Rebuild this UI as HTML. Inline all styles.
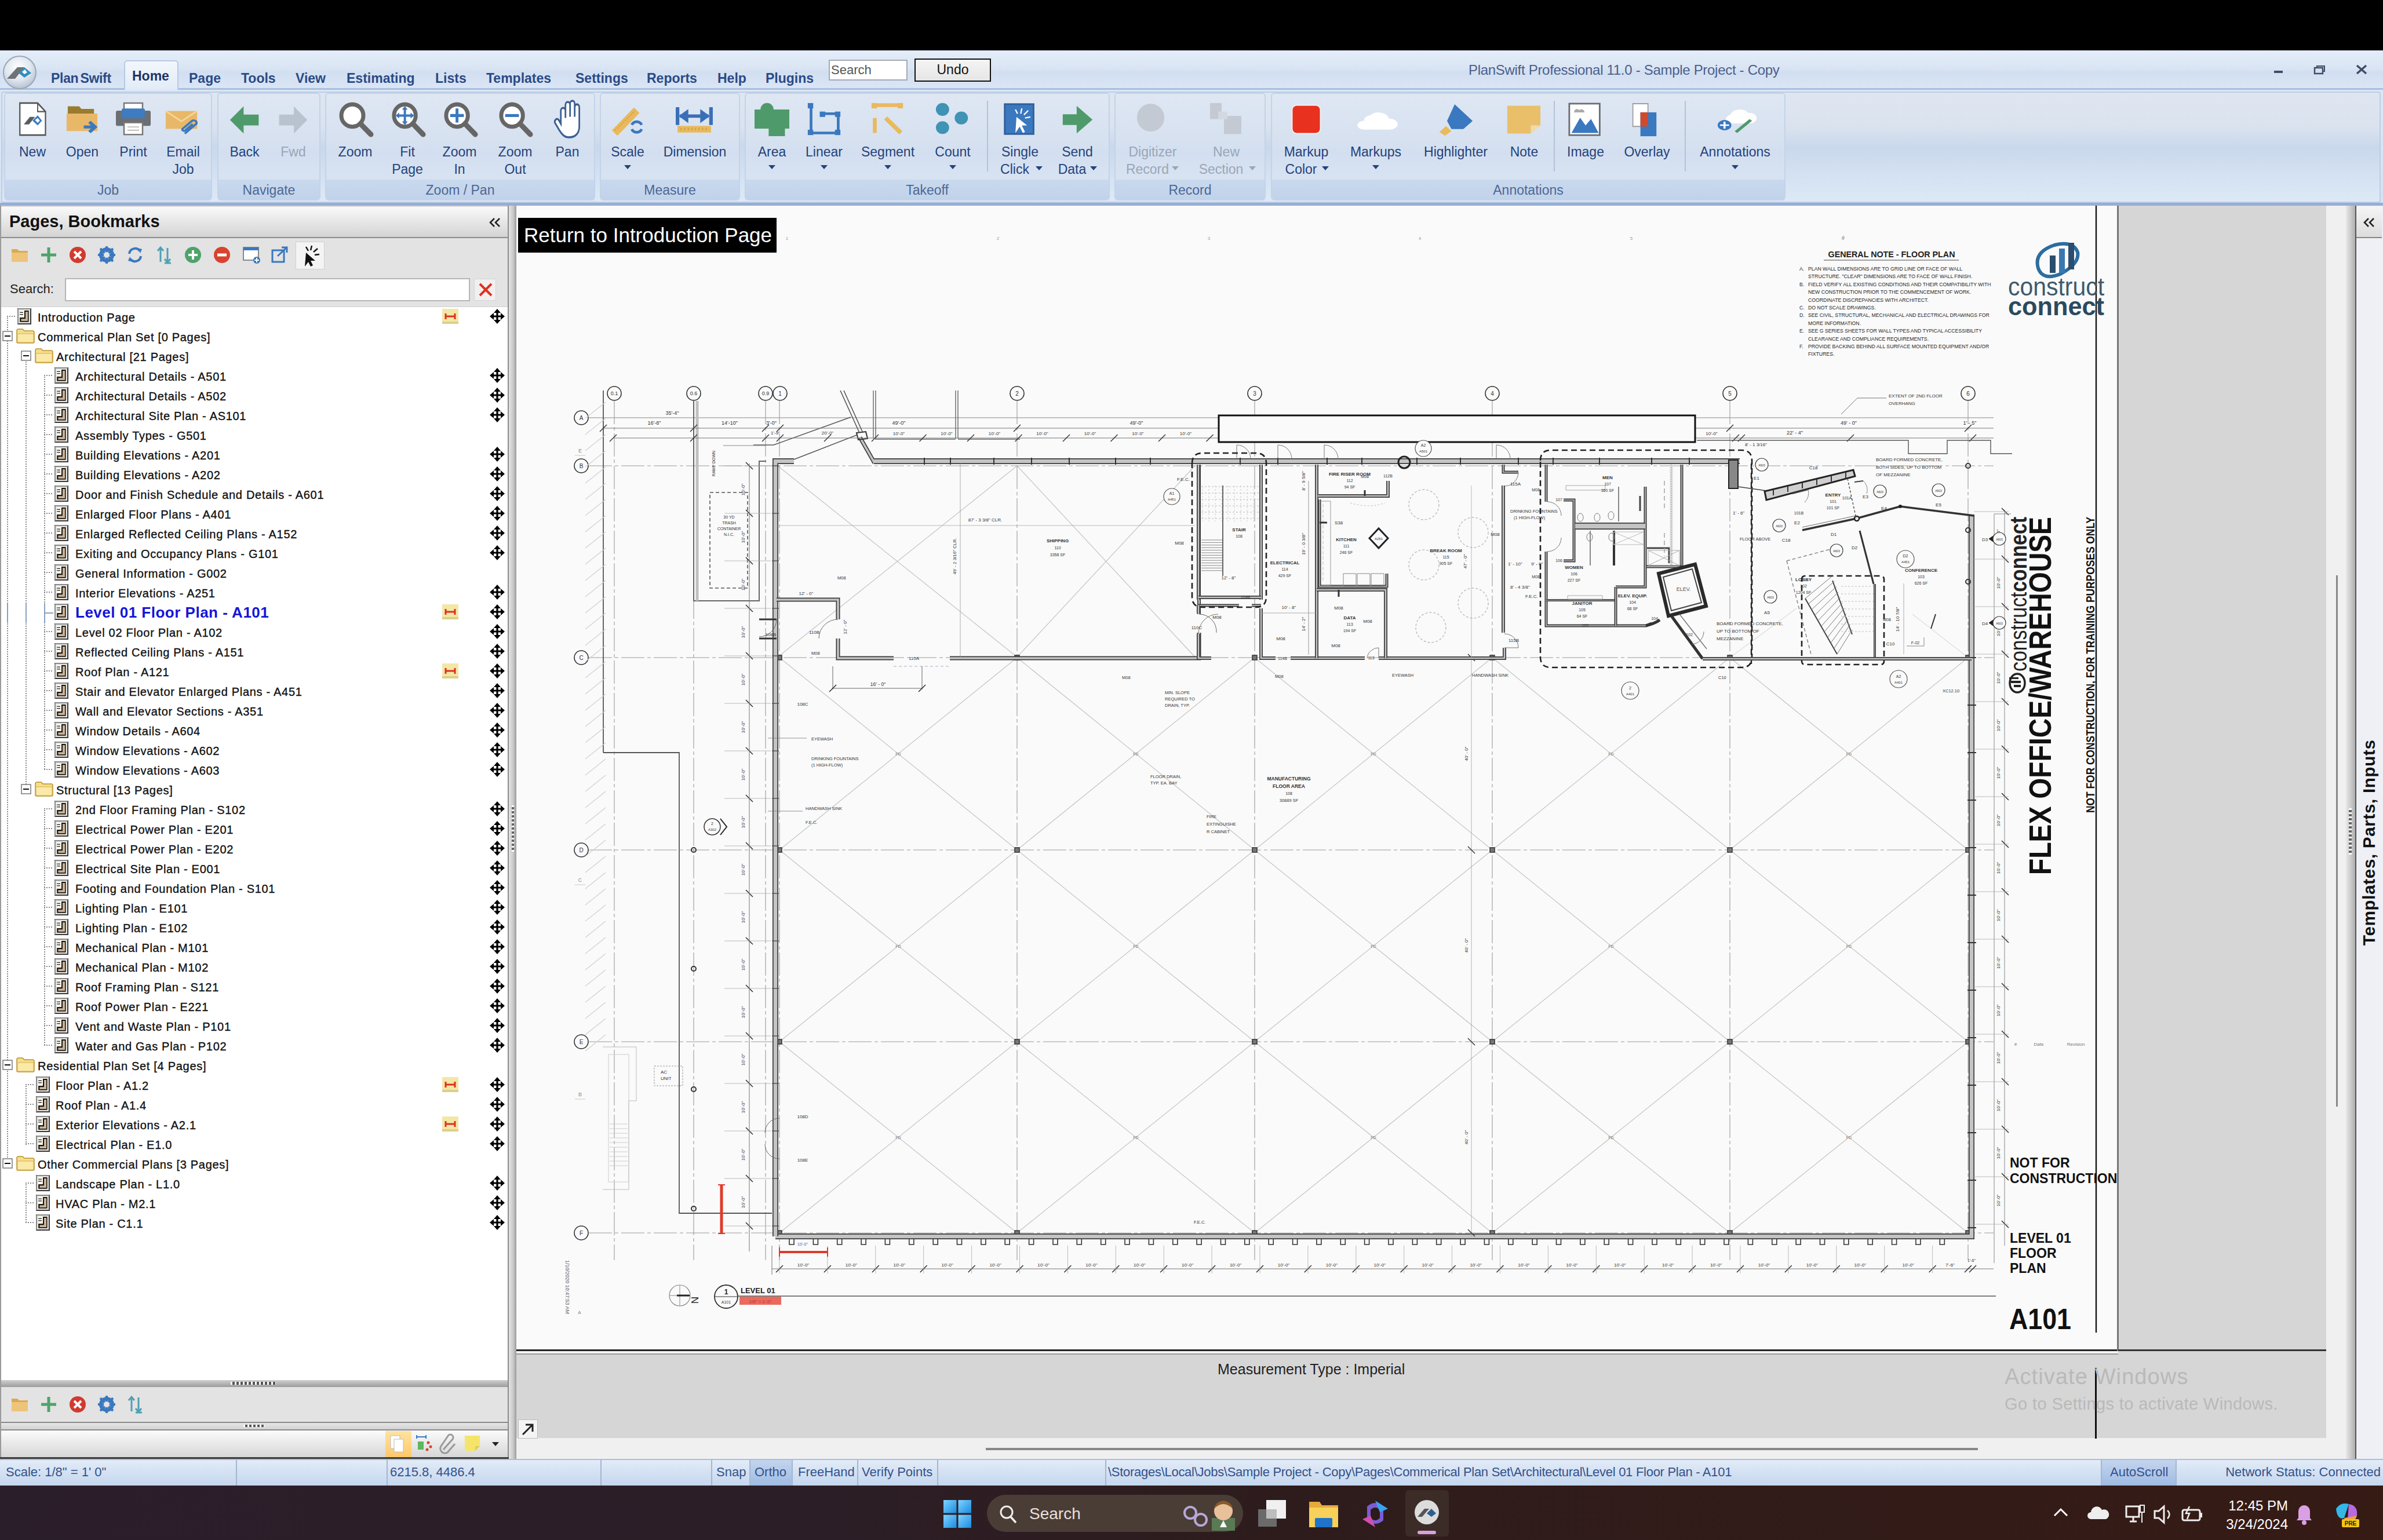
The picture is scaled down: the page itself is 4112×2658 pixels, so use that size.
<!DOCTYPE html>
<html><head><meta charset="utf-8">
<style>
*{margin:0;padding:0;box-sizing:border-box}
html,body{width:4112px;height:2658px;overflow:hidden;background:#000;font-family:"Liberation Sans",sans-serif}
.a{position:absolute}
svg{overflow:visible}
</style></head><body>
<div class="a" style="left:0;top:0;width:4112px;height:87px;background:#000"></div>
<div class="a" style="left:0;top:87px;width:4112px;height:68px;background:linear-gradient(#e4edf9 0%,#dae5f4 45%,#d2dff1 55%,#dbe6f5 100%)"></div>
<div class="a" style="left:0;top:152px;width:4112px;height:3px;background:#a9bfdf"></div>
<svg class="a" style="left:2px;top:94px" width="64" height="64" viewBox="0 0 64 64">
<defs><radialGradient id="lg" cx="45%" cy="35%" r="65%"><stop offset="0" stop-color="#ffffff"/><stop offset="0.6" stop-color="#dfe6ef"/><stop offset="1" stop-color="#b9c3d1"/></radialGradient></defs>
<circle cx="32" cy="31" r="28" fill="url(#lg)" stroke="#9aa7b8" stroke-width="2"/>
<path d="M10 42 L28 22 L40 22 L24 42 Z" fill="#6f7378"/><path d="M30 32 L40 22 L52 32 L40 40 Z" fill="#2f8fc0"/><path d="M36 30 L41 26 L45 31 L40 34Z" fill="#fff"/></svg>
<div class="a" style="left:88px;top:122px;font-size:23px;font-weight:700;color:#2a4a86;letter-spacing:-0.3px">Plan<span style="margin-left:3px">Swift</span></div>
<div class="a" style="left:214px;top:104px;width:94px;height:51px;background:linear-gradient(#f3f7fc,#e2ebf7);border:2px solid #b7c9e3;border-bottom:none;border-radius:6px 6px 0 0"></div>
<div class="a" style="left:228px;top:118px;font-size:23px;font-weight:700;color:#1e3466">Home</div>
<div class="a" style="left:326px;top:122px;font-size:23px;font-weight:700;color:#2a4a86">Page</div>
<div class="a" style="left:416px;top:122px;font-size:23px;font-weight:700;color:#2a4a86">Tools</div>
<div class="a" style="left:510px;top:122px;font-size:23px;font-weight:700;color:#2a4a86">View</div>
<div class="a" style="left:598px;top:122px;font-size:23px;font-weight:700;color:#2a4a86">Estimating</div>
<div class="a" style="left:751px;top:122px;font-size:23px;font-weight:700;color:#2a4a86">Lists</div>
<div class="a" style="left:839px;top:122px;font-size:23px;font-weight:700;color:#2a4a86">Templates</div>
<div class="a" style="left:993px;top:122px;font-size:23px;font-weight:700;color:#2a4a86">Settings</div>
<div class="a" style="left:1116px;top:122px;font-size:23px;font-weight:700;color:#2a4a86">Reports</div>
<div class="a" style="left:1238px;top:122px;font-size:23px;font-weight:700;color:#2a4a86">Help</div>
<div class="a" style="left:1321px;top:122px;font-size:23px;font-weight:700;color:#2a4a86">Plugins</div>
<div class="a" style="left:1430px;top:103px;width:136px;height:36px;background:#fff;border:2px solid #a3aab5;font-size:22px;color:#555;padding:3px 0 0 2px">Search</div>
<div class="a" style="left:1578px;top:101px;width:132px;height:40px;background:linear-gradient(#f4f4f4,#e6e6e6);border:2.5px solid #111;font-size:23px;color:#111;text-align:center;line-height:35px">Undo</div>
<div class="a" style="left:2534px;top:107px;font-size:24px;color:#4b5f8c;white-space:nowrap;letter-spacing:-0.3px">PlanSwift Professional 11.0 - Sample Project - Copy</div>
<div class="a" style="left:3924px;top:122px;width:15px;height:4px;background:#3e4c66"></div>
<svg class="a" style="left:3992px;top:112px" width="22" height="18"><rect x="2" y="5" width="14" height="10" fill="none" stroke="#3e4c66" stroke-width="2.5"/><path d="M6 5 V2 H19 V11 H16" fill="none" stroke="#3e4c66" stroke-width="2"/></svg>
<svg class="a" style="left:4064px;top:110px" width="22" height="20"><path d="M3 3 L19 17 M19 3 L3 17" stroke="#3e4c66" stroke-width="3.5"/></svg>
<div class="a" style="left:0;top:155px;width:4112px;height:195px;background:linear-gradient(#dce7f5,#d6e2f2)"></div>
<div class="a" style="left:0;top:350px;width:4112px;height:5px;background:#97add3"></div>
<div class="a" style="left:2px;top:158px;width:4106px;height:192px;border:2px solid #bccde6;border-radius:4px;background:linear-gradient(#dfe6f1 0%,#dbe3ef 30%,#cad8ec 50%,#d3e1f2 75%,#dde9f6 100%)"></div>
<div class="a" style="left:7px;top:160px;width:359px;height:186px;border:2px solid #c3d3e9;border-radius:6px;background:linear-gradient(#dfe7f3 0%,#d6e1f0 45%,#d3dff0 55%,#dbe6f3 100%);overflow:hidden"><div class="a" style="left:0;top:148px;width:359px;height:36px;background:linear-gradient(#c9d9ee,#c0d2ea)"></div><div class="a" style="left:0;top:153px;width:355px;text-align:center;font-size:23px;color:#4d6894">Job</div></div>
<div class="a" style="left:375px;top:160px;width:178px;height:186px;border:2px solid #c3d3e9;border-radius:6px;background:linear-gradient(#dfe7f3 0%,#d6e1f0 45%,#d3dff0 55%,#dbe6f3 100%);overflow:hidden"><div class="a" style="left:0;top:148px;width:178px;height:36px;background:linear-gradient(#c9d9ee,#c0d2ea)"></div><div class="a" style="left:0;top:153px;width:174px;text-align:center;font-size:23px;color:#4d6894">Navigate</div></div>
<div class="a" style="left:561px;top:160px;width:466px;height:186px;border:2px solid #c3d3e9;border-radius:6px;background:linear-gradient(#dfe7f3 0%,#d6e1f0 45%,#d3dff0 55%,#dbe6f3 100%);overflow:hidden"><div class="a" style="left:0;top:148px;width:466px;height:36px;background:linear-gradient(#c9d9ee,#c0d2ea)"></div><div class="a" style="left:0;top:153px;width:462px;text-align:center;font-size:23px;color:#4d6894">Zoom / Pan</div></div>
<div class="a" style="left:1035px;top:160px;width:242px;height:186px;border:2px solid #c3d3e9;border-radius:6px;background:linear-gradient(#dfe7f3 0%,#d6e1f0 45%,#d3dff0 55%,#dbe6f3 100%);overflow:hidden"><div class="a" style="left:0;top:148px;width:242px;height:36px;background:linear-gradient(#c9d9ee,#c0d2ea)"></div><div class="a" style="left:0;top:153px;width:238px;text-align:center;font-size:23px;color:#4d6894">Measure</div></div>
<div class="a" style="left:1285px;top:160px;width:630px;height:186px;border:2px solid #c3d3e9;border-radius:6px;background:linear-gradient(#dfe7f3 0%,#d6e1f0 45%,#d3dff0 55%,#dbe6f3 100%);overflow:hidden"><div class="a" style="left:0;top:148px;width:630px;height:36px;background:linear-gradient(#c9d9ee,#c0d2ea)"></div><div class="a" style="left:0;top:153px;width:626px;text-align:center;font-size:23px;color:#4d6894">Takeoff</div></div>
<div class="a" style="left:1923px;top:160px;width:261px;height:186px;border:2px solid #c3d3e9;border-radius:6px;background:linear-gradient(#dfe7f3 0%,#d6e1f0 45%,#d3dff0 55%,#dbe6f3 100%);overflow:hidden"><div class="a" style="left:0;top:148px;width:261px;height:36px;background:linear-gradient(#c9d9ee,#c0d2ea)"></div><div class="a" style="left:0;top:153px;width:257px;text-align:center;font-size:23px;color:#4d6894">Record</div></div>
<div class="a" style="left:2193px;top:160px;width:888px;height:186px;border:2px solid #c3d3e9;border-radius:6px;background:linear-gradient(#dfe7f3 0%,#d6e1f0 45%,#d3dff0 55%,#dbe6f3 100%);overflow:hidden"><div class="a" style="left:0;top:148px;width:888px;height:36px;background:linear-gradient(#c9d9ee,#c0d2ea)"></div><div class="a" style="left:0;top:153px;width:884px;text-align:center;font-size:23px;color:#4d6894">Annotations</div></div>
<svg class="a" style="left:32px;top:176px" width="48" height="59" viewBox="0 0 64 64" preserveAspectRatio="none"><path d="M3 2 H44 L62 18 V62 H3 Z" fill="#fff" stroke="#555" stroke-width="3"/><path d="M44 2 V18 H62" fill="none" stroke="#555" stroke-width="2.5"/><path d="M12 42 L26 28 L38 28 L24 42Z" fill="#595d62"/><path d="M32 35 L44 25 L54 35 L44 44Z" fill="#3b7cc4"/><path d="M38 34 L44 30 L49 35 L44 39Z" fill="#fff"/></svg>
<div class="a" style="left:-24px;top:249px;width:160px;text-align:center;font-size:23px;color:#24427a;white-space:nowrap">New</div>
<svg class="a" style="left:111px;top:180px" width="63" height="57" viewBox="0 0 64 64" preserveAspectRatio="none"><path d="M6 4 H26 L30 9 H52 V22 H6Z" fill="#9a7b2e"/><path d="M4 18 H58 V52 H4Z" fill="#e8b868"/><path d="M34 44 H52 M44 34 L54 44 L44 54" fill="none" stroke="#3a78c0" stroke-width="6"/></svg>
<div class="a" style="left:62px;top:249px;width:160px;text-align:center;font-size:23px;color:#24427a;white-space:nowrap">Open</div>
<svg class="a" style="left:198px;top:176px" width="64" height="60" viewBox="0 0 64 64" preserveAspectRatio="none"><rect x="16" y="2" width="32" height="14" fill="#fff" stroke="#777" stroke-width="2.5"/><rect x="2" y="16" width="60" height="28" rx="3" fill="#6b6e72"/><rect x="12" y="12" width="40" height="18" rx="3" fill="#3f7bc0"/><rect x="16" y="38" width="32" height="22" fill="#fff" stroke="#777" stroke-width="2.5"/><path d="M22 46 H42 M22 52 H42" stroke="#bbb" stroke-width="2"/></svg>
<div class="a" style="left:150px;top:249px;width:160px;text-align:center;font-size:23px;color:#24427a;white-space:nowrap">Print</div>
<svg class="a" style="left:284px;top:185px" width="62" height="52" viewBox="0 0 64 64" preserveAspectRatio="none"><rect x="2" y="8" width="56" height="38" fill="#e8b868"/><path d="M2 8 L30 30 L58 8" fill="none" stroke="#f4d79e" stroke-width="3"/><path d="M36 56 L56 36 a5 5 0 0 0 -7 -7 L32 46 a3 3 0 0 0 4 4 L50 36" fill="none" stroke="#3a78c0" stroke-width="4"/></svg>
<div class="a" style="left:236px;top:249px;width:160px;text-align:center;font-size:23px;color:#24427a;white-space:nowrap">Email</div>
<div class="a" style="left:236px;top:279px;width:160px;text-align:center;font-size:23px;color:#24427a;white-space:nowrap">Job</div>
<svg class="a" style="left:396px;top:182px" width="52" height="50" viewBox="0 0 64 64" preserveAspectRatio="none"><path d="M1 32 L30 2 V20 H62 V44 H30 V62Z" fill="#4f9a6a"/></svg>
<div class="a" style="left:342px;top:249px;width:160px;text-align:center;font-size:23px;color:#24427a;white-space:nowrap">Back</div>
<svg class="a" style="left:480px;top:182px" width="51" height="50" viewBox="0 0 64 64" preserveAspectRatio="none"><path d="M63 32 L34 2 V20 H2 V44 H34 V62Z" fill="#b9c3cf"/></svg>
<div class="a" style="left:426px;top:249px;width:160px;text-align:center;font-size:23px;color:#9aa6b6;white-space:nowrap">Fwd</div>
<svg class="a" style="left:582px;top:173px" width="64" height="65" viewBox="0 0 64 64" preserveAspectRatio="none"><circle cx="26" cy="26" r="19" fill="#fff" stroke="#666" stroke-width="7"/><path d="M40 40 L58 58" stroke="#666" stroke-width="9" stroke-linecap="round"/></svg>
<div class="a" style="left:533px;top:249px;width:160px;text-align:center;font-size:23px;color:#24427a;white-space:nowrap">Zoom</div>
<svg class="a" style="left:673px;top:173px" width="63" height="65" viewBox="0 0 64 64" preserveAspectRatio="none"><circle cx="26" cy="26" r="19" fill="#fff" stroke="#666" stroke-width="7"/><path d="M40 40 L58 58" stroke="#666" stroke-width="9" stroke-linecap="round"/><path d="M26 12 V40 M12 26 H40" stroke="#3a78c0" stroke-width="4"/><path d="M26 10 L21 16 H31Z M26 42 L21 36 H31Z M10 26 L16 21 V31Z M42 26 L36 21 V31Z" fill="#3a78c0"/></svg>
<div class="a" style="left:623px;top:249px;width:160px;text-align:center;font-size:23px;color:#24427a;white-space:nowrap">Fit</div>
<div class="a" style="left:623px;top:279px;width:160px;text-align:center;font-size:23px;color:#24427a;white-space:nowrap">Page</div>
<svg class="a" style="left:763px;top:173px" width="63" height="65" viewBox="0 0 64 64" preserveAspectRatio="none"><circle cx="26" cy="26" r="19" fill="#fff" stroke="#666" stroke-width="7"/><path d="M40 40 L58 58" stroke="#666" stroke-width="9" stroke-linecap="round"/><path d="M26 14 V38 M14 26 H38" stroke="#3a78c0" stroke-width="5"/></svg>
<div class="a" style="left:713px;top:249px;width:160px;text-align:center;font-size:23px;color:#24427a;white-space:nowrap">Zoom</div>
<div class="a" style="left:713px;top:279px;width:160px;text-align:center;font-size:23px;color:#24427a;white-space:nowrap">In</div>
<svg class="a" style="left:858px;top:173px" width="63" height="65" viewBox="0 0 64 64" preserveAspectRatio="none"><circle cx="26" cy="26" r="19" fill="#fff" stroke="#666" stroke-width="7"/><path d="M40 40 L58 58" stroke="#666" stroke-width="9" stroke-linecap="round"/><path d="M14 26 H38" stroke="#3a78c0" stroke-width="5"/></svg>
<div class="a" style="left:809px;top:249px;width:160px;text-align:center;font-size:23px;color:#24427a;white-space:nowrap">Zoom</div>
<div class="a" style="left:809px;top:279px;width:160px;text-align:center;font-size:23px;color:#24427a;white-space:nowrap">Out</div>
<svg class="a" style="left:955px;top:173px" width="51" height="65" viewBox="0 0 64 64" preserveAspectRatio="none"><path d="M16 40 V18 a5 5 0 0 1 10 0 V30 V8 a5 5 0 0 1 10 0 V28 V6 a5 5 0 0 1 10 0 V28 V12 a5 5 0 0 1 10 0 V44 C56 56 48 63 34 63 C24 63 18 58 12 50 L3 38 a5 5 0 0 1 8 -5 Z" fill="#fff" stroke="#3b5f94" stroke-width="3.5"/></svg>
<div class="a" style="left:899px;top:249px;width:160px;text-align:center;font-size:23px;color:#24427a;white-space:nowrap">Pan</div>
<svg class="a" style="left:1052px;top:178px" width="61" height="60" viewBox="0 0 64 64" preserveAspectRatio="none"><path d="M4 50 L44 8 L54 18 L14 60Z" fill="#e9b95c"/><path d="M10 50 L46 14" stroke="#c99a40" stroke-width="2" stroke-dasharray="2 3"/><path d="M40 40 a10 10 0 0 1 18 0 M58 48 a10 10 0 0 1 -18 0" fill="none" stroke="#3a78c0" stroke-width="5"/></svg>
<div class="a" style="left:1003px;top:249px;width:160px;text-align:center;font-size:23px;color:#24427a;white-space:nowrap">Scale</div>
<svg class="a" style="left:1077px;top:285px" width="12" height="8"><path d="M0 0 H12 L6 7Z" fill="#24427a"/></svg>
<svg class="a" style="left:1165px;top:180px" width="66" height="52" viewBox="0 0 64 64" preserveAspectRatio="none"><path d="M4 6 V44 M60 6 V44" stroke="#3a6fb8" stroke-width="6"/><path d="M8 25 H56" stroke="#3a6fb8" stroke-width="7"/><path d="M6 25 L22 10 V40Z M58 25 L42 10 V40Z" fill="#3a6fb8"/><rect x="4" y="46" width="56" height="14" fill="#e9b95c"/><path d="M10 50 V55 M16 50 V55 M22 50 V55 M28 50 V55 M34 50 V55 M40 50 V55 M46 50 V55 M52 50 V55" stroke="#c99a40" stroke-width="1.5"/></svg>
<div class="a" style="left:1119px;top:249px;width:160px;text-align:center;font-size:23px;color:#24427a;white-space:nowrap">Dimension</div>
<svg class="a" style="left:1302px;top:176px" width="60" height="59" viewBox="0 0 64 64" preserveAspectRatio="none"><path d="M0 14 H11 a12 12 0 0 1 24 0 H64 V50 H56 V64 H26 V50 H0 Z" fill="#4f9a6a"/></svg>
<div class="a" style="left:1252px;top:249px;width:160px;text-align:center;font-size:23px;color:#24427a;white-space:nowrap">Area</div>
<svg class="a" style="left:1326px;top:285px" width="12" height="8"><path d="M0 0 H12 L6 7Z" fill="#24427a"/></svg>
<svg class="a" style="left:1392px;top:176px" width="60" height="59" viewBox="0 0 64 64" preserveAspectRatio="none"><path d="M8 6 V58 H58 V22 H28" fill="none" stroke="#3a78c0" stroke-width="5"/><rect x="2" y="2" width="10" height="10" fill="#3a78c0"/><rect x="2" y="52" width="10" height="10" fill="#3a78c0"/><rect x="52" y="52" width="10" height="10" fill="#3a78c0"/><rect x="52" y="18" width="10" height="10" fill="#3a78c0"/><rect x="24" y="18" width="10" height="10" fill="#3a78c0"/></svg>
<div class="a" style="left:1342px;top:249px;width:160px;text-align:center;font-size:23px;color:#24427a;white-space:nowrap">Linear</div>
<svg class="a" style="left:1416px;top:285px" width="12" height="8"><path d="M0 0 H12 L6 7Z" fill="#24427a"/></svg>
<svg class="a" style="left:1502px;top:176px" width="60" height="59" viewBox="0 0 64 64" preserveAspectRatio="none"><path d="M4 6 H58" stroke="#e9b95c" stroke-width="7"/><rect x="2" y="2" width="10" height="10" fill="#e9b95c"/><rect x="50" y="2" width="10" height="10" fill="#e9b95c"/><path d="M8 30 V58" stroke="#e9b95c" stroke-width="7"/><path d="M28 30 L56 58" stroke="#e9b95c" stroke-width="8"/></svg>
<div class="a" style="left:1452px;top:249px;width:160px;text-align:center;font-size:23px;color:#24427a;white-space:nowrap">Segment</div>
<svg class="a" style="left:1526px;top:285px" width="12" height="8"><path d="M0 0 H12 L6 7Z" fill="#24427a"/></svg>
<svg class="a" style="left:1613px;top:176px" width="61" height="59" viewBox="0 0 64 64" preserveAspectRatio="none"><circle cx="14" cy="14" r="12" fill="#3f93b4"/><circle cx="48" cy="30" r="12" fill="#3f93b4"/><circle cx="14" cy="48" r="12" fill="#3f93b4"/></svg>
<div class="a" style="left:1564px;top:249px;width:160px;text-align:center;font-size:23px;color:#24427a;white-space:nowrap">Count</div>
<svg class="a" style="left:1638px;top:285px" width="12" height="8"><path d="M0 0 H12 L6 7Z" fill="#24427a"/></svg>
<svg class="a" style="left:1730px;top:176px" width="59" height="59" viewBox="0 0 64 64" preserveAspectRatio="none"><rect x="4" y="4" width="54" height="56" fill="#3a78c0" stroke="#2f5e9a" stroke-width="3"/><path d="M24 58 L26 28 L46 44 L36 44 L42 56 L38 58 L32 46Z" fill="#fff"/><path d="M34 22 L36 12 M40 24 L48 16 M42 30 L52 28 M28 22 L24 14" stroke="#fff" stroke-width="2.5"/></svg>
<div class="a" style="left:1680px;top:249px;width:160px;text-align:center;font-size:23px;color:#24427a;white-space:nowrap">Single</div>
<div class="a" style="left:1671px;top:279px;width:160px;text-align:center;font-size:23px;color:#24427a;white-space:nowrap">Click</div>
<svg class="a" style="left:1787px;top:287px" width="12" height="8"><path d="M0 0 H12 L6 7Z" fill="#24427a"/></svg>
<svg class="a" style="left:1833px;top:182px" width="53" height="49" viewBox="0 0 64 64" preserveAspectRatio="none"><path d="M1 20 H30 V1 L63 32 L30 63 V44 H1Z" fill="#4f9a6a"/></svg>
<div class="a" style="left:1779px;top:249px;width:160px;text-align:center;font-size:23px;color:#24427a;white-space:nowrap">Send</div>
<div class="a" style="left:1770px;top:279px;width:160px;text-align:center;font-size:23px;color:#24427a;white-space:nowrap">Data</div>
<svg class="a" style="left:1881px;top:287px" width="12" height="8"><path d="M0 0 H12 L6 7Z" fill="#24427a"/></svg>
<svg class="a" style="left:1961px;top:178px" width="56" height="57" viewBox="0 0 64 64" preserveAspectRatio="none"><circle cx="28" cy="28" r="27" fill="#c3cad3"/></svg>
<div class="a" style="left:1909px;top:249px;width:160px;text-align:center;font-size:23px;color:#9aa6b6;white-space:nowrap">Digitizer</div>
<div class="a" style="left:1900px;top:279px;width:160px;text-align:center;font-size:23px;color:#9aa6b6;white-space:nowrap">Record</div>
<svg class="a" style="left:2022px;top:287px" width="12" height="8"><path d="M0 0 H12 L6 7Z" fill="#9aa6b6"/></svg>
<svg class="a" style="left:2084px;top:176px" width="64" height="59" viewBox="0 0 64 64" preserveAspectRatio="none"><rect x="4" y="2" width="20" height="30" fill="#c3cad3"/><rect x="28" y="26" width="30" height="34" fill="#c3cad3"/><rect x="18" y="18" width="16" height="14" fill="#d3d9e0"/></svg>
<div class="a" style="left:2036px;top:249px;width:160px;text-align:center;font-size:23px;color:#9aa6b6;white-space:nowrap">New</div>
<div class="a" style="left:2027px;top:279px;width:160px;text-align:center;font-size:23px;color:#9aa6b6;white-space:nowrap">Section</div>
<svg class="a" style="left:2155px;top:287px" width="12" height="8"><path d="M0 0 H12 L6 7Z" fill="#9aa6b6"/></svg>
<svg class="a" style="left:2228px;top:180px" width="52" height="52" viewBox="0 0 64 64" preserveAspectRatio="none"><rect x="2" y="2" width="60" height="60" rx="10" fill="#e8311f" stroke="#f6f6f6" stroke-width="2"/></svg>
<div class="a" style="left:2174px;top:249px;width:160px;text-align:center;font-size:23px;color:#24427a;white-space:nowrap">Markup</div>
<div class="a" style="left:2165px;top:279px;width:160px;text-align:center;font-size:23px;color:#24427a;white-space:nowrap">Color</div>
<svg class="a" style="left:2281px;top:287px" width="12" height="8"><path d="M0 0 H12 L6 7Z" fill="#24427a"/></svg>
<svg class="a" style="left:2345px;top:187px" width="57" height="38" viewBox="0 0 64 64" preserveAspectRatio="none"><path d="M10 62 a12 12 0 0 1 0 -26 a14 14 0 0 1 12 -16 a20 20 0 0 1 36 10 a14 14 0 0 1 2 32Z" fill="#fff"/></svg>
<div class="a" style="left:2294px;top:249px;width:160px;text-align:center;font-size:23px;color:#24427a;white-space:nowrap">Markups</div>
<svg class="a" style="left:2368px;top:285px" width="12" height="8"><path d="M0 0 H12 L6 7Z" fill="#24427a"/></svg>
<svg class="a" style="left:2482px;top:179px" width="60" height="56" viewBox="0 0 64 64" preserveAspectRatio="none"><path d="M30 1 L63 34 L46 50 L24 50 L16 34Z" fill="#3a78c0"/><path d="M14 44 L24 54 L12 63 L2 56Z" fill="#e9b95c"/></svg>
<div class="a" style="left:2432px;top:249px;width:160px;text-align:center;font-size:23px;color:#24427a;white-space:nowrap">Highlighter</div>
<svg class="a" style="left:2599px;top:181px" width="61" height="51" viewBox="0 0 64 64" preserveAspectRatio="none"><path d="M2 2 H62 V44 L44 62 H2Z" fill="#e9bf6a"/><path d="M44 62 V44 H62" fill="#f4dba0" stroke="#e3c98a" stroke-width="2"/></svg>
<div class="a" style="left:2550px;top:249px;width:160px;text-align:center;font-size:23px;color:#24427a;white-space:nowrap">Note</div>
<svg class="a" style="left:2706px;top:177px" width="60" height="60" viewBox="0 0 64 64" preserveAspectRatio="none"><rect x="2" y="2" width="56" height="58" fill="#fff" stroke="#6b6e72" stroke-width="3"/><path d="M6 56 L22 28 L32 42 L42 30 L56 56Z" fill="#3a78c0"/><path d="M12 20 a5 5 0 0 1 8 -6 a6 6 0 0 1 10 4 H12Z" fill="#aaa"/></svg>
<div class="a" style="left:2656px;top:249px;width:160px;text-align:center;font-size:23px;color:#24427a;white-space:nowrap">Image</div>
<svg class="a" style="left:2816px;top:177px" width="52" height="60" viewBox="0 0 64 64" preserveAspectRatio="none"><rect x="2" y="2" width="32" height="42" fill="#fff" stroke="#999" stroke-width="2"/><rect x="18" y="18" width="34" height="44" fill="#3a78c0"/><rect x="18" y="18" width="16" height="26" fill="#d04a2e"/></svg>
<div class="a" style="left:2762px;top:249px;width:160px;text-align:center;font-size:23px;color:#24427a;white-space:nowrap">Overlay</div>
<svg class="a" style="left:2962px;top:183px" width="63" height="48" viewBox="0 0 64 64" preserveAspectRatio="none"><path d="M20 40 a12 12 0 0 1 4 -20 a18 18 0 0 1 32 -4 a12 12 0 0 1 4 24Z" fill="#fff"/><circle cx="14" cy="44" r="12" fill="#3a78c0"/><path d="M14 36 V52 M6 44 H22" stroke="#fff" stroke-width="3.5"/><path d="M34 60 L60 32" stroke="#4f9a6a" stroke-width="6"/></svg>
<div class="a" style="left:2914px;top:249px;width:160px;text-align:center;font-size:23px;color:#24427a;white-space:nowrap">Annotations</div>
<svg class="a" style="left:2988px;top:285px" width="12" height="8"><path d="M0 0 H12 L6 7Z" fill="#24427a"/></svg>
<div class="a" style="left:1703px;top:174px;width:2px;height:122px;background:#b3c3d9"></div>
<div class="a" style="left:2681px;top:174px;width:2px;height:122px;background:#b3c3d9"></div>
<div class="a" style="left:2907px;top:174px;width:2px;height:122px;background:#b3c3d9"></div>
<div class="a" style="left:0;top:355px;width:878px;height:2163px;background:#d8d8d8"></div>
<div class="a" style="left:2px;top:357px;width:874px;height:54px;background:linear-gradient(#fafafa,#e6e6e6 50%,#d4d4d4);border-bottom:2px solid #8c8c8c"></div>
<div class="a" style="left:16px;top:366px;font-size:29px;font-weight:700;color:#111">Pages, Bookmarks</div>
<svg class="a" style="left:844px;top:376px" width="22" height="16"><path d="M9 1 L2 8 L9 15 M18 1 L11 8 L18 15" fill="none" stroke="#222" stroke-width="2.6"/></svg>
<div class="a" style="left:2px;top:411px;width:874px;height:118px;background:#e3e3e3"></div>
<div class="a" style="left:510px;top:417px;width:50px;height:48px;background:#f4f4f4;border:1px solid #d0d0d0"></div>
<svg class="a" style="left:18px;top:424px" width="32" height="32" viewBox="0 0 32 32"><path d="M2 6 H12 L15 9 H30 V28 H2Z" fill="#d9aa55"/><path d="M2 12 H30 V28 H2Z" fill="#eec47a"/></svg><svg class="a" style="left:68px;top:424px" width="32" height="32" viewBox="0 0 32 32"><path d="M16 3 V29 M3 16 H29" stroke="#4fa36a" stroke-width="5"/></svg><svg class="a" style="left:118px;top:424px" width="32" height="32" viewBox="0 0 32 32"><circle cx="16" cy="16" r="14" fill="#d13b2e"/><path d="M10 10 L22 22 M22 10 L10 22" stroke="#fff" stroke-width="4"/></svg><svg class="a" style="left:168px;top:424px" width="32" height="32" viewBox="0 0 32 32"><circle cx="16" cy="16" r="10" fill="none" stroke="#3a78c0" stroke-width="6"/><path d="M16 1 V31 M1 16 H31 M5 5 L27 27 M27 5 L5 27" stroke="#3a78c0" stroke-width="4"/><circle cx="16" cy="16" r="5" fill="#e4e4e4"/></svg><svg class="a" style="left:217px;top:424px" width="32" height="32" viewBox="0 0 32 32"><path d="M6 14 a10 10 0 0 1 18 -5 M26 18 a10 10 0 0 1 -18 5" fill="none" stroke="#3a78c0" stroke-width="4"/><path d="M20 4 L28 6 L25 13Z M12 28 L4 26 L7 19Z" fill="#3a78c0"/></svg><svg class="a" style="left:267px;top:424px" width="32" height="32" viewBox="0 0 32 32"><path d="M10 28 V4 M5 9 L10 3 L15 9 M22 4 V28 M17 23 L22 29 L27 23 M17 30 H28" fill="none" stroke="#4fa0b4" stroke-width="3"/></svg><svg class="a" style="left:317px;top:424px" width="32" height="32" viewBox="0 0 32 32"><circle cx="16" cy="16" r="14" fill="#4fa36a"/><path d="M16 8 V24 M8 16 H24" stroke="#fff" stroke-width="4"/></svg><svg class="a" style="left:367px;top:424px" width="32" height="32" viewBox="0 0 32 32"><circle cx="16" cy="16" r="14" fill="#d9432e"/><path d="M8 16 H24" stroke="#fff" stroke-width="5"/></svg><svg class="a" style="left:418px;top:424px" width="32" height="32" viewBox="0 0 32 32"><rect x="2" y="3" width="26" height="22" fill="#fff" stroke="#888" stroke-width="2"/><rect x="2" y="3" width="26" height="5" fill="#3a78c0"/><circle cx="25" cy="25" r="6" fill="#3a78c0"/><path d="M25 21 V29 M21 25 H29" stroke="#fff" stroke-width="2"/></svg><svg class="a" style="left:467px;top:424px" width="32" height="32" viewBox="0 0 32 32"><rect x="3" y="8" width="20" height="20" fill="none" stroke="#3a78c0" stroke-width="3"/><path d="M12 18 L28 3 M19 3 H28 V12" fill="none" stroke="#3a78c0" stroke-width="3"/></svg>
<svg class="a" style="left:518px;top:422px" width="34" height="40" viewBox="0 0 34 40"><path d="M8 38 L10 14 L26 28 L18 28 L22 36 L18 38 L14 30Z" fill="#111"/><path d="M18 10 L20 2 M23 13 L30 7 M25 18 L33 17 M14 11 L10 4" stroke="#111" stroke-width="2.5"/></svg>
<div class="a" style="left:17px;top:486px;font-size:22px;color:#222">Search:</div>
<div class="a" style="left:112px;top:480px;width:699px;height:40px;background:#fff;border:2px solid #b5b5b5"></div>
<div class="a" style="left:818px;top:481px;width:38px;height:38px;background:#f0f0f0;border:1px solid #d5d5d5"></div>
<svg class="a" style="left:824px;top:486px" width="28" height="28"><path d="M4 4 L24 24 M24 4 L4 24" stroke="#e0301e" stroke-width="4"/></svg>
<div class="a" style="left:2px;top:529px;width:874px;height:1853px;background:#fff;border-top:1px solid #cfcfcf"></div>
<div class="a" style="left:12px;top:548px;width:2px;height:1462px;background:repeating-linear-gradient(#8a8a8a 0 2px,transparent 2px 4px)"></div>
<div class="a" style="left:44px;top:616px;width:2px;height:748px;background:repeating-linear-gradient(#8a8a8a 0 2px,transparent 2px 4px)"></div>
<div class="a" style="left:76px;top:650px;width:2px;height:680px;background:repeating-linear-gradient(#8a8a8a 0 2px,transparent 2px 4px)"></div>
<div class="a" style="left:76px;top:1398px;width:2px;height:408px;background:repeating-linear-gradient(#8a8a8a 0 2px,transparent 2px 4px)"></div>
<div class="a" style="left:44px;top:1874px;width:2px;height:102px;background:repeating-linear-gradient(#8a8a8a 0 2px,transparent 2px 4px)"></div>
<div class="a" style="left:44px;top:2044px;width:2px;height:68px;background:repeating-linear-gradient(#8a8a8a 0 2px,transparent 2px 4px)"></div>
<div class="a" style="left:12px;top:1041px;width:2px;height:34px;background:#8aa0bd"></div>
<div class="a" style="left:44px;top:1041px;width:2px;height:34px;background:#8aa0bd"></div>
<div class="a" style="left:76px;top:1041px;width:2px;height:34px;background:#8aa0bd"></div>
<div class="a" style="left:76px;top:1057px;width:16px;height:2px;background:#8aa0bd"></div>
<div class="a" style="left:12px;top:545px;width:16px;height:2px;background:repeating-linear-gradient(90deg,#8a8a8a 0 2px,transparent 2px 4px)"></div>
<svg class="a" style="left:30px;top:532px" width="24" height="28" viewBox="0 0 24 28"><rect x="1" y="1" width="22" height="26" fill="#fdfcf6" stroke="#3a3a3a" stroke-width="2"/><path d="M1 1 H23 M1 1 V27" stroke="#888" stroke-width="2"/><rect x="3" y="3" width="18" height="22" fill="none" stroke="#d0d0d0" stroke-width="1"/><path d="M12 4 H19.6 V23.7 H4.2 V16 H12Z" fill="#1a140c"/><path d="M14 6 H18 V22 H6.4 V18.3 H14Z" fill="#c9b49a"/><path d="M4.2 7.2 H10 M4.2 10.8 H10" stroke="#3a3a30" stroke-width="1.6"/></svg>
<div class="a" style="left:65px;top:535px;font-size:20px;line-height:26px;color:#111;white-space:nowrap;letter-spacing:0.7px;-webkit-text-stroke:0.35px #111">Introduction Page</div>
<svg class="a" style="left:763px;top:533px" width="28" height="26" viewBox="0 0 28 26"><rect x="0" y="0" width="28" height="26" fill="#f3e7a6"/><rect x="0" y="22" width="28" height="4" fill="#dccf8a"/><path d="M6 8 V18 M22 8 V18 M6 13 H22" stroke="#e0301e" stroke-width="3"/></svg>
<svg class="a" style="left:845px;top:533px" width="26" height="26" viewBox="0 0 26 26"><path d="M13 3 V23 M3 13 H23" stroke="#000" stroke-width="3.2"/><path d="M13 0 L19 7 H7Z M13 26 L19 19 H7Z M0 13 L7 7 V19Z M26 13 L19 7 V19Z" fill="#000"/></svg>
<svg class="a" style="left:4px;top:571px" width="18" height="18" viewBox="0 0 18 18"><rect x="1" y="1" width="16" height="16" fill="#fff" stroke="#777" stroke-width="1.5"/><path d="M4 9 H14" stroke="#111" stroke-width="2"/></svg>
<svg class="a" style="left:28px;top:567px" width="32" height="26" viewBox="0 0 32 26"><path d="M1 4 Q1 1 4 1 H11 L14 4 H28 Q31 4 31 7 V23 Q31 25 29 25 H3 Q1 25 1 23Z" fill="#f6dd8a" stroke="#b8922e" stroke-width="1.5"/><path d="M2 9 H30 V23 Q30 24 29 24 H3 Q2 24 2 23Z" fill="#fbe9a8" stroke="#d4b050" stroke-width="1"/></svg>
<div class="a" style="left:65px;top:569px;font-size:20px;line-height:26px;color:#111;white-space:nowrap;letter-spacing:0.7px;-webkit-text-stroke:0.35px #111">Commerical Plan Set [0 Pages]</div>
<svg class="a" style="left:36px;top:605px" width="18" height="18" viewBox="0 0 18 18"><rect x="1" y="1" width="16" height="16" fill="#fff" stroke="#777" stroke-width="1.5"/><path d="M4 9 H14" stroke="#111" stroke-width="2"/></svg>
<svg class="a" style="left:60px;top:601px" width="32" height="26" viewBox="0 0 32 26"><path d="M1 4 Q1 1 4 1 H11 L14 4 H28 Q31 4 31 7 V23 Q31 25 29 25 H3 Q1 25 1 23Z" fill="#f6dd8a" stroke="#b8922e" stroke-width="1.5"/><path d="M2 9 H30 V23 Q30 24 29 24 H3 Q2 24 2 23Z" fill="#fbe9a8" stroke="#d4b050" stroke-width="1"/></svg>
<div class="a" style="left:97px;top:603px;font-size:20px;line-height:26px;color:#111;white-space:nowrap;letter-spacing:0.7px;-webkit-text-stroke:0.35px #111">Architectural [21 Pages]</div>
<div class="a" style="left:76px;top:647px;width:16px;height:2px;background:repeating-linear-gradient(90deg,#8a8a8a 0 2px,transparent 2px 4px)"></div>
<svg class="a" style="left:94px;top:634px" width="24" height="28" viewBox="0 0 24 28"><rect x="1" y="1" width="22" height="26" fill="#fdfcf6" stroke="#3a3a3a" stroke-width="2"/><path d="M1 1 H23 M1 1 V27" stroke="#888" stroke-width="2"/><rect x="3" y="3" width="18" height="22" fill="none" stroke="#d0d0d0" stroke-width="1"/><path d="M12 4 H19.6 V23.7 H4.2 V16 H12Z" fill="#1a140c"/><path d="M14 6 H18 V22 H6.4 V18.3 H14Z" fill="#c9b49a"/><path d="M4.2 7.2 H10 M4.2 10.8 H10" stroke="#3a3a30" stroke-width="1.6"/></svg>
<div class="a" style="left:130px;top:637px;font-size:20px;line-height:26px;color:#111;white-space:nowrap;letter-spacing:0.7px;-webkit-text-stroke:0.35px #111">Architectural Details - A501</div>
<svg class="a" style="left:845px;top:635px" width="26" height="26" viewBox="0 0 26 26"><path d="M13 3 V23 M3 13 H23" stroke="#000" stroke-width="3.2"/><path d="M13 0 L19 7 H7Z M13 26 L19 19 H7Z M0 13 L7 7 V19Z M26 13 L19 7 V19Z" fill="#000"/></svg>
<div class="a" style="left:76px;top:681px;width:16px;height:2px;background:repeating-linear-gradient(90deg,#8a8a8a 0 2px,transparent 2px 4px)"></div>
<svg class="a" style="left:94px;top:668px" width="24" height="28" viewBox="0 0 24 28"><rect x="1" y="1" width="22" height="26" fill="#fdfcf6" stroke="#3a3a3a" stroke-width="2"/><path d="M1 1 H23 M1 1 V27" stroke="#888" stroke-width="2"/><rect x="3" y="3" width="18" height="22" fill="none" stroke="#d0d0d0" stroke-width="1"/><path d="M12 4 H19.6 V23.7 H4.2 V16 H12Z" fill="#1a140c"/><path d="M14 6 H18 V22 H6.4 V18.3 H14Z" fill="#c9b49a"/><path d="M4.2 7.2 H10 M4.2 10.8 H10" stroke="#3a3a30" stroke-width="1.6"/></svg>
<div class="a" style="left:130px;top:671px;font-size:20px;line-height:26px;color:#111;white-space:nowrap;letter-spacing:0.7px;-webkit-text-stroke:0.35px #111">Architectural Details - A502</div>
<svg class="a" style="left:845px;top:669px" width="26" height="26" viewBox="0 0 26 26"><path d="M13 3 V23 M3 13 H23" stroke="#000" stroke-width="3.2"/><path d="M13 0 L19 7 H7Z M13 26 L19 19 H7Z M0 13 L7 7 V19Z M26 13 L19 7 V19Z" fill="#000"/></svg>
<div class="a" style="left:76px;top:715px;width:16px;height:2px;background:repeating-linear-gradient(90deg,#8a8a8a 0 2px,transparent 2px 4px)"></div>
<svg class="a" style="left:94px;top:702px" width="24" height="28" viewBox="0 0 24 28"><rect x="1" y="1" width="22" height="26" fill="#fdfcf6" stroke="#3a3a3a" stroke-width="2"/><path d="M1 1 H23 M1 1 V27" stroke="#888" stroke-width="2"/><rect x="3" y="3" width="18" height="22" fill="none" stroke="#d0d0d0" stroke-width="1"/><path d="M12 4 H19.6 V23.7 H4.2 V16 H12Z" fill="#1a140c"/><path d="M14 6 H18 V22 H6.4 V18.3 H14Z" fill="#c9b49a"/><path d="M4.2 7.2 H10 M4.2 10.8 H10" stroke="#3a3a30" stroke-width="1.6"/></svg>
<div class="a" style="left:130px;top:705px;font-size:20px;line-height:26px;color:#111;white-space:nowrap;letter-spacing:0.7px;-webkit-text-stroke:0.35px #111">Architectural Site Plan - AS101</div>
<svg class="a" style="left:845px;top:703px" width="26" height="26" viewBox="0 0 26 26"><path d="M13 3 V23 M3 13 H23" stroke="#000" stroke-width="3.2"/><path d="M13 0 L19 7 H7Z M13 26 L19 19 H7Z M0 13 L7 7 V19Z M26 13 L19 7 V19Z" fill="#000"/></svg>
<div class="a" style="left:76px;top:749px;width:16px;height:2px;background:repeating-linear-gradient(90deg,#8a8a8a 0 2px,transparent 2px 4px)"></div>
<svg class="a" style="left:94px;top:736px" width="24" height="28" viewBox="0 0 24 28"><rect x="1" y="1" width="22" height="26" fill="#fdfcf6" stroke="#3a3a3a" stroke-width="2"/><path d="M1 1 H23 M1 1 V27" stroke="#888" stroke-width="2"/><rect x="3" y="3" width="18" height="22" fill="none" stroke="#d0d0d0" stroke-width="1"/><path d="M12 4 H19.6 V23.7 H4.2 V16 H12Z" fill="#1a140c"/><path d="M14 6 H18 V22 H6.4 V18.3 H14Z" fill="#c9b49a"/><path d="M4.2 7.2 H10 M4.2 10.8 H10" stroke="#3a3a30" stroke-width="1.6"/></svg>
<div class="a" style="left:130px;top:739px;font-size:20px;line-height:26px;color:#111;white-space:nowrap;letter-spacing:0.7px;-webkit-text-stroke:0.35px #111">Assembly Types - G501</div>
<div class="a" style="left:76px;top:783px;width:16px;height:2px;background:repeating-linear-gradient(90deg,#8a8a8a 0 2px,transparent 2px 4px)"></div>
<svg class="a" style="left:94px;top:770px" width="24" height="28" viewBox="0 0 24 28"><rect x="1" y="1" width="22" height="26" fill="#fdfcf6" stroke="#3a3a3a" stroke-width="2"/><path d="M1 1 H23 M1 1 V27" stroke="#888" stroke-width="2"/><rect x="3" y="3" width="18" height="22" fill="none" stroke="#d0d0d0" stroke-width="1"/><path d="M12 4 H19.6 V23.7 H4.2 V16 H12Z" fill="#1a140c"/><path d="M14 6 H18 V22 H6.4 V18.3 H14Z" fill="#c9b49a"/><path d="M4.2 7.2 H10 M4.2 10.8 H10" stroke="#3a3a30" stroke-width="1.6"/></svg>
<div class="a" style="left:130px;top:773px;font-size:20px;line-height:26px;color:#111;white-space:nowrap;letter-spacing:0.7px;-webkit-text-stroke:0.35px #111">Building Elevations - A201</div>
<svg class="a" style="left:845px;top:771px" width="26" height="26" viewBox="0 0 26 26"><path d="M13 3 V23 M3 13 H23" stroke="#000" stroke-width="3.2"/><path d="M13 0 L19 7 H7Z M13 26 L19 19 H7Z M0 13 L7 7 V19Z M26 13 L19 7 V19Z" fill="#000"/></svg>
<div class="a" style="left:76px;top:817px;width:16px;height:2px;background:repeating-linear-gradient(90deg,#8a8a8a 0 2px,transparent 2px 4px)"></div>
<svg class="a" style="left:94px;top:804px" width="24" height="28" viewBox="0 0 24 28"><rect x="1" y="1" width="22" height="26" fill="#fdfcf6" stroke="#3a3a3a" stroke-width="2"/><path d="M1 1 H23 M1 1 V27" stroke="#888" stroke-width="2"/><rect x="3" y="3" width="18" height="22" fill="none" stroke="#d0d0d0" stroke-width="1"/><path d="M12 4 H19.6 V23.7 H4.2 V16 H12Z" fill="#1a140c"/><path d="M14 6 H18 V22 H6.4 V18.3 H14Z" fill="#c9b49a"/><path d="M4.2 7.2 H10 M4.2 10.8 H10" stroke="#3a3a30" stroke-width="1.6"/></svg>
<div class="a" style="left:130px;top:807px;font-size:20px;line-height:26px;color:#111;white-space:nowrap;letter-spacing:0.7px;-webkit-text-stroke:0.35px #111">Building Elevations - A202</div>
<svg class="a" style="left:845px;top:805px" width="26" height="26" viewBox="0 0 26 26"><path d="M13 3 V23 M3 13 H23" stroke="#000" stroke-width="3.2"/><path d="M13 0 L19 7 H7Z M13 26 L19 19 H7Z M0 13 L7 7 V19Z M26 13 L19 7 V19Z" fill="#000"/></svg>
<div class="a" style="left:76px;top:851px;width:16px;height:2px;background:repeating-linear-gradient(90deg,#8a8a8a 0 2px,transparent 2px 4px)"></div>
<svg class="a" style="left:94px;top:838px" width="24" height="28" viewBox="0 0 24 28"><rect x="1" y="1" width="22" height="26" fill="#fdfcf6" stroke="#3a3a3a" stroke-width="2"/><path d="M1 1 H23 M1 1 V27" stroke="#888" stroke-width="2"/><rect x="3" y="3" width="18" height="22" fill="none" stroke="#d0d0d0" stroke-width="1"/><path d="M12 4 H19.6 V23.7 H4.2 V16 H12Z" fill="#1a140c"/><path d="M14 6 H18 V22 H6.4 V18.3 H14Z" fill="#c9b49a"/><path d="M4.2 7.2 H10 M4.2 10.8 H10" stroke="#3a3a30" stroke-width="1.6"/></svg>
<div class="a" style="left:130px;top:841px;font-size:20px;line-height:26px;color:#111;white-space:nowrap;letter-spacing:0.7px;-webkit-text-stroke:0.35px #111">Door and Finish Schedule and Details - A601</div>
<svg class="a" style="left:845px;top:839px" width="26" height="26" viewBox="0 0 26 26"><path d="M13 3 V23 M3 13 H23" stroke="#000" stroke-width="3.2"/><path d="M13 0 L19 7 H7Z M13 26 L19 19 H7Z M0 13 L7 7 V19Z M26 13 L19 7 V19Z" fill="#000"/></svg>
<div class="a" style="left:76px;top:885px;width:16px;height:2px;background:repeating-linear-gradient(90deg,#8a8a8a 0 2px,transparent 2px 4px)"></div>
<svg class="a" style="left:94px;top:872px" width="24" height="28" viewBox="0 0 24 28"><rect x="1" y="1" width="22" height="26" fill="#fdfcf6" stroke="#3a3a3a" stroke-width="2"/><path d="M1 1 H23 M1 1 V27" stroke="#888" stroke-width="2"/><rect x="3" y="3" width="18" height="22" fill="none" stroke="#d0d0d0" stroke-width="1"/><path d="M12 4 H19.6 V23.7 H4.2 V16 H12Z" fill="#1a140c"/><path d="M14 6 H18 V22 H6.4 V18.3 H14Z" fill="#c9b49a"/><path d="M4.2 7.2 H10 M4.2 10.8 H10" stroke="#3a3a30" stroke-width="1.6"/></svg>
<div class="a" style="left:130px;top:875px;font-size:20px;line-height:26px;color:#111;white-space:nowrap;letter-spacing:0.7px;-webkit-text-stroke:0.35px #111">Enlarged Floor Plans - A401</div>
<svg class="a" style="left:845px;top:873px" width="26" height="26" viewBox="0 0 26 26"><path d="M13 3 V23 M3 13 H23" stroke="#000" stroke-width="3.2"/><path d="M13 0 L19 7 H7Z M13 26 L19 19 H7Z M0 13 L7 7 V19Z M26 13 L19 7 V19Z" fill="#000"/></svg>
<div class="a" style="left:76px;top:919px;width:16px;height:2px;background:repeating-linear-gradient(90deg,#8a8a8a 0 2px,transparent 2px 4px)"></div>
<svg class="a" style="left:94px;top:906px" width="24" height="28" viewBox="0 0 24 28"><rect x="1" y="1" width="22" height="26" fill="#fdfcf6" stroke="#3a3a3a" stroke-width="2"/><path d="M1 1 H23 M1 1 V27" stroke="#888" stroke-width="2"/><rect x="3" y="3" width="18" height="22" fill="none" stroke="#d0d0d0" stroke-width="1"/><path d="M12 4 H19.6 V23.7 H4.2 V16 H12Z" fill="#1a140c"/><path d="M14 6 H18 V22 H6.4 V18.3 H14Z" fill="#c9b49a"/><path d="M4.2 7.2 H10 M4.2 10.8 H10" stroke="#3a3a30" stroke-width="1.6"/></svg>
<div class="a" style="left:130px;top:909px;font-size:20px;line-height:26px;color:#111;white-space:nowrap;letter-spacing:0.7px;-webkit-text-stroke:0.35px #111">Enlarged Reflected Ceiling Plans - A152</div>
<svg class="a" style="left:845px;top:907px" width="26" height="26" viewBox="0 0 26 26"><path d="M13 3 V23 M3 13 H23" stroke="#000" stroke-width="3.2"/><path d="M13 0 L19 7 H7Z M13 26 L19 19 H7Z M0 13 L7 7 V19Z M26 13 L19 7 V19Z" fill="#000"/></svg>
<div class="a" style="left:76px;top:953px;width:16px;height:2px;background:repeating-linear-gradient(90deg,#8a8a8a 0 2px,transparent 2px 4px)"></div>
<svg class="a" style="left:94px;top:940px" width="24" height="28" viewBox="0 0 24 28"><rect x="1" y="1" width="22" height="26" fill="#fdfcf6" stroke="#3a3a3a" stroke-width="2"/><path d="M1 1 H23 M1 1 V27" stroke="#888" stroke-width="2"/><rect x="3" y="3" width="18" height="22" fill="none" stroke="#d0d0d0" stroke-width="1"/><path d="M12 4 H19.6 V23.7 H4.2 V16 H12Z" fill="#1a140c"/><path d="M14 6 H18 V22 H6.4 V18.3 H14Z" fill="#c9b49a"/><path d="M4.2 7.2 H10 M4.2 10.8 H10" stroke="#3a3a30" stroke-width="1.6"/></svg>
<div class="a" style="left:130px;top:943px;font-size:20px;line-height:26px;color:#111;white-space:nowrap;letter-spacing:0.7px;-webkit-text-stroke:0.35px #111">Exiting and Occupancy Plans - G101</div>
<svg class="a" style="left:845px;top:941px" width="26" height="26" viewBox="0 0 26 26"><path d="M13 3 V23 M3 13 H23" stroke="#000" stroke-width="3.2"/><path d="M13 0 L19 7 H7Z M13 26 L19 19 H7Z M0 13 L7 7 V19Z M26 13 L19 7 V19Z" fill="#000"/></svg>
<div class="a" style="left:76px;top:987px;width:16px;height:2px;background:repeating-linear-gradient(90deg,#8a8a8a 0 2px,transparent 2px 4px)"></div>
<svg class="a" style="left:94px;top:974px" width="24" height="28" viewBox="0 0 24 28"><rect x="1" y="1" width="22" height="26" fill="#fdfcf6" stroke="#3a3a3a" stroke-width="2"/><path d="M1 1 H23 M1 1 V27" stroke="#888" stroke-width="2"/><rect x="3" y="3" width="18" height="22" fill="none" stroke="#d0d0d0" stroke-width="1"/><path d="M12 4 H19.6 V23.7 H4.2 V16 H12Z" fill="#1a140c"/><path d="M14 6 H18 V22 H6.4 V18.3 H14Z" fill="#c9b49a"/><path d="M4.2 7.2 H10 M4.2 10.8 H10" stroke="#3a3a30" stroke-width="1.6"/></svg>
<div class="a" style="left:130px;top:977px;font-size:20px;line-height:26px;color:#111;white-space:nowrap;letter-spacing:0.7px;-webkit-text-stroke:0.35px #111">General Information - G002</div>
<div class="a" style="left:76px;top:1021px;width:16px;height:2px;background:repeating-linear-gradient(90deg,#8a8a8a 0 2px,transparent 2px 4px)"></div>
<svg class="a" style="left:94px;top:1008px" width="24" height="28" viewBox="0 0 24 28"><rect x="1" y="1" width="22" height="26" fill="#fdfcf6" stroke="#3a3a3a" stroke-width="2"/><path d="M1 1 H23 M1 1 V27" stroke="#888" stroke-width="2"/><rect x="3" y="3" width="18" height="22" fill="none" stroke="#d0d0d0" stroke-width="1"/><path d="M12 4 H19.6 V23.7 H4.2 V16 H12Z" fill="#1a140c"/><path d="M14 6 H18 V22 H6.4 V18.3 H14Z" fill="#c9b49a"/><path d="M4.2 7.2 H10 M4.2 10.8 H10" stroke="#3a3a30" stroke-width="1.6"/></svg>
<div class="a" style="left:130px;top:1011px;font-size:20px;line-height:26px;color:#111;white-space:nowrap;letter-spacing:0.7px;-webkit-text-stroke:0.35px #111">Interior Elevations - A251</div>
<svg class="a" style="left:845px;top:1009px" width="26" height="26" viewBox="0 0 26 26"><path d="M13 3 V23 M3 13 H23" stroke="#000" stroke-width="3.2"/><path d="M13 0 L19 7 H7Z M13 26 L19 19 H7Z M0 13 L7 7 V19Z M26 13 L19 7 V19Z" fill="#000"/></svg>
<svg class="a" style="left:94px;top:1042px" width="24" height="28" viewBox="0 0 24 28"><rect x="1" y="1" width="22" height="26" fill="#fdfcf6" stroke="#3a3a3a" stroke-width="2"/><path d="M1 1 H23 M1 1 V27" stroke="#888" stroke-width="2"/><rect x="3" y="3" width="18" height="22" fill="none" stroke="#d0d0d0" stroke-width="1"/><path d="M12 4 H19.6 V23.7 H4.2 V16 H12Z" fill="#1a140c"/><path d="M14 6 H18 V22 H6.4 V18.3 H14Z" fill="#c9b49a"/><path d="M4.2 7.2 H10 M4.2 10.8 H10" stroke="#3a3a30" stroke-width="1.6"/></svg>
<div class="a" style="left:130px;top:1042px;font-size:26px;line-height:30px;font-weight:700;color:#1515d8;white-space:nowrap;letter-spacing:0.5px">Level 01 Floor Plan - A101</div>
<svg class="a" style="left:763px;top:1043px" width="28" height="26" viewBox="0 0 28 26"><rect x="0" y="0" width="28" height="26" fill="#f3e7a6"/><rect x="0" y="22" width="28" height="4" fill="#dccf8a"/><path d="M6 8 V18 M22 8 V18 M6 13 H22" stroke="#e0301e" stroke-width="3"/></svg>
<svg class="a" style="left:845px;top:1043px" width="26" height="26" viewBox="0 0 26 26"><path d="M13 3 V23 M3 13 H23" stroke="#000" stroke-width="3.2"/><path d="M13 0 L19 7 H7Z M13 26 L19 19 H7Z M0 13 L7 7 V19Z M26 13 L19 7 V19Z" fill="#000"/></svg>
<div class="a" style="left:76px;top:1089px;width:16px;height:2px;background:repeating-linear-gradient(90deg,#8a8a8a 0 2px,transparent 2px 4px)"></div>
<svg class="a" style="left:94px;top:1076px" width="24" height="28" viewBox="0 0 24 28"><rect x="1" y="1" width="22" height="26" fill="#fdfcf6" stroke="#3a3a3a" stroke-width="2"/><path d="M1 1 H23 M1 1 V27" stroke="#888" stroke-width="2"/><rect x="3" y="3" width="18" height="22" fill="none" stroke="#d0d0d0" stroke-width="1"/><path d="M12 4 H19.6 V23.7 H4.2 V16 H12Z" fill="#1a140c"/><path d="M14 6 H18 V22 H6.4 V18.3 H14Z" fill="#c9b49a"/><path d="M4.2 7.2 H10 M4.2 10.8 H10" stroke="#3a3a30" stroke-width="1.6"/></svg>
<div class="a" style="left:130px;top:1079px;font-size:20px;line-height:26px;color:#111;white-space:nowrap;letter-spacing:0.7px;-webkit-text-stroke:0.35px #111">Level 02 Floor Plan - A102</div>
<svg class="a" style="left:845px;top:1077px" width="26" height="26" viewBox="0 0 26 26"><path d="M13 3 V23 M3 13 H23" stroke="#000" stroke-width="3.2"/><path d="M13 0 L19 7 H7Z M13 26 L19 19 H7Z M0 13 L7 7 V19Z M26 13 L19 7 V19Z" fill="#000"/></svg>
<div class="a" style="left:76px;top:1123px;width:16px;height:2px;background:repeating-linear-gradient(90deg,#8a8a8a 0 2px,transparent 2px 4px)"></div>
<svg class="a" style="left:94px;top:1110px" width="24" height="28" viewBox="0 0 24 28"><rect x="1" y="1" width="22" height="26" fill="#fdfcf6" stroke="#3a3a3a" stroke-width="2"/><path d="M1 1 H23 M1 1 V27" stroke="#888" stroke-width="2"/><rect x="3" y="3" width="18" height="22" fill="none" stroke="#d0d0d0" stroke-width="1"/><path d="M12 4 H19.6 V23.7 H4.2 V16 H12Z" fill="#1a140c"/><path d="M14 6 H18 V22 H6.4 V18.3 H14Z" fill="#c9b49a"/><path d="M4.2 7.2 H10 M4.2 10.8 H10" stroke="#3a3a30" stroke-width="1.6"/></svg>
<div class="a" style="left:130px;top:1113px;font-size:20px;line-height:26px;color:#111;white-space:nowrap;letter-spacing:0.7px;-webkit-text-stroke:0.35px #111">Reflected Ceiling Plans - A151</div>
<svg class="a" style="left:845px;top:1111px" width="26" height="26" viewBox="0 0 26 26"><path d="M13 3 V23 M3 13 H23" stroke="#000" stroke-width="3.2"/><path d="M13 0 L19 7 H7Z M13 26 L19 19 H7Z M0 13 L7 7 V19Z M26 13 L19 7 V19Z" fill="#000"/></svg>
<div class="a" style="left:76px;top:1157px;width:16px;height:2px;background:repeating-linear-gradient(90deg,#8a8a8a 0 2px,transparent 2px 4px)"></div>
<svg class="a" style="left:94px;top:1144px" width="24" height="28" viewBox="0 0 24 28"><rect x="1" y="1" width="22" height="26" fill="#fdfcf6" stroke="#3a3a3a" stroke-width="2"/><path d="M1 1 H23 M1 1 V27" stroke="#888" stroke-width="2"/><rect x="3" y="3" width="18" height="22" fill="none" stroke="#d0d0d0" stroke-width="1"/><path d="M12 4 H19.6 V23.7 H4.2 V16 H12Z" fill="#1a140c"/><path d="M14 6 H18 V22 H6.4 V18.3 H14Z" fill="#c9b49a"/><path d="M4.2 7.2 H10 M4.2 10.8 H10" stroke="#3a3a30" stroke-width="1.6"/></svg>
<div class="a" style="left:130px;top:1147px;font-size:20px;line-height:26px;color:#111;white-space:nowrap;letter-spacing:0.7px;-webkit-text-stroke:0.35px #111">Roof Plan - A121</div>
<svg class="a" style="left:763px;top:1145px" width="28" height="26" viewBox="0 0 28 26"><rect x="0" y="0" width="28" height="26" fill="#f3e7a6"/><rect x="0" y="22" width="28" height="4" fill="#dccf8a"/><path d="M6 8 V18 M22 8 V18 M6 13 H22" stroke="#e0301e" stroke-width="3"/></svg>
<svg class="a" style="left:845px;top:1145px" width="26" height="26" viewBox="0 0 26 26"><path d="M13 3 V23 M3 13 H23" stroke="#000" stroke-width="3.2"/><path d="M13 0 L19 7 H7Z M13 26 L19 19 H7Z M0 13 L7 7 V19Z M26 13 L19 7 V19Z" fill="#000"/></svg>
<div class="a" style="left:76px;top:1191px;width:16px;height:2px;background:repeating-linear-gradient(90deg,#8a8a8a 0 2px,transparent 2px 4px)"></div>
<svg class="a" style="left:94px;top:1178px" width="24" height="28" viewBox="0 0 24 28"><rect x="1" y="1" width="22" height="26" fill="#fdfcf6" stroke="#3a3a3a" stroke-width="2"/><path d="M1 1 H23 M1 1 V27" stroke="#888" stroke-width="2"/><rect x="3" y="3" width="18" height="22" fill="none" stroke="#d0d0d0" stroke-width="1"/><path d="M12 4 H19.6 V23.7 H4.2 V16 H12Z" fill="#1a140c"/><path d="M14 6 H18 V22 H6.4 V18.3 H14Z" fill="#c9b49a"/><path d="M4.2 7.2 H10 M4.2 10.8 H10" stroke="#3a3a30" stroke-width="1.6"/></svg>
<div class="a" style="left:130px;top:1181px;font-size:20px;line-height:26px;color:#111;white-space:nowrap;letter-spacing:0.7px;-webkit-text-stroke:0.35px #111">Stair and Elevator Enlarged Plans - A451</div>
<svg class="a" style="left:845px;top:1179px" width="26" height="26" viewBox="0 0 26 26"><path d="M13 3 V23 M3 13 H23" stroke="#000" stroke-width="3.2"/><path d="M13 0 L19 7 H7Z M13 26 L19 19 H7Z M0 13 L7 7 V19Z M26 13 L19 7 V19Z" fill="#000"/></svg>
<div class="a" style="left:76px;top:1225px;width:16px;height:2px;background:repeating-linear-gradient(90deg,#8a8a8a 0 2px,transparent 2px 4px)"></div>
<svg class="a" style="left:94px;top:1212px" width="24" height="28" viewBox="0 0 24 28"><rect x="1" y="1" width="22" height="26" fill="#fdfcf6" stroke="#3a3a3a" stroke-width="2"/><path d="M1 1 H23 M1 1 V27" stroke="#888" stroke-width="2"/><rect x="3" y="3" width="18" height="22" fill="none" stroke="#d0d0d0" stroke-width="1"/><path d="M12 4 H19.6 V23.7 H4.2 V16 H12Z" fill="#1a140c"/><path d="M14 6 H18 V22 H6.4 V18.3 H14Z" fill="#c9b49a"/><path d="M4.2 7.2 H10 M4.2 10.8 H10" stroke="#3a3a30" stroke-width="1.6"/></svg>
<div class="a" style="left:130px;top:1215px;font-size:20px;line-height:26px;color:#111;white-space:nowrap;letter-spacing:0.7px;-webkit-text-stroke:0.35px #111">Wall and Elevator Sections - A351</div>
<svg class="a" style="left:845px;top:1213px" width="26" height="26" viewBox="0 0 26 26"><path d="M13 3 V23 M3 13 H23" stroke="#000" stroke-width="3.2"/><path d="M13 0 L19 7 H7Z M13 26 L19 19 H7Z M0 13 L7 7 V19Z M26 13 L19 7 V19Z" fill="#000"/></svg>
<div class="a" style="left:76px;top:1259px;width:16px;height:2px;background:repeating-linear-gradient(90deg,#8a8a8a 0 2px,transparent 2px 4px)"></div>
<svg class="a" style="left:94px;top:1246px" width="24" height="28" viewBox="0 0 24 28"><rect x="1" y="1" width="22" height="26" fill="#fdfcf6" stroke="#3a3a3a" stroke-width="2"/><path d="M1 1 H23 M1 1 V27" stroke="#888" stroke-width="2"/><rect x="3" y="3" width="18" height="22" fill="none" stroke="#d0d0d0" stroke-width="1"/><path d="M12 4 H19.6 V23.7 H4.2 V16 H12Z" fill="#1a140c"/><path d="M14 6 H18 V22 H6.4 V18.3 H14Z" fill="#c9b49a"/><path d="M4.2 7.2 H10 M4.2 10.8 H10" stroke="#3a3a30" stroke-width="1.6"/></svg>
<div class="a" style="left:130px;top:1249px;font-size:20px;line-height:26px;color:#111;white-space:nowrap;letter-spacing:0.7px;-webkit-text-stroke:0.35px #111">Window Details - A604</div>
<svg class="a" style="left:845px;top:1247px" width="26" height="26" viewBox="0 0 26 26"><path d="M13 3 V23 M3 13 H23" stroke="#000" stroke-width="3.2"/><path d="M13 0 L19 7 H7Z M13 26 L19 19 H7Z M0 13 L7 7 V19Z M26 13 L19 7 V19Z" fill="#000"/></svg>
<div class="a" style="left:76px;top:1293px;width:16px;height:2px;background:repeating-linear-gradient(90deg,#8a8a8a 0 2px,transparent 2px 4px)"></div>
<svg class="a" style="left:94px;top:1280px" width="24" height="28" viewBox="0 0 24 28"><rect x="1" y="1" width="22" height="26" fill="#fdfcf6" stroke="#3a3a3a" stroke-width="2"/><path d="M1 1 H23 M1 1 V27" stroke="#888" stroke-width="2"/><rect x="3" y="3" width="18" height="22" fill="none" stroke="#d0d0d0" stroke-width="1"/><path d="M12 4 H19.6 V23.7 H4.2 V16 H12Z" fill="#1a140c"/><path d="M14 6 H18 V22 H6.4 V18.3 H14Z" fill="#c9b49a"/><path d="M4.2 7.2 H10 M4.2 10.8 H10" stroke="#3a3a30" stroke-width="1.6"/></svg>
<div class="a" style="left:130px;top:1283px;font-size:20px;line-height:26px;color:#111;white-space:nowrap;letter-spacing:0.7px;-webkit-text-stroke:0.35px #111">Window Elevations - A602</div>
<svg class="a" style="left:845px;top:1281px" width="26" height="26" viewBox="0 0 26 26"><path d="M13 3 V23 M3 13 H23" stroke="#000" stroke-width="3.2"/><path d="M13 0 L19 7 H7Z M13 26 L19 19 H7Z M0 13 L7 7 V19Z M26 13 L19 7 V19Z" fill="#000"/></svg>
<div class="a" style="left:76px;top:1327px;width:16px;height:2px;background:repeating-linear-gradient(90deg,#8a8a8a 0 2px,transparent 2px 4px)"></div>
<svg class="a" style="left:94px;top:1314px" width="24" height="28" viewBox="0 0 24 28"><rect x="1" y="1" width="22" height="26" fill="#fdfcf6" stroke="#3a3a3a" stroke-width="2"/><path d="M1 1 H23 M1 1 V27" stroke="#888" stroke-width="2"/><rect x="3" y="3" width="18" height="22" fill="none" stroke="#d0d0d0" stroke-width="1"/><path d="M12 4 H19.6 V23.7 H4.2 V16 H12Z" fill="#1a140c"/><path d="M14 6 H18 V22 H6.4 V18.3 H14Z" fill="#c9b49a"/><path d="M4.2 7.2 H10 M4.2 10.8 H10" stroke="#3a3a30" stroke-width="1.6"/></svg>
<div class="a" style="left:130px;top:1317px;font-size:20px;line-height:26px;color:#111;white-space:nowrap;letter-spacing:0.7px;-webkit-text-stroke:0.35px #111">Window Elevations - A603</div>
<svg class="a" style="left:845px;top:1315px" width="26" height="26" viewBox="0 0 26 26"><path d="M13 3 V23 M3 13 H23" stroke="#000" stroke-width="3.2"/><path d="M13 0 L19 7 H7Z M13 26 L19 19 H7Z M0 13 L7 7 V19Z M26 13 L19 7 V19Z" fill="#000"/></svg>
<svg class="a" style="left:36px;top:1353px" width="18" height="18" viewBox="0 0 18 18"><rect x="1" y="1" width="16" height="16" fill="#fff" stroke="#777" stroke-width="1.5"/><path d="M4 9 H14" stroke="#111" stroke-width="2"/></svg>
<svg class="a" style="left:60px;top:1349px" width="32" height="26" viewBox="0 0 32 26"><path d="M1 4 Q1 1 4 1 H11 L14 4 H28 Q31 4 31 7 V23 Q31 25 29 25 H3 Q1 25 1 23Z" fill="#f6dd8a" stroke="#b8922e" stroke-width="1.5"/><path d="M2 9 H30 V23 Q30 24 29 24 H3 Q2 24 2 23Z" fill="#fbe9a8" stroke="#d4b050" stroke-width="1"/></svg>
<div class="a" style="left:97px;top:1351px;font-size:20px;line-height:26px;color:#111;white-space:nowrap;letter-spacing:0.7px;-webkit-text-stroke:0.35px #111">Structural [13 Pages]</div>
<div class="a" style="left:76px;top:1395px;width:16px;height:2px;background:repeating-linear-gradient(90deg,#8a8a8a 0 2px,transparent 2px 4px)"></div>
<svg class="a" style="left:94px;top:1382px" width="24" height="28" viewBox="0 0 24 28"><rect x="1" y="1" width="22" height="26" fill="#fdfcf6" stroke="#3a3a3a" stroke-width="2"/><path d="M1 1 H23 M1 1 V27" stroke="#888" stroke-width="2"/><rect x="3" y="3" width="18" height="22" fill="none" stroke="#d0d0d0" stroke-width="1"/><path d="M12 4 H19.6 V23.7 H4.2 V16 H12Z" fill="#1a140c"/><path d="M14 6 H18 V22 H6.4 V18.3 H14Z" fill="#c9b49a"/><path d="M4.2 7.2 H10 M4.2 10.8 H10" stroke="#3a3a30" stroke-width="1.6"/></svg>
<div class="a" style="left:130px;top:1385px;font-size:20px;line-height:26px;color:#111;white-space:nowrap;letter-spacing:0.7px;-webkit-text-stroke:0.35px #111">2nd Floor Framing Plan - S102</div>
<svg class="a" style="left:845px;top:1383px" width="26" height="26" viewBox="0 0 26 26"><path d="M13 3 V23 M3 13 H23" stroke="#000" stroke-width="3.2"/><path d="M13 0 L19 7 H7Z M13 26 L19 19 H7Z M0 13 L7 7 V19Z M26 13 L19 7 V19Z" fill="#000"/></svg>
<div class="a" style="left:76px;top:1429px;width:16px;height:2px;background:repeating-linear-gradient(90deg,#8a8a8a 0 2px,transparent 2px 4px)"></div>
<svg class="a" style="left:94px;top:1416px" width="24" height="28" viewBox="0 0 24 28"><rect x="1" y="1" width="22" height="26" fill="#fdfcf6" stroke="#3a3a3a" stroke-width="2"/><path d="M1 1 H23 M1 1 V27" stroke="#888" stroke-width="2"/><rect x="3" y="3" width="18" height="22" fill="none" stroke="#d0d0d0" stroke-width="1"/><path d="M12 4 H19.6 V23.7 H4.2 V16 H12Z" fill="#1a140c"/><path d="M14 6 H18 V22 H6.4 V18.3 H14Z" fill="#c9b49a"/><path d="M4.2 7.2 H10 M4.2 10.8 H10" stroke="#3a3a30" stroke-width="1.6"/></svg>
<div class="a" style="left:130px;top:1419px;font-size:20px;line-height:26px;color:#111;white-space:nowrap;letter-spacing:0.7px;-webkit-text-stroke:0.35px #111">Electrical Power Plan - E201</div>
<svg class="a" style="left:845px;top:1417px" width="26" height="26" viewBox="0 0 26 26"><path d="M13 3 V23 M3 13 H23" stroke="#000" stroke-width="3.2"/><path d="M13 0 L19 7 H7Z M13 26 L19 19 H7Z M0 13 L7 7 V19Z M26 13 L19 7 V19Z" fill="#000"/></svg>
<div class="a" style="left:76px;top:1463px;width:16px;height:2px;background:repeating-linear-gradient(90deg,#8a8a8a 0 2px,transparent 2px 4px)"></div>
<svg class="a" style="left:94px;top:1450px" width="24" height="28" viewBox="0 0 24 28"><rect x="1" y="1" width="22" height="26" fill="#fdfcf6" stroke="#3a3a3a" stroke-width="2"/><path d="M1 1 H23 M1 1 V27" stroke="#888" stroke-width="2"/><rect x="3" y="3" width="18" height="22" fill="none" stroke="#d0d0d0" stroke-width="1"/><path d="M12 4 H19.6 V23.7 H4.2 V16 H12Z" fill="#1a140c"/><path d="M14 6 H18 V22 H6.4 V18.3 H14Z" fill="#c9b49a"/><path d="M4.2 7.2 H10 M4.2 10.8 H10" stroke="#3a3a30" stroke-width="1.6"/></svg>
<div class="a" style="left:130px;top:1453px;font-size:20px;line-height:26px;color:#111;white-space:nowrap;letter-spacing:0.7px;-webkit-text-stroke:0.35px #111">Electrical Power Plan - E202</div>
<svg class="a" style="left:845px;top:1451px" width="26" height="26" viewBox="0 0 26 26"><path d="M13 3 V23 M3 13 H23" stroke="#000" stroke-width="3.2"/><path d="M13 0 L19 7 H7Z M13 26 L19 19 H7Z M0 13 L7 7 V19Z M26 13 L19 7 V19Z" fill="#000"/></svg>
<div class="a" style="left:76px;top:1497px;width:16px;height:2px;background:repeating-linear-gradient(90deg,#8a8a8a 0 2px,transparent 2px 4px)"></div>
<svg class="a" style="left:94px;top:1484px" width="24" height="28" viewBox="0 0 24 28"><rect x="1" y="1" width="22" height="26" fill="#fdfcf6" stroke="#3a3a3a" stroke-width="2"/><path d="M1 1 H23 M1 1 V27" stroke="#888" stroke-width="2"/><rect x="3" y="3" width="18" height="22" fill="none" stroke="#d0d0d0" stroke-width="1"/><path d="M12 4 H19.6 V23.7 H4.2 V16 H12Z" fill="#1a140c"/><path d="M14 6 H18 V22 H6.4 V18.3 H14Z" fill="#c9b49a"/><path d="M4.2 7.2 H10 M4.2 10.8 H10" stroke="#3a3a30" stroke-width="1.6"/></svg>
<div class="a" style="left:130px;top:1487px;font-size:20px;line-height:26px;color:#111;white-space:nowrap;letter-spacing:0.7px;-webkit-text-stroke:0.35px #111">Electrical Site Plan - E001</div>
<svg class="a" style="left:845px;top:1485px" width="26" height="26" viewBox="0 0 26 26"><path d="M13 3 V23 M3 13 H23" stroke="#000" stroke-width="3.2"/><path d="M13 0 L19 7 H7Z M13 26 L19 19 H7Z M0 13 L7 7 V19Z M26 13 L19 7 V19Z" fill="#000"/></svg>
<div class="a" style="left:76px;top:1531px;width:16px;height:2px;background:repeating-linear-gradient(90deg,#8a8a8a 0 2px,transparent 2px 4px)"></div>
<svg class="a" style="left:94px;top:1518px" width="24" height="28" viewBox="0 0 24 28"><rect x="1" y="1" width="22" height="26" fill="#fdfcf6" stroke="#3a3a3a" stroke-width="2"/><path d="M1 1 H23 M1 1 V27" stroke="#888" stroke-width="2"/><rect x="3" y="3" width="18" height="22" fill="none" stroke="#d0d0d0" stroke-width="1"/><path d="M12 4 H19.6 V23.7 H4.2 V16 H12Z" fill="#1a140c"/><path d="M14 6 H18 V22 H6.4 V18.3 H14Z" fill="#c9b49a"/><path d="M4.2 7.2 H10 M4.2 10.8 H10" stroke="#3a3a30" stroke-width="1.6"/></svg>
<div class="a" style="left:130px;top:1521px;font-size:20px;line-height:26px;color:#111;white-space:nowrap;letter-spacing:0.7px;-webkit-text-stroke:0.35px #111">Footing and Foundation Plan - S101</div>
<svg class="a" style="left:845px;top:1519px" width="26" height="26" viewBox="0 0 26 26"><path d="M13 3 V23 M3 13 H23" stroke="#000" stroke-width="3.2"/><path d="M13 0 L19 7 H7Z M13 26 L19 19 H7Z M0 13 L7 7 V19Z M26 13 L19 7 V19Z" fill="#000"/></svg>
<div class="a" style="left:76px;top:1565px;width:16px;height:2px;background:repeating-linear-gradient(90deg,#8a8a8a 0 2px,transparent 2px 4px)"></div>
<svg class="a" style="left:94px;top:1552px" width="24" height="28" viewBox="0 0 24 28"><rect x="1" y="1" width="22" height="26" fill="#fdfcf6" stroke="#3a3a3a" stroke-width="2"/><path d="M1 1 H23 M1 1 V27" stroke="#888" stroke-width="2"/><rect x="3" y="3" width="18" height="22" fill="none" stroke="#d0d0d0" stroke-width="1"/><path d="M12 4 H19.6 V23.7 H4.2 V16 H12Z" fill="#1a140c"/><path d="M14 6 H18 V22 H6.4 V18.3 H14Z" fill="#c9b49a"/><path d="M4.2 7.2 H10 M4.2 10.8 H10" stroke="#3a3a30" stroke-width="1.6"/></svg>
<div class="a" style="left:130px;top:1555px;font-size:20px;line-height:26px;color:#111;white-space:nowrap;letter-spacing:0.7px;-webkit-text-stroke:0.35px #111">Lighting Plan - E101</div>
<svg class="a" style="left:845px;top:1553px" width="26" height="26" viewBox="0 0 26 26"><path d="M13 3 V23 M3 13 H23" stroke="#000" stroke-width="3.2"/><path d="M13 0 L19 7 H7Z M13 26 L19 19 H7Z M0 13 L7 7 V19Z M26 13 L19 7 V19Z" fill="#000"/></svg>
<div class="a" style="left:76px;top:1599px;width:16px;height:2px;background:repeating-linear-gradient(90deg,#8a8a8a 0 2px,transparent 2px 4px)"></div>
<svg class="a" style="left:94px;top:1586px" width="24" height="28" viewBox="0 0 24 28"><rect x="1" y="1" width="22" height="26" fill="#fdfcf6" stroke="#3a3a3a" stroke-width="2"/><path d="M1 1 H23 M1 1 V27" stroke="#888" stroke-width="2"/><rect x="3" y="3" width="18" height="22" fill="none" stroke="#d0d0d0" stroke-width="1"/><path d="M12 4 H19.6 V23.7 H4.2 V16 H12Z" fill="#1a140c"/><path d="M14 6 H18 V22 H6.4 V18.3 H14Z" fill="#c9b49a"/><path d="M4.2 7.2 H10 M4.2 10.8 H10" stroke="#3a3a30" stroke-width="1.6"/></svg>
<div class="a" style="left:130px;top:1589px;font-size:20px;line-height:26px;color:#111;white-space:nowrap;letter-spacing:0.7px;-webkit-text-stroke:0.35px #111">Lighting Plan - E102</div>
<svg class="a" style="left:845px;top:1587px" width="26" height="26" viewBox="0 0 26 26"><path d="M13 3 V23 M3 13 H23" stroke="#000" stroke-width="3.2"/><path d="M13 0 L19 7 H7Z M13 26 L19 19 H7Z M0 13 L7 7 V19Z M26 13 L19 7 V19Z" fill="#000"/></svg>
<div class="a" style="left:76px;top:1633px;width:16px;height:2px;background:repeating-linear-gradient(90deg,#8a8a8a 0 2px,transparent 2px 4px)"></div>
<svg class="a" style="left:94px;top:1620px" width="24" height="28" viewBox="0 0 24 28"><rect x="1" y="1" width="22" height="26" fill="#fdfcf6" stroke="#3a3a3a" stroke-width="2"/><path d="M1 1 H23 M1 1 V27" stroke="#888" stroke-width="2"/><rect x="3" y="3" width="18" height="22" fill="none" stroke="#d0d0d0" stroke-width="1"/><path d="M12 4 H19.6 V23.7 H4.2 V16 H12Z" fill="#1a140c"/><path d="M14 6 H18 V22 H6.4 V18.3 H14Z" fill="#c9b49a"/><path d="M4.2 7.2 H10 M4.2 10.8 H10" stroke="#3a3a30" stroke-width="1.6"/></svg>
<div class="a" style="left:130px;top:1623px;font-size:20px;line-height:26px;color:#111;white-space:nowrap;letter-spacing:0.7px;-webkit-text-stroke:0.35px #111">Mechanical Plan - M101</div>
<svg class="a" style="left:845px;top:1621px" width="26" height="26" viewBox="0 0 26 26"><path d="M13 3 V23 M3 13 H23" stroke="#000" stroke-width="3.2"/><path d="M13 0 L19 7 H7Z M13 26 L19 19 H7Z M0 13 L7 7 V19Z M26 13 L19 7 V19Z" fill="#000"/></svg>
<div class="a" style="left:76px;top:1667px;width:16px;height:2px;background:repeating-linear-gradient(90deg,#8a8a8a 0 2px,transparent 2px 4px)"></div>
<svg class="a" style="left:94px;top:1654px" width="24" height="28" viewBox="0 0 24 28"><rect x="1" y="1" width="22" height="26" fill="#fdfcf6" stroke="#3a3a3a" stroke-width="2"/><path d="M1 1 H23 M1 1 V27" stroke="#888" stroke-width="2"/><rect x="3" y="3" width="18" height="22" fill="none" stroke="#d0d0d0" stroke-width="1"/><path d="M12 4 H19.6 V23.7 H4.2 V16 H12Z" fill="#1a140c"/><path d="M14 6 H18 V22 H6.4 V18.3 H14Z" fill="#c9b49a"/><path d="M4.2 7.2 H10 M4.2 10.8 H10" stroke="#3a3a30" stroke-width="1.6"/></svg>
<div class="a" style="left:130px;top:1657px;font-size:20px;line-height:26px;color:#111;white-space:nowrap;letter-spacing:0.7px;-webkit-text-stroke:0.35px #111">Mechanical Plan - M102</div>
<svg class="a" style="left:845px;top:1655px" width="26" height="26" viewBox="0 0 26 26"><path d="M13 3 V23 M3 13 H23" stroke="#000" stroke-width="3.2"/><path d="M13 0 L19 7 H7Z M13 26 L19 19 H7Z M0 13 L7 7 V19Z M26 13 L19 7 V19Z" fill="#000"/></svg>
<div class="a" style="left:76px;top:1701px;width:16px;height:2px;background:repeating-linear-gradient(90deg,#8a8a8a 0 2px,transparent 2px 4px)"></div>
<svg class="a" style="left:94px;top:1688px" width="24" height="28" viewBox="0 0 24 28"><rect x="1" y="1" width="22" height="26" fill="#fdfcf6" stroke="#3a3a3a" stroke-width="2"/><path d="M1 1 H23 M1 1 V27" stroke="#888" stroke-width="2"/><rect x="3" y="3" width="18" height="22" fill="none" stroke="#d0d0d0" stroke-width="1"/><path d="M12 4 H19.6 V23.7 H4.2 V16 H12Z" fill="#1a140c"/><path d="M14 6 H18 V22 H6.4 V18.3 H14Z" fill="#c9b49a"/><path d="M4.2 7.2 H10 M4.2 10.8 H10" stroke="#3a3a30" stroke-width="1.6"/></svg>
<div class="a" style="left:130px;top:1691px;font-size:20px;line-height:26px;color:#111;white-space:nowrap;letter-spacing:0.7px;-webkit-text-stroke:0.35px #111">Roof Framing Plan - S121</div>
<svg class="a" style="left:845px;top:1689px" width="26" height="26" viewBox="0 0 26 26"><path d="M13 3 V23 M3 13 H23" stroke="#000" stroke-width="3.2"/><path d="M13 0 L19 7 H7Z M13 26 L19 19 H7Z M0 13 L7 7 V19Z M26 13 L19 7 V19Z" fill="#000"/></svg>
<div class="a" style="left:76px;top:1735px;width:16px;height:2px;background:repeating-linear-gradient(90deg,#8a8a8a 0 2px,transparent 2px 4px)"></div>
<svg class="a" style="left:94px;top:1722px" width="24" height="28" viewBox="0 0 24 28"><rect x="1" y="1" width="22" height="26" fill="#fdfcf6" stroke="#3a3a3a" stroke-width="2"/><path d="M1 1 H23 M1 1 V27" stroke="#888" stroke-width="2"/><rect x="3" y="3" width="18" height="22" fill="none" stroke="#d0d0d0" stroke-width="1"/><path d="M12 4 H19.6 V23.7 H4.2 V16 H12Z" fill="#1a140c"/><path d="M14 6 H18 V22 H6.4 V18.3 H14Z" fill="#c9b49a"/><path d="M4.2 7.2 H10 M4.2 10.8 H10" stroke="#3a3a30" stroke-width="1.6"/></svg>
<div class="a" style="left:130px;top:1725px;font-size:20px;line-height:26px;color:#111;white-space:nowrap;letter-spacing:0.7px;-webkit-text-stroke:0.35px #111">Roof Power Plan - E221</div>
<svg class="a" style="left:845px;top:1723px" width="26" height="26" viewBox="0 0 26 26"><path d="M13 3 V23 M3 13 H23" stroke="#000" stroke-width="3.2"/><path d="M13 0 L19 7 H7Z M13 26 L19 19 H7Z M0 13 L7 7 V19Z M26 13 L19 7 V19Z" fill="#000"/></svg>
<div class="a" style="left:76px;top:1769px;width:16px;height:2px;background:repeating-linear-gradient(90deg,#8a8a8a 0 2px,transparent 2px 4px)"></div>
<svg class="a" style="left:94px;top:1756px" width="24" height="28" viewBox="0 0 24 28"><rect x="1" y="1" width="22" height="26" fill="#fdfcf6" stroke="#3a3a3a" stroke-width="2"/><path d="M1 1 H23 M1 1 V27" stroke="#888" stroke-width="2"/><rect x="3" y="3" width="18" height="22" fill="none" stroke="#d0d0d0" stroke-width="1"/><path d="M12 4 H19.6 V23.7 H4.2 V16 H12Z" fill="#1a140c"/><path d="M14 6 H18 V22 H6.4 V18.3 H14Z" fill="#c9b49a"/><path d="M4.2 7.2 H10 M4.2 10.8 H10" stroke="#3a3a30" stroke-width="1.6"/></svg>
<div class="a" style="left:130px;top:1759px;font-size:20px;line-height:26px;color:#111;white-space:nowrap;letter-spacing:0.7px;-webkit-text-stroke:0.35px #111">Vent and Waste Plan - P101</div>
<svg class="a" style="left:845px;top:1757px" width="26" height="26" viewBox="0 0 26 26"><path d="M13 3 V23 M3 13 H23" stroke="#000" stroke-width="3.2"/><path d="M13 0 L19 7 H7Z M13 26 L19 19 H7Z M0 13 L7 7 V19Z M26 13 L19 7 V19Z" fill="#000"/></svg>
<div class="a" style="left:76px;top:1803px;width:16px;height:2px;background:repeating-linear-gradient(90deg,#8a8a8a 0 2px,transparent 2px 4px)"></div>
<svg class="a" style="left:94px;top:1790px" width="24" height="28" viewBox="0 0 24 28"><rect x="1" y="1" width="22" height="26" fill="#fdfcf6" stroke="#3a3a3a" stroke-width="2"/><path d="M1 1 H23 M1 1 V27" stroke="#888" stroke-width="2"/><rect x="3" y="3" width="18" height="22" fill="none" stroke="#d0d0d0" stroke-width="1"/><path d="M12 4 H19.6 V23.7 H4.2 V16 H12Z" fill="#1a140c"/><path d="M14 6 H18 V22 H6.4 V18.3 H14Z" fill="#c9b49a"/><path d="M4.2 7.2 H10 M4.2 10.8 H10" stroke="#3a3a30" stroke-width="1.6"/></svg>
<div class="a" style="left:130px;top:1793px;font-size:20px;line-height:26px;color:#111;white-space:nowrap;letter-spacing:0.7px;-webkit-text-stroke:0.35px #111">Water and Gas Plan - P102</div>
<svg class="a" style="left:845px;top:1791px" width="26" height="26" viewBox="0 0 26 26"><path d="M13 3 V23 M3 13 H23" stroke="#000" stroke-width="3.2"/><path d="M13 0 L19 7 H7Z M13 26 L19 19 H7Z M0 13 L7 7 V19Z M26 13 L19 7 V19Z" fill="#000"/></svg>
<svg class="a" style="left:4px;top:1829px" width="18" height="18" viewBox="0 0 18 18"><rect x="1" y="1" width="16" height="16" fill="#fff" stroke="#777" stroke-width="1.5"/><path d="M4 9 H14" stroke="#111" stroke-width="2"/></svg>
<svg class="a" style="left:28px;top:1825px" width="32" height="26" viewBox="0 0 32 26"><path d="M1 4 Q1 1 4 1 H11 L14 4 H28 Q31 4 31 7 V23 Q31 25 29 25 H3 Q1 25 1 23Z" fill="#f6dd8a" stroke="#b8922e" stroke-width="1.5"/><path d="M2 9 H30 V23 Q30 24 29 24 H3 Q2 24 2 23Z" fill="#fbe9a8" stroke="#d4b050" stroke-width="1"/></svg>
<div class="a" style="left:65px;top:1827px;font-size:20px;line-height:26px;color:#111;white-space:nowrap;letter-spacing:0.7px;-webkit-text-stroke:0.35px #111">Residential Plan Set [4 Pages]</div>
<div class="a" style="left:44px;top:1871px;width:16px;height:2px;background:repeating-linear-gradient(90deg,#8a8a8a 0 2px,transparent 2px 4px)"></div>
<svg class="a" style="left:62px;top:1858px" width="24" height="28" viewBox="0 0 24 28"><rect x="1" y="1" width="22" height="26" fill="#fdfcf6" stroke="#3a3a3a" stroke-width="2"/><path d="M1 1 H23 M1 1 V27" stroke="#888" stroke-width="2"/><rect x="3" y="3" width="18" height="22" fill="none" stroke="#d0d0d0" stroke-width="1"/><path d="M12 4 H19.6 V23.7 H4.2 V16 H12Z" fill="#1a140c"/><path d="M14 6 H18 V22 H6.4 V18.3 H14Z" fill="#c9b49a"/><path d="M4.2 7.2 H10 M4.2 10.8 H10" stroke="#3a3a30" stroke-width="1.6"/></svg>
<div class="a" style="left:96px;top:1861px;font-size:20px;line-height:26px;color:#111;white-space:nowrap;letter-spacing:0.7px;-webkit-text-stroke:0.35px #111">Floor Plan - A1.2</div>
<svg class="a" style="left:763px;top:1859px" width="28" height="26" viewBox="0 0 28 26"><rect x="0" y="0" width="28" height="26" fill="#f3e7a6"/><rect x="0" y="22" width="28" height="4" fill="#dccf8a"/><path d="M6 8 V18 M22 8 V18 M6 13 H22" stroke="#e0301e" stroke-width="3"/></svg>
<svg class="a" style="left:845px;top:1859px" width="26" height="26" viewBox="0 0 26 26"><path d="M13 3 V23 M3 13 H23" stroke="#000" stroke-width="3.2"/><path d="M13 0 L19 7 H7Z M13 26 L19 19 H7Z M0 13 L7 7 V19Z M26 13 L19 7 V19Z" fill="#000"/></svg>
<div class="a" style="left:44px;top:1905px;width:16px;height:2px;background:repeating-linear-gradient(90deg,#8a8a8a 0 2px,transparent 2px 4px)"></div>
<svg class="a" style="left:62px;top:1892px" width="24" height="28" viewBox="0 0 24 28"><rect x="1" y="1" width="22" height="26" fill="#fdfcf6" stroke="#3a3a3a" stroke-width="2"/><path d="M1 1 H23 M1 1 V27" stroke="#888" stroke-width="2"/><rect x="3" y="3" width="18" height="22" fill="none" stroke="#d0d0d0" stroke-width="1"/><path d="M12 4 H19.6 V23.7 H4.2 V16 H12Z" fill="#1a140c"/><path d="M14 6 H18 V22 H6.4 V18.3 H14Z" fill="#c9b49a"/><path d="M4.2 7.2 H10 M4.2 10.8 H10" stroke="#3a3a30" stroke-width="1.6"/></svg>
<div class="a" style="left:96px;top:1895px;font-size:20px;line-height:26px;color:#111;white-space:nowrap;letter-spacing:0.7px;-webkit-text-stroke:0.35px #111">Roof Plan - A1.4</div>
<svg class="a" style="left:845px;top:1893px" width="26" height="26" viewBox="0 0 26 26"><path d="M13 3 V23 M3 13 H23" stroke="#000" stroke-width="3.2"/><path d="M13 0 L19 7 H7Z M13 26 L19 19 H7Z M0 13 L7 7 V19Z M26 13 L19 7 V19Z" fill="#000"/></svg>
<div class="a" style="left:44px;top:1939px;width:16px;height:2px;background:repeating-linear-gradient(90deg,#8a8a8a 0 2px,transparent 2px 4px)"></div>
<svg class="a" style="left:62px;top:1926px" width="24" height="28" viewBox="0 0 24 28"><rect x="1" y="1" width="22" height="26" fill="#fdfcf6" stroke="#3a3a3a" stroke-width="2"/><path d="M1 1 H23 M1 1 V27" stroke="#888" stroke-width="2"/><rect x="3" y="3" width="18" height="22" fill="none" stroke="#d0d0d0" stroke-width="1"/><path d="M12 4 H19.6 V23.7 H4.2 V16 H12Z" fill="#1a140c"/><path d="M14 6 H18 V22 H6.4 V18.3 H14Z" fill="#c9b49a"/><path d="M4.2 7.2 H10 M4.2 10.8 H10" stroke="#3a3a30" stroke-width="1.6"/></svg>
<div class="a" style="left:96px;top:1929px;font-size:20px;line-height:26px;color:#111;white-space:nowrap;letter-spacing:0.7px;-webkit-text-stroke:0.35px #111">Exterior Elevations - A2.1</div>
<svg class="a" style="left:763px;top:1927px" width="28" height="26" viewBox="0 0 28 26"><rect x="0" y="0" width="28" height="26" fill="#f3e7a6"/><rect x="0" y="22" width="28" height="4" fill="#dccf8a"/><path d="M6 8 V18 M22 8 V18 M6 13 H22" stroke="#e0301e" stroke-width="3"/></svg>
<svg class="a" style="left:845px;top:1927px" width="26" height="26" viewBox="0 0 26 26"><path d="M13 3 V23 M3 13 H23" stroke="#000" stroke-width="3.2"/><path d="M13 0 L19 7 H7Z M13 26 L19 19 H7Z M0 13 L7 7 V19Z M26 13 L19 7 V19Z" fill="#000"/></svg>
<div class="a" style="left:44px;top:1973px;width:16px;height:2px;background:repeating-linear-gradient(90deg,#8a8a8a 0 2px,transparent 2px 4px)"></div>
<svg class="a" style="left:62px;top:1960px" width="24" height="28" viewBox="0 0 24 28"><rect x="1" y="1" width="22" height="26" fill="#fdfcf6" stroke="#3a3a3a" stroke-width="2"/><path d="M1 1 H23 M1 1 V27" stroke="#888" stroke-width="2"/><rect x="3" y="3" width="18" height="22" fill="none" stroke="#d0d0d0" stroke-width="1"/><path d="M12 4 H19.6 V23.7 H4.2 V16 H12Z" fill="#1a140c"/><path d="M14 6 H18 V22 H6.4 V18.3 H14Z" fill="#c9b49a"/><path d="M4.2 7.2 H10 M4.2 10.8 H10" stroke="#3a3a30" stroke-width="1.6"/></svg>
<div class="a" style="left:96px;top:1963px;font-size:20px;line-height:26px;color:#111;white-space:nowrap;letter-spacing:0.7px;-webkit-text-stroke:0.35px #111">Electrical Plan - E1.0</div>
<svg class="a" style="left:845px;top:1961px" width="26" height="26" viewBox="0 0 26 26"><path d="M13 3 V23 M3 13 H23" stroke="#000" stroke-width="3.2"/><path d="M13 0 L19 7 H7Z M13 26 L19 19 H7Z M0 13 L7 7 V19Z M26 13 L19 7 V19Z" fill="#000"/></svg>
<svg class="a" style="left:4px;top:1999px" width="18" height="18" viewBox="0 0 18 18"><rect x="1" y="1" width="16" height="16" fill="#fff" stroke="#777" stroke-width="1.5"/><path d="M4 9 H14" stroke="#111" stroke-width="2"/></svg>
<svg class="a" style="left:28px;top:1995px" width="32" height="26" viewBox="0 0 32 26"><path d="M1 4 Q1 1 4 1 H11 L14 4 H28 Q31 4 31 7 V23 Q31 25 29 25 H3 Q1 25 1 23Z" fill="#f6dd8a" stroke="#b8922e" stroke-width="1.5"/><path d="M2 9 H30 V23 Q30 24 29 24 H3 Q2 24 2 23Z" fill="#fbe9a8" stroke="#d4b050" stroke-width="1"/></svg>
<div class="a" style="left:65px;top:1997px;font-size:20px;line-height:26px;color:#111;white-space:nowrap;letter-spacing:0.7px;-webkit-text-stroke:0.35px #111">Other Commercial Plans [3 Pages]</div>
<div class="a" style="left:44px;top:2041px;width:16px;height:2px;background:repeating-linear-gradient(90deg,#8a8a8a 0 2px,transparent 2px 4px)"></div>
<svg class="a" style="left:62px;top:2028px" width="24" height="28" viewBox="0 0 24 28"><rect x="1" y="1" width="22" height="26" fill="#fdfcf6" stroke="#3a3a3a" stroke-width="2"/><path d="M1 1 H23 M1 1 V27" stroke="#888" stroke-width="2"/><rect x="3" y="3" width="18" height="22" fill="none" stroke="#d0d0d0" stroke-width="1"/><path d="M12 4 H19.6 V23.7 H4.2 V16 H12Z" fill="#1a140c"/><path d="M14 6 H18 V22 H6.4 V18.3 H14Z" fill="#c9b49a"/><path d="M4.2 7.2 H10 M4.2 10.8 H10" stroke="#3a3a30" stroke-width="1.6"/></svg>
<div class="a" style="left:96px;top:2031px;font-size:20px;line-height:26px;color:#111;white-space:nowrap;letter-spacing:0.7px;-webkit-text-stroke:0.35px #111">Landscape Plan - L1.0</div>
<svg class="a" style="left:845px;top:2029px" width="26" height="26" viewBox="0 0 26 26"><path d="M13 3 V23 M3 13 H23" stroke="#000" stroke-width="3.2"/><path d="M13 0 L19 7 H7Z M13 26 L19 19 H7Z M0 13 L7 7 V19Z M26 13 L19 7 V19Z" fill="#000"/></svg>
<div class="a" style="left:44px;top:2075px;width:16px;height:2px;background:repeating-linear-gradient(90deg,#8a8a8a 0 2px,transparent 2px 4px)"></div>
<svg class="a" style="left:62px;top:2062px" width="24" height="28" viewBox="0 0 24 28"><rect x="1" y="1" width="22" height="26" fill="#fdfcf6" stroke="#3a3a3a" stroke-width="2"/><path d="M1 1 H23 M1 1 V27" stroke="#888" stroke-width="2"/><rect x="3" y="3" width="18" height="22" fill="none" stroke="#d0d0d0" stroke-width="1"/><path d="M12 4 H19.6 V23.7 H4.2 V16 H12Z" fill="#1a140c"/><path d="M14 6 H18 V22 H6.4 V18.3 H14Z" fill="#c9b49a"/><path d="M4.2 7.2 H10 M4.2 10.8 H10" stroke="#3a3a30" stroke-width="1.6"/></svg>
<div class="a" style="left:96px;top:2065px;font-size:20px;line-height:26px;color:#111;white-space:nowrap;letter-spacing:0.7px;-webkit-text-stroke:0.35px #111">HVAC Plan - M2.1</div>
<svg class="a" style="left:845px;top:2063px" width="26" height="26" viewBox="0 0 26 26"><path d="M13 3 V23 M3 13 H23" stroke="#000" stroke-width="3.2"/><path d="M13 0 L19 7 H7Z M13 26 L19 19 H7Z M0 13 L7 7 V19Z M26 13 L19 7 V19Z" fill="#000"/></svg>
<div class="a" style="left:44px;top:2109px;width:16px;height:2px;background:repeating-linear-gradient(90deg,#8a8a8a 0 2px,transparent 2px 4px)"></div>
<svg class="a" style="left:62px;top:2096px" width="24" height="28" viewBox="0 0 24 28"><rect x="1" y="1" width="22" height="26" fill="#fdfcf6" stroke="#3a3a3a" stroke-width="2"/><path d="M1 1 H23 M1 1 V27" stroke="#888" stroke-width="2"/><rect x="3" y="3" width="18" height="22" fill="none" stroke="#d0d0d0" stroke-width="1"/><path d="M12 4 H19.6 V23.7 H4.2 V16 H12Z" fill="#1a140c"/><path d="M14 6 H18 V22 H6.4 V18.3 H14Z" fill="#c9b49a"/><path d="M4.2 7.2 H10 M4.2 10.8 H10" stroke="#3a3a30" stroke-width="1.6"/></svg>
<div class="a" style="left:96px;top:2099px;font-size:20px;line-height:26px;color:#111;white-space:nowrap;letter-spacing:0.7px;-webkit-text-stroke:0.35px #111">Site Plan - C1.1</div>
<svg class="a" style="left:845px;top:2097px" width="26" height="26" viewBox="0 0 26 26"><path d="M13 3 V23 M3 13 H23" stroke="#000" stroke-width="3.2"/><path d="M13 0 L19 7 H7Z M13 26 L19 19 H7Z M0 13 L7 7 V19Z M26 13 L19 7 V19Z" fill="#000"/></svg>
<div class="a" style="left:2px;top:2382px;width:874px;height:12px;background:linear-gradient(#cfcfcf,#9c9c9c)"></div>
<div class="a" style="left:398px;top:2385px;width:78px;height:5px;background:repeating-linear-gradient(90deg,#fff 0 3px,#555 3px 7px)"></div>
<div class="a" style="left:2px;top:2394px;width:874px;height:60px;background:#e3e3e3"></div>
<svg class="a" style="left:18px;top:2408px" width="32" height="32" viewBox="0 0 32 32"><path d="M2 6 H12 L15 9 H30 V28 H2Z" fill="#d9aa55"/><path d="M2 12 H30 V28 H2Z" fill="#eec47a"/></svg><svg class="a" style="left:68px;top:2408px" width="32" height="32" viewBox="0 0 32 32"><path d="M16 3 V29 M3 16 H29" stroke="#4fa36a" stroke-width="5"/></svg><svg class="a" style="left:118px;top:2408px" width="32" height="32" viewBox="0 0 32 32"><circle cx="16" cy="16" r="14" fill="#d13b2e"/><path d="M10 10 L22 22 M22 10 L10 22" stroke="#fff" stroke-width="4"/></svg><svg class="a" style="left:168px;top:2408px" width="32" height="32" viewBox="0 0 32 32"><circle cx="16" cy="16" r="10" fill="none" stroke="#3a78c0" stroke-width="6"/><path d="M16 1 V31 M1 16 H31 M5 5 L27 27 M27 5 L5 27" stroke="#3a78c0" stroke-width="4"/><circle cx="16" cy="16" r="5" fill="#e4e4e4"/></svg><svg class="a" style="left:217px;top:2408px" width="32" height="32" viewBox="0 0 32 32"><path d="M10 28 V4 M5 9 L10 3 L15 9 M22 4 V28 M17 23 L22 29 L27 23 M17 30 H28" fill="none" stroke="#4fa0b4" stroke-width="3"/></svg>
<div class="a" style="left:2px;top:2454px;width:874px;height:15px;background:linear-gradient(#e6e6e6,#d2d2d2);border-top:2px solid #8a8a8a;border-bottom:2px solid #8a8a8a"></div>
<div class="a" style="left:420px;top:2459px;width:36px;height:4px;background:repeating-linear-gradient(90deg,#fff 0 3px,#555 3px 7px)"></div>
<div class="a" style="left:2px;top:2469px;width:874px;height:47px;background:linear-gradient(#fbfbfb,#e8e8e8 50%,#d6d6d6)"></div>
<div class="a" style="left:665px;top:2470px;width:45px;height:46px;background:linear-gradient(#ffe3a0,#ffc766)"></div>
<svg class="a" style="left:670px;top:2476px" width="34" height="36"><rect x="4" y="2" width="16" height="22" fill="#fff" stroke="#bbb"/><rect x="10" y="8" width="16" height="22" fill="#fff" stroke="#bbb"/></svg>
<svg class="a" style="left:715px;top:2476px" width="34" height="34"><path d="M4 4 H20 M4 1 V7 M20 1 V7" stroke="#3a78c0" stroke-width="2"/><rect x="6" y="12" width="10" height="14" fill="#5cb85c"/><circle cx="24" cy="14" r="2.5" fill="#d9432e"/><circle cx="28" cy="21" r="2.5" fill="#d9432e"/><circle cx="22" cy="26" r="2.5" fill="#d9432e"/></svg>
<svg class="a" style="left:757px;top:2474px" width="34" height="36"><path d="M8 28 L24 10 a5 5 0 0 0 -7 -7 L4 22 a8 8 0 0 0 11 11 L28 18" fill="none" stroke="#9a9a9a" stroke-width="3"/></svg>
<svg class="a" style="left:800px;top:2476px" width="32" height="32"><path d="M2 2 H28 V20 L20 28 H2Z" fill="#f5e46a"/><path d="M20 28 V20 H28" fill="#e0cf50"/></svg>
<svg class="a" style="left:848px;top:2488px" width="14" height="10"><path d="M1 1 H13 L7 8Z" fill="#222"/></svg>
<div class="a" style="left:876px;top:355px;width:2px;height:2163px;background:#8c8c8c"></div>
<div class="a" style="left:0;top:355px;width:2px;height:2163px;background:#9a9a9a"></div>
<div class="a" style="left:878px;top:355px;width:13px;height:2163px;background:linear-gradient(90deg,#e4e4e4,#c8c8c8 60%,#9a9a9a)"></div>
<div class="a" style="left:883px;top:1390px;width:4px;height:80px;background:repeating-linear-gradient(#fff 0 3px,#666 3px 7px)"></div>
<div class="a" style="left:891px;top:355px;width:3157px;height:2127px;background:#d6d6d6"></div>
<div class="a" style="left:4014px;top:355px;width:34px;height:2163px;background:#f0f0f0"></div>
<div class="a" style="left:4031px;top:993px;width:3px;height:917px;background:#888"></div>
<div class="a" style="left:891px;top:2482px;width:3157px;height:36px;background:#f0f0f0"></div>
<div class="a" style="left:1701px;top:2499px;width:1712px;height:4px;background:#888"></div>
<div class="a" style="left:891px;top:355px;width:2764px;height:1975px;background:#fafafa"></div>
<div class="a" style="left:891px;top:2329px;width:2764px;height:3px;background:#222"></div>
<div class="a" style="left:891px;top:2332px;width:2764px;height:4px;background:#f4f4f4"></div>
<div class="a" style="left:891px;top:2336px;width:2764px;height:2px;background:#9a9a9a"></div>
<div class="a" style="left:3653px;top:355px;width:3px;height:1977px;background:#777"></div>
<div class="a" style="left:3655px;top:2329px;width:359px;height:3px;background:#333"></div>
<div class="a" style="left:3615px;top:2361px;width:3px;height:122px;background:#111"></div>
<svg class="a" style="left:891px;top:355px;overflow:hidden" width="2764" height="1975" viewBox="891 355 2764 1975" font-family="Liberation Sans">
<line x1="1345" y1="1135" x2="1755" y2="1467" stroke="#c4c4c4" stroke-width="1.2"/>
<line x1="1755" y1="1135" x2="1345" y2="1467" stroke="#c4c4c4" stroke-width="1.2"/>
<text x="1550.0" y="1304.0" font-size="7" text-anchor="middle" fill="#777">FD</text>
<line x1="1345" y1="1467" x2="1755" y2="1798" stroke="#c4c4c4" stroke-width="1.2"/>
<line x1="1755" y1="1467" x2="1345" y2="1798" stroke="#c4c4c4" stroke-width="1.2"/>
<text x="1550.0" y="1635.5" font-size="7" text-anchor="middle" fill="#777">FD</text>
<line x1="1345" y1="1798" x2="1755" y2="2128" stroke="#c4c4c4" stroke-width="1.2"/>
<line x1="1755" y1="1798" x2="1345" y2="2128" stroke="#c4c4c4" stroke-width="1.2"/>
<text x="1550.0" y="1966.0" font-size="7" text-anchor="middle" fill="#777">FD</text>
<line x1="1755" y1="1135" x2="2165" y2="1467" stroke="#c4c4c4" stroke-width="1.2"/>
<line x1="2165" y1="1135" x2="1755" y2="1467" stroke="#c4c4c4" stroke-width="1.2"/>
<text x="1960.0" y="1304.0" font-size="7" text-anchor="middle" fill="#777">FD</text>
<line x1="1755" y1="1467" x2="2165" y2="1798" stroke="#c4c4c4" stroke-width="1.2"/>
<line x1="2165" y1="1467" x2="1755" y2="1798" stroke="#c4c4c4" stroke-width="1.2"/>
<text x="1960.0" y="1635.5" font-size="7" text-anchor="middle" fill="#777">FD</text>
<line x1="1755" y1="1798" x2="2165" y2="2128" stroke="#c4c4c4" stroke-width="1.2"/>
<line x1="2165" y1="1798" x2="1755" y2="2128" stroke="#c4c4c4" stroke-width="1.2"/>
<text x="1960.0" y="1966.0" font-size="7" text-anchor="middle" fill="#777">FD</text>
<line x1="2165" y1="1135" x2="2575" y2="1467" stroke="#c4c4c4" stroke-width="1.2"/>
<line x1="2575" y1="1135" x2="2165" y2="1467" stroke="#c4c4c4" stroke-width="1.2"/>
<text x="2370.0" y="1304.0" font-size="7" text-anchor="middle" fill="#777">FD</text>
<line x1="2165" y1="1467" x2="2575" y2="1798" stroke="#c4c4c4" stroke-width="1.2"/>
<line x1="2575" y1="1467" x2="2165" y2="1798" stroke="#c4c4c4" stroke-width="1.2"/>
<text x="2370.0" y="1635.5" font-size="7" text-anchor="middle" fill="#777">FD</text>
<line x1="2165" y1="1798" x2="2575" y2="2128" stroke="#c4c4c4" stroke-width="1.2"/>
<line x1="2575" y1="1798" x2="2165" y2="2128" stroke="#c4c4c4" stroke-width="1.2"/>
<text x="2370.0" y="1966.0" font-size="7" text-anchor="middle" fill="#777">FD</text>
<line x1="2575" y1="1135" x2="2985" y2="1467" stroke="#c4c4c4" stroke-width="1.2"/>
<line x1="2985" y1="1135" x2="2575" y2="1467" stroke="#c4c4c4" stroke-width="1.2"/>
<text x="2780.0" y="1304.0" font-size="7" text-anchor="middle" fill="#777">FD</text>
<line x1="2575" y1="1467" x2="2985" y2="1798" stroke="#c4c4c4" stroke-width="1.2"/>
<line x1="2985" y1="1467" x2="2575" y2="1798" stroke="#c4c4c4" stroke-width="1.2"/>
<text x="2780.0" y="1635.5" font-size="7" text-anchor="middle" fill="#777">FD</text>
<line x1="2575" y1="1798" x2="2985" y2="2128" stroke="#c4c4c4" stroke-width="1.2"/>
<line x1="2985" y1="1798" x2="2575" y2="2128" stroke="#c4c4c4" stroke-width="1.2"/>
<text x="2780.0" y="1966.0" font-size="7" text-anchor="middle" fill="#777">FD</text>
<line x1="2985" y1="1135" x2="3396" y2="1467" stroke="#c4c4c4" stroke-width="1.2"/>
<line x1="3396" y1="1135" x2="2985" y2="1467" stroke="#c4c4c4" stroke-width="1.2"/>
<text x="3190.5" y="1304.0" font-size="7" text-anchor="middle" fill="#777">FD</text>
<line x1="2985" y1="1467" x2="3396" y2="1798" stroke="#c4c4c4" stroke-width="1.2"/>
<line x1="3396" y1="1467" x2="2985" y2="1798" stroke="#c4c4c4" stroke-width="1.2"/>
<text x="3190.5" y="1635.5" font-size="7" text-anchor="middle" fill="#777">FD</text>
<line x1="2985" y1="1798" x2="3396" y2="2128" stroke="#c4c4c4" stroke-width="1.2"/>
<line x1="3396" y1="1798" x2="2985" y2="2128" stroke="#c4c4c4" stroke-width="1.2"/>
<text x="3190.5" y="1966.0" font-size="7" text-anchor="middle" fill="#777">FD</text>
<line x1="1342" y1="804" x2="1755" y2="1134" stroke="#c4c4c4" stroke-width="1.2"/>
<line x1="1755" y1="804" x2="1342" y2="1134" stroke="#c4c4c4" stroke-width="1.2"/>
<line x1="1755" y1="804" x2="2062" y2="1134" stroke="#c4c4c4" stroke-width="1.2"/>
<line x1="2062" y1="804" x2="1755" y2="1134" stroke="#c4c4c4" stroke-width="1.2"/>
<line x1="2985" y1="1135" x2="3100" y2="1050" stroke="#cfcfcf" stroke-width="1.0"/>
<line x1="3396" y1="1135" x2="3300" y2="1060" stroke="#cfcfcf" stroke-width="1.0"/>
<line x1="1016" y1="721" x2="3440" y2="721" stroke="#888" stroke-width="1.0"/>
<line x1="1016" y1="804" x2="3440" y2="804" stroke="#9a9a9a" stroke-width="1.1" stroke-dasharray="40 5 6 5"/>
<line x1="1016" y1="1135" x2="3440" y2="1135" stroke="#9a9a9a" stroke-width="1.1" stroke-dasharray="40 5 6 5"/>
<line x1="1016" y1="1467" x2="3440" y2="1467" stroke="#9a9a9a" stroke-width="1.1" stroke-dasharray="40 5 6 5"/>
<line x1="1016" y1="1798" x2="3440" y2="1798" stroke="#9a9a9a" stroke-width="1.1" stroke-dasharray="40 5 6 5"/>
<line x1="1016" y1="2128" x2="3440" y2="2128" stroke="#9a9a9a" stroke-width="1.1" stroke-dasharray="40 5 6 5"/>
<line x1="1060" y1="692" x2="1060" y2="2175" stroke="#9a9a9a" stroke-width="1.1" stroke-dasharray="40 5 6 5"/>
<line x1="1197" y1="692" x2="1197" y2="2175" stroke="#9a9a9a" stroke-width="1.1" stroke-dasharray="40 5 6 5"/>
<line x1="1321" y1="692" x2="1321" y2="2175" stroke="#9a9a9a" stroke-width="1.1" stroke-dasharray="40 5 6 5"/>
<line x1="1345" y1="692" x2="1345" y2="2175" stroke="#9a9a9a" stroke-width="1.1" stroke-dasharray="40 5 6 5"/>
<line x1="1755" y1="692" x2="1755" y2="2175" stroke="#9a9a9a" stroke-width="1.1" stroke-dasharray="40 5 6 5"/>
<line x1="2165" y1="692" x2="2165" y2="2175" stroke="#9a9a9a" stroke-width="1.1" stroke-dasharray="40 5 6 5"/>
<line x1="2575" y1="692" x2="2575" y2="2175" stroke="#9a9a9a" stroke-width="1.1" stroke-dasharray="40 5 6 5"/>
<line x1="2985" y1="692" x2="2985" y2="2175" stroke="#9a9a9a" stroke-width="1.1" stroke-dasharray="40 5 6 5"/>
<line x1="3396" y1="692" x2="3396" y2="2175" stroke="#9a9a9a" stroke-width="1.1" stroke-dasharray="40 5 6 5"/>
<circle cx="1060" cy="679" r="12" fill="#fafafa" stroke="#333" stroke-width="1.6"/><text x="1060" y="682.24" font-size="9" text-anchor="middle" fill="#333">0.1</text>
<circle cx="1197" cy="679" r="12" fill="#fafafa" stroke="#333" stroke-width="1.6"/><text x="1197" y="682.24" font-size="9" text-anchor="middle" fill="#333">0.6</text>
<circle cx="1321" cy="679" r="12" fill="#fafafa" stroke="#333" stroke-width="1.6"/><text x="1321" y="682.24" font-size="9" text-anchor="middle" fill="#333">0.9</text>
<circle cx="1346" cy="679" r="12" fill="#fafafa" stroke="#333" stroke-width="1.6"/><text x="1346" y="682.6" font-size="10" text-anchor="middle" fill="#333">1</text>
<circle cx="1755" cy="679" r="12" fill="#fafafa" stroke="#333" stroke-width="1.6"/><text x="1755" y="682.6" font-size="10" text-anchor="middle" fill="#333">2</text>
<circle cx="2165" cy="679" r="12" fill="#fafafa" stroke="#333" stroke-width="1.6"/><text x="2165" y="682.6" font-size="10" text-anchor="middle" fill="#333">3</text>
<circle cx="2575" cy="679" r="12" fill="#fafafa" stroke="#333" stroke-width="1.6"/><text x="2575" y="682.6" font-size="10" text-anchor="middle" fill="#333">4</text>
<circle cx="2985" cy="679" r="12" fill="#fafafa" stroke="#333" stroke-width="1.6"/><text x="2985" y="682.6" font-size="10" text-anchor="middle" fill="#333">5</text>
<circle cx="3396" cy="679" r="12" fill="#fafafa" stroke="#333" stroke-width="1.6"/><text x="3396" y="682.6" font-size="10" text-anchor="middle" fill="#333">6</text>
<circle cx="1003" cy="721" r="12" fill="#fafafa" stroke="#333" stroke-width="1.6"/><text x="1003" y="724.6" font-size="10" text-anchor="middle" fill="#333">A</text>
<circle cx="1003" cy="804" r="12" fill="#fafafa" stroke="#333" stroke-width="1.6"/><text x="1003" y="807.6" font-size="10" text-anchor="middle" fill="#333">B</text>
<circle cx="1003" cy="1135" r="12" fill="#fafafa" stroke="#333" stroke-width="1.6"/><text x="1003" y="1138.6" font-size="10" text-anchor="middle" fill="#333">C</text>
<circle cx="1003" cy="1467" r="12" fill="#fafafa" stroke="#333" stroke-width="1.6"/><text x="1003" y="1470.6" font-size="10" text-anchor="middle" fill="#333">D</text>
<circle cx="1003" cy="1798" r="12" fill="#fafafa" stroke="#333" stroke-width="1.6"/><text x="1003" y="1801.6" font-size="10" text-anchor="middle" fill="#333">E</text>
<circle cx="1003" cy="2128" r="12" fill="#fafafa" stroke="#333" stroke-width="1.6"/><text x="1003" y="2131.6" font-size="10" text-anchor="middle" fill="#333">F</text>
<rect x="1341" y="1131" width="8" height="8" fill="#777" stroke="#333" stroke-width="1.5"/>
<rect x="1341" y="1463" width="8" height="8" fill="#777" stroke="#333" stroke-width="1.5"/>
<rect x="1341" y="1794" width="8" height="8" fill="#777" stroke="#333" stroke-width="1.5"/>
<rect x="1341" y="2124" width="8" height="8" fill="#777" stroke="#333" stroke-width="1.5"/>
<rect x="1751" y="1131" width="8" height="8" fill="#777" stroke="#333" stroke-width="1.5"/>
<rect x="1751" y="1463" width="8" height="8" fill="#777" stroke="#333" stroke-width="1.5"/>
<rect x="1751" y="1794" width="8" height="8" fill="#777" stroke="#333" stroke-width="1.5"/>
<rect x="1751" y="2124" width="8" height="8" fill="#777" stroke="#333" stroke-width="1.5"/>
<rect x="2161" y="1131" width="8" height="8" fill="#777" stroke="#333" stroke-width="1.5"/>
<rect x="2161" y="1463" width="8" height="8" fill="#777" stroke="#333" stroke-width="1.5"/>
<rect x="2161" y="1794" width="8" height="8" fill="#777" stroke="#333" stroke-width="1.5"/>
<rect x="2161" y="2124" width="8" height="8" fill="#777" stroke="#333" stroke-width="1.5"/>
<rect x="2571" y="1131" width="8" height="8" fill="#777" stroke="#333" stroke-width="1.5"/>
<rect x="2571" y="1463" width="8" height="8" fill="#777" stroke="#333" stroke-width="1.5"/>
<rect x="2571" y="1794" width="8" height="8" fill="#777" stroke="#333" stroke-width="1.5"/>
<rect x="2571" y="2124" width="8" height="8" fill="#777" stroke="#333" stroke-width="1.5"/>
<rect x="2981" y="1131" width="8" height="8" fill="#777" stroke="#333" stroke-width="1.5"/>
<rect x="2981" y="1463" width="8" height="8" fill="#777" stroke="#333" stroke-width="1.5"/>
<rect x="2981" y="1794" width="8" height="8" fill="#777" stroke="#333" stroke-width="1.5"/>
<rect x="2981" y="2124" width="8" height="8" fill="#777" stroke="#333" stroke-width="1.5"/>
<rect x="3392" y="1131" width="8" height="8" fill="#777" stroke="#333" stroke-width="1.5"/>
<rect x="3392" y="1463" width="8" height="8" fill="#777" stroke="#333" stroke-width="1.5"/>
<rect x="3392" y="1794" width="8" height="8" fill="#777" stroke="#333" stroke-width="1.5"/>
<rect x="3392" y="2124" width="8" height="8" fill="#777" stroke="#333" stroke-width="1.5"/>
<path d="M1338 2134 L3402 2134 L3402 888" stroke="#3c3c3c" stroke-width="10" fill="none"/><path d="M1338 2134 L3402 2134 L3402 888" stroke="#c4c4c4" stroke-width="6.6" fill="none"/>
<path d="M1338 2134 L1338 796 L1370 796" stroke="#3c3c3c" stroke-width="10" fill="none"/><path d="M1338 2134 L1338 796 L1370 796" stroke="#c4c4c4" stroke-width="6.6" fill="none"/>
<path d="M1370 793 L1478 751" stroke="#555" stroke-width="1.5" fill="none"/>
<path d="M1484 755 L1509 799" stroke="#3c3c3c" stroke-width="7" fill="none"/><path d="M1484 755 L1509 799" stroke="#c4c4c4" stroke-width="3.6" fill="none"/>
<path d="M1478 747 L1494 745 L1497 757 L1481 759Z" stroke="#333" stroke-width="2" fill="none"/>
<path d="M1508 796 L3002 796" stroke="#3c3c3c" stroke-width="10" fill="none"/><path d="M1508 796 L3002 796" stroke="#c4c4c4" stroke-width="6.6" fill="none"/>
<path d="M1362.0 2138 V2148 H1370.0 V2138" stroke="#333" stroke-width="1.6" fill="none"/>
<path d="M1403.4 2138 V2148 H1411.4 V2138" stroke="#333" stroke-width="1.6" fill="none"/>
<path d="M1444.7 2138 V2148 H1452.7 V2138" stroke="#333" stroke-width="1.6" fill="none"/>
<path d="M1486.1 2138 V2148 H1494.1 V2138" stroke="#333" stroke-width="1.6" fill="none"/>
<path d="M1527.4 2138 V2148 H1535.4 V2138" stroke="#333" stroke-width="1.6" fill="none"/>
<path d="M1568.8 2138 V2148 H1576.8 V2138" stroke="#333" stroke-width="1.6" fill="none"/>
<path d="M1610.2 2138 V2148 H1618.2 V2138" stroke="#333" stroke-width="1.6" fill="none"/>
<path d="M1651.5 2138 V2148 H1659.5 V2138" stroke="#333" stroke-width="1.6" fill="none"/>
<path d="M1692.9 2138 V2148 H1700.9 V2138" stroke="#333" stroke-width="1.6" fill="none"/>
<path d="M1734.2 2138 V2148 H1742.2 V2138" stroke="#333" stroke-width="1.6" fill="none"/>
<path d="M1775.6 2138 V2148 H1783.6 V2138" stroke="#333" stroke-width="1.6" fill="none"/>
<path d="M1817.0 2138 V2148 H1825.0 V2138" stroke="#333" stroke-width="1.6" fill="none"/>
<path d="M1858.3 2138 V2148 H1866.3 V2138" stroke="#333" stroke-width="1.6" fill="none"/>
<path d="M1899.7 2138 V2148 H1907.7 V2138" stroke="#333" stroke-width="1.6" fill="none"/>
<path d="M1941.0 2138 V2148 H1949.0 V2138" stroke="#333" stroke-width="1.6" fill="none"/>
<path d="M1982.4 2138 V2148 H1990.4 V2138" stroke="#333" stroke-width="1.6" fill="none"/>
<path d="M2023.8 2138 V2148 H2031.8 V2138" stroke="#333" stroke-width="1.6" fill="none"/>
<path d="M2065.1 2138 V2148 H2073.1 V2138" stroke="#333" stroke-width="1.6" fill="none"/>
<path d="M2106.5 2138 V2148 H2114.5 V2138" stroke="#333" stroke-width="1.6" fill="none"/>
<path d="M2147.8 2138 V2148 H2155.8 V2138" stroke="#333" stroke-width="1.6" fill="none"/>
<path d="M2189.2 2138 V2148 H2197.2 V2138" stroke="#333" stroke-width="1.6" fill="none"/>
<path d="M2230.6 2138 V2148 H2238.6 V2138" stroke="#333" stroke-width="1.6" fill="none"/>
<path d="M2271.9 2138 V2148 H2279.9 V2138" stroke="#333" stroke-width="1.6" fill="none"/>
<path d="M2313.3 2138 V2148 H2321.3 V2138" stroke="#333" stroke-width="1.6" fill="none"/>
<path d="M2354.6 2138 V2148 H2362.6 V2138" stroke="#333" stroke-width="1.6" fill="none"/>
<path d="M2396.0 2138 V2148 H2404.0 V2138" stroke="#333" stroke-width="1.6" fill="none"/>
<path d="M2437.4 2138 V2148 H2445.4 V2138" stroke="#333" stroke-width="1.6" fill="none"/>
<path d="M2478.7 2138 V2148 H2486.7 V2138" stroke="#333" stroke-width="1.6" fill="none"/>
<path d="M2520.1 2138 V2148 H2528.1 V2138" stroke="#333" stroke-width="1.6" fill="none"/>
<path d="M2561.4 2138 V2148 H2569.4 V2138" stroke="#333" stroke-width="1.6" fill="none"/>
<path d="M2602.8 2138 V2148 H2610.8 V2138" stroke="#333" stroke-width="1.6" fill="none"/>
<path d="M2644.2 2138 V2148 H2652.2 V2138" stroke="#333" stroke-width="1.6" fill="none"/>
<path d="M2685.5 2138 V2148 H2693.5 V2138" stroke="#333" stroke-width="1.6" fill="none"/>
<path d="M2726.9 2138 V2148 H2734.9 V2138" stroke="#333" stroke-width="1.6" fill="none"/>
<path d="M2768.2 2138 V2148 H2776.2 V2138" stroke="#333" stroke-width="1.6" fill="none"/>
<path d="M2809.6 2138 V2148 H2817.6 V2138" stroke="#333" stroke-width="1.6" fill="none"/>
<path d="M2851.0 2138 V2148 H2859.0 V2138" stroke="#333" stroke-width="1.6" fill="none"/>
<path d="M2892.3 2138 V2148 H2900.3 V2138" stroke="#333" stroke-width="1.6" fill="none"/>
<path d="M2933.7 2138 V2148 H2941.7 V2138" stroke="#333" stroke-width="1.6" fill="none"/>
<path d="M2975.0 2138 V2148 H2983.0 V2138" stroke="#333" stroke-width="1.6" fill="none"/>
<path d="M3016.4 2138 V2148 H3024.4 V2138" stroke="#333" stroke-width="1.6" fill="none"/>
<path d="M3057.8 2138 V2148 H3065.8 V2138" stroke="#333" stroke-width="1.6" fill="none"/>
<path d="M3099.1 2138 V2148 H3107.1 V2138" stroke="#333" stroke-width="1.6" fill="none"/>
<path d="M3140.5 2138 V2148 H3148.5 V2138" stroke="#333" stroke-width="1.6" fill="none"/>
<path d="M3181.8 2138 V2148 H3189.8 V2138" stroke="#333" stroke-width="1.6" fill="none"/>
<path d="M3223.2 2138 V2148 H3231.2 V2138" stroke="#333" stroke-width="1.6" fill="none"/>
<path d="M3264.6 2138 V2148 H3272.6 V2138" stroke="#333" stroke-width="1.6" fill="none"/>
<path d="M3305.9 2138 V2148 H3313.9 V2138" stroke="#333" stroke-width="1.6" fill="none"/>
<path d="M3347.3 2138 V2148 H3355.3 V2138" stroke="#333" stroke-width="1.6" fill="none"/>
<line x1="2539" y1="1135" x2="2539" y2="2135" stroke="#aaa" stroke-width="0.9"/>
<line x1="2533" y1="1129" x2="2545" y2="1141" stroke="#333" stroke-width="1.5"/>
<line x1="2533" y1="1461" x2="2545" y2="1473" stroke="#333" stroke-width="1.5"/>
<line x1="2533" y1="1792" x2="2545" y2="1804" stroke="#333" stroke-width="1.5"/>
<line x1="2533" y1="2122" x2="2545" y2="2134" stroke="#333" stroke-width="1.5"/>
<text x="2533" y="1301" font-size="8" text-anchor="middle" fill="#333" transform="rotate(-90 2533 1301)">40' - 0"</text>
<text x="2533" y="1632" font-size="8" text-anchor="middle" fill="#333" transform="rotate(-90 2533 1632)">40' - 0"</text>
<text x="2533" y="1963" font-size="8" text-anchor="middle" fill="#333" transform="rotate(-90 2533 1963)">40' - 0"</text>
<line x1="3395" y1="1135" x2="3410" y2="1135" stroke="#333" stroke-width="2"/>
<line x1="3395" y1="1217" x2="3410" y2="1217" stroke="#333" stroke-width="2"/>
<line x1="3395" y1="1299" x2="3410" y2="1299" stroke="#333" stroke-width="2"/>
<line x1="3395" y1="1381" x2="3410" y2="1381" stroke="#333" stroke-width="2"/>
<line x1="3395" y1="1463" x2="3410" y2="1463" stroke="#333" stroke-width="2"/>
<line x1="3395" y1="1545" x2="3410" y2="1545" stroke="#333" stroke-width="2"/>
<line x1="3395" y1="1627" x2="3410" y2="1627" stroke="#333" stroke-width="2"/>
<line x1="3395" y1="1709" x2="3410" y2="1709" stroke="#333" stroke-width="2"/>
<line x1="3395" y1="1791" x2="3410" y2="1791" stroke="#333" stroke-width="2"/>
<line x1="3395" y1="1873" x2="3410" y2="1873" stroke="#333" stroke-width="2"/>
<line x1="3395" y1="1955" x2="3410" y2="1955" stroke="#333" stroke-width="2"/>
<line x1="3395" y1="2037" x2="3410" y2="2037" stroke="#333" stroke-width="2"/>
<line x1="3395" y1="2119" x2="3410" y2="2119" stroke="#333" stroke-width="2"/>
<line x1="1332" y1="804" x2="1344" y2="804" stroke="#555" stroke-width="1.5"/>
<line x1="1332" y1="886" x2="1344" y2="886" stroke="#555" stroke-width="1.5"/>
<line x1="1332" y1="968" x2="1344" y2="968" stroke="#555" stroke-width="1.5"/>
<line x1="1332" y1="1050" x2="1344" y2="1050" stroke="#555" stroke-width="1.5"/>
<line x1="1332" y1="1132" x2="1344" y2="1132" stroke="#555" stroke-width="1.5"/>
<line x1="1332" y1="1214" x2="1344" y2="1214" stroke="#555" stroke-width="1.5"/>
<line x1="1332" y1="1296" x2="1344" y2="1296" stroke="#555" stroke-width="1.5"/>
<line x1="1332" y1="1378" x2="1344" y2="1378" stroke="#555" stroke-width="1.5"/>
<line x1="1332" y1="1460" x2="1344" y2="1460" stroke="#555" stroke-width="1.5"/>
<line x1="1332" y1="1542" x2="1344" y2="1542" stroke="#555" stroke-width="1.5"/>
<line x1="1332" y1="1624" x2="1344" y2="1624" stroke="#555" stroke-width="1.5"/>
<line x1="1332" y1="1706" x2="1344" y2="1706" stroke="#555" stroke-width="1.5"/>
<line x1="1332" y1="1788" x2="1344" y2="1788" stroke="#555" stroke-width="1.5"/>
<line x1="1332" y1="1870" x2="1344" y2="1870" stroke="#555" stroke-width="1.5"/>
<line x1="1332" y1="1952" x2="1344" y2="1952" stroke="#555" stroke-width="1.5"/>
<line x1="1332" y1="2034" x2="1344" y2="2034" stroke="#555" stroke-width="1.5"/>
<line x1="1332" y1="2116" x2="1344" y2="2116" stroke="#555" stroke-width="1.5"/>
<path d="M1446 1102 L1446 1136 L1542 1136" stroke="#3c3c3c" stroke-width="7" fill="none"/><path d="M1446 1102 L1446 1136 L1542 1136" stroke="#c4c4c4" stroke-width="3.6" fill="none"/>
<path d="M1340 1035 L1446 1035 L1446 1069" stroke="#3c3c3c" stroke-width="7" fill="none"/><path d="M1340 1035 L1446 1035 L1446 1069" stroke="#c4c4c4" stroke-width="3.6" fill="none"/>
<path d="M1446 1069 a33 33 0 0 0 -33 33" stroke="#666" stroke-width="1" fill="none"/>
<path d="M1340 1069 a30 30 0 0 1 -30 30" stroke="#666" stroke-width="1" fill="none"/>
<text x="1405" y="1094" font-size="8" text-anchor="middle" fill="#333">110B</text>
<text x="1330" y="1098" font-size="8" text-anchor="middle" fill="#333">108B</text>
<line x1="1310" y1="1069" x2="1340" y2="1069" stroke="#333" stroke-width="3"/>
<line x1="1310" y1="1102" x2="1340" y2="1102" stroke="#333" stroke-width="3"/>
<path d="M1639 1136 L2069 1136 L2069 1092" stroke="#3c3c3c" stroke-width="7" fill="none"/><path d="M1639 1136 L2069 1136 L2069 1092" stroke="#c4c4c4" stroke-width="3.6" fill="none"/>
<path d="M2069 1060 L2069 802" stroke="#3c3c3c" stroke-width="6" fill="none"/><path d="M2069 1060 L2069 802" stroke="#c4c4c4" stroke-width="2.6" fill="none"/>
<path d="M2069 1060 a30 30 0 0 1 30 32" stroke="#666" stroke-width="1" fill="none"/>
<text x="2042" y="830" font-size="8" text-anchor="middle" fill="#333">F.E.C.</text>
<text x="2035" y="940" font-size="8" text-anchor="middle" fill="#333">M08</text>
<line x1="1542" y1="1150" x2="1639" y2="1150" stroke="#aac" stroke-width="1" stroke-dasharray="5 4"/>
<line x1="1595" y1="790" x2="1595" y2="802" stroke="#333" stroke-width="2"/>
<line x1="1640" y1="790" x2="1640" y2="802" stroke="#333" stroke-width="2"/>
<line x1="1715" y1="790" x2="1715" y2="802" stroke="#333" stroke-width="2"/>
<line x1="1780" y1="790" x2="1780" y2="802" stroke="#333" stroke-width="2"/>
<line x1="1845" y1="790" x2="1845" y2="802" stroke="#333" stroke-width="2"/>
<line x1="1925" y1="790" x2="1925" y2="802" stroke="#333" stroke-width="2"/>
<line x1="1985" y1="790" x2="1985" y2="802" stroke="#333" stroke-width="2"/>
<line x1="2140" y1="790" x2="2140" y2="802" stroke="#333" stroke-width="2"/>
<line x1="2205" y1="790" x2="2205" y2="802" stroke="#333" stroke-width="2"/>
<line x1="2290" y1="790" x2="2290" y2="802" stroke="#333" stroke-width="2"/>
<line x1="2350" y1="790" x2="2350" y2="802" stroke="#333" stroke-width="2"/>
<line x1="2445" y1="790" x2="2445" y2="802" stroke="#333" stroke-width="2"/>
<line x1="2520" y1="790" x2="2520" y2="802" stroke="#333" stroke-width="2"/>
<line x1="2620" y1="790" x2="2620" y2="802" stroke="#333" stroke-width="2"/>
<line x1="2680" y1="790" x2="2680" y2="802" stroke="#333" stroke-width="2"/>
<line x1="2760" y1="790" x2="2760" y2="802" stroke="#333" stroke-width="2"/>
<line x1="2850" y1="790" x2="2850" y2="802" stroke="#333" stroke-width="2"/>
<line x1="2915" y1="790" x2="2915" y2="802" stroke="#333" stroke-width="2"/>
<path d="M2134 792 V768 a24 24 0 0 1 24 24" stroke="#777" stroke-width="1" fill="none"/>
<path d="M2205 792 V768 a24 24 0 0 1 24 24" stroke="#777" stroke-width="1" fill="none"/>
<path d="M2285 792 V768 a24 24 0 0 1 24 24" stroke="#777" stroke-width="1" fill="none"/>
<path d="M2582 792 V768 a24 24 0 0 1 24 24" stroke="#777" stroke-width="1" fill="none"/>
<path d="M2068 802 L2068 1035" stroke="#3c3c3c" stroke-width="6" fill="none"/><path d="M2068 802 L2068 1035" stroke="#c4c4c4" stroke-width="2.6" fill="none"/>
<path d="M2176 802 L2176 1035" stroke="#3c3c3c" stroke-width="6" fill="none"/><path d="M2176 802 L2176 1035" stroke="#c4c4c4" stroke-width="2.6" fill="none"/>
<path d="M2068 1031 L2176 1031" stroke="#3c3c3c" stroke-width="6" fill="none"/><path d="M2068 1031 L2176 1031" stroke="#c4c4c4" stroke-width="2.6" fill="none"/>
<path d="M2068 1045 L2138 1045" stroke="#3c3c3c" stroke-width="5" fill="none"/><path d="M2068 1045 L2138 1045" stroke="#c4c4c4" stroke-width="1.6" fill="none"/>
<path d="M2160 1045 L2176 1045" stroke="#3c3c3c" stroke-width="5" fill="none"/><path d="M2160 1045 L2176 1045" stroke="#c4c4c4" stroke-width="1.6" fill="none"/>
<path d="M2057 800 Q2057 782 2075 782 H2167 Q2185 782 2185 800 V1030 Q2185 1048 2167 1048 H2075 Q2057 1048 2057 1030Z" stroke="#222" stroke-width="2.6" fill="none" stroke-dasharray="10 6"/>
<line x1="2073" y1="932.0" x2="2110" y2="932.0" stroke="#888" stroke-width="1"/>
<line x1="2073" y1="936.4" x2="2110" y2="936.4" stroke="#888" stroke-width="1"/>
<line x1="2073" y1="940.8" x2="2110" y2="940.8" stroke="#888" stroke-width="1"/>
<line x1="2073" y1="945.2" x2="2110" y2="945.2" stroke="#888" stroke-width="1"/>
<line x1="2073" y1="949.6" x2="2110" y2="949.6" stroke="#888" stroke-width="1"/>
<line x1="2073" y1="954.0" x2="2110" y2="954.0" stroke="#888" stroke-width="1"/>
<line x1="2073" y1="958.4" x2="2110" y2="958.4" stroke="#888" stroke-width="1"/>
<line x1="2073" y1="962.8" x2="2110" y2="962.8" stroke="#888" stroke-width="1"/>
<line x1="2073" y1="967.2" x2="2110" y2="967.2" stroke="#888" stroke-width="1"/>
<line x1="2073" y1="971.6" x2="2110" y2="971.6" stroke="#888" stroke-width="1"/>
<line x1="2073" y1="976.0" x2="2110" y2="976.0" stroke="#888" stroke-width="1"/>
<line x1="2073" y1="980.4" x2="2110" y2="980.4" stroke="#888" stroke-width="1"/>
<line x1="2073" y1="984.8" x2="2110" y2="984.8" stroke="#888" stroke-width="1"/>
<line x1="2073" y1="840" x2="2172" y2="840" stroke="#bbb" stroke-width="1" stroke-dasharray="3 3"/>
<line x1="2073" y1="851" x2="2172" y2="851" stroke="#bbb" stroke-width="1" stroke-dasharray="3 3"/>
<line x1="2073" y1="862" x2="2172" y2="862" stroke="#bbb" stroke-width="1" stroke-dasharray="3 3"/>
<line x1="2073" y1="873" x2="2172" y2="873" stroke="#bbb" stroke-width="1" stroke-dasharray="3 3"/>
<line x1="2073" y1="884" x2="2172" y2="884" stroke="#bbb" stroke-width="1" stroke-dasharray="3 3"/>
<line x1="2073" y1="895" x2="2172" y2="895" stroke="#bbb" stroke-width="1" stroke-dasharray="3 3"/>
<line x1="2075" y1="838" x2="2075" y2="900" stroke="#ccc" stroke-width="1" stroke-dasharray="3 3"/>
<line x1="2086" y1="838" x2="2086" y2="900" stroke="#ccc" stroke-width="1" stroke-dasharray="3 3"/>
<line x1="2097" y1="838" x2="2097" y2="900" stroke="#ccc" stroke-width="1" stroke-dasharray="3 3"/>
<line x1="2108" y1="838" x2="2108" y2="900" stroke="#ccc" stroke-width="1" stroke-dasharray="3 3"/>
<line x1="2119" y1="838" x2="2119" y2="900" stroke="#ccc" stroke-width="1" stroke-dasharray="3 3"/>
<line x1="2130" y1="838" x2="2130" y2="900" stroke="#ccc" stroke-width="1" stroke-dasharray="3 3"/>
<line x1="2141" y1="838" x2="2141" y2="900" stroke="#ccc" stroke-width="1" stroke-dasharray="3 3"/>
<line x1="2152" y1="838" x2="2152" y2="900" stroke="#ccc" stroke-width="1" stroke-dasharray="3 3"/>
<line x1="2163" y1="838" x2="2163" y2="900" stroke="#ccc" stroke-width="1" stroke-dasharray="3 3"/>
<line x1="2110" y1="838" x2="2110" y2="994" stroke="#555" stroke-width="1.8"/>
<text x="2120" y="1000" font-size="8" text-anchor="middle" fill="#333">12' - 8"</text>
<text x="2149" y="1033" font-size="7" text-anchor="middle" fill="#333">109B</text>
<path d="M2068 1059 L2068 1045" stroke="#3c3c3c" stroke-width="6" fill="none"/><path d="M2068 1059 L2068 1045" stroke="#c4c4c4" stroke-width="2.6" fill="none"/>
<path d="M2068 1094 L2068 1136 L2090 1136" stroke="#3c3c3c" stroke-width="6" fill="none"/><path d="M2068 1094 L2068 1136 L2090 1136" stroke="#c4c4c4" stroke-width="2.6" fill="none"/>
<path d="M2068 1094 a34 34 0 0 1 34 -34" stroke="#777" stroke-width="1" fill="none"/>
<text x="2065" y="1086" font-size="8" text-anchor="middle" fill="#333">110C</text>
<text x="2100" y="1068" font-size="8" text-anchor="middle" fill="#333">M08</text>
<path d="M2176 1050 L2176 1136 L2201 1136" stroke="#3c3c3c" stroke-width="6" fill="none"/><path d="M2176 1050 L2176 1136 L2201 1136" stroke="#c4c4c4" stroke-width="2.6" fill="none"/>
<path d="M2227 1136 L2355 1136" stroke="#3c3c3c" stroke-width="6" fill="none"/><path d="M2227 1136 L2355 1136" stroke="#c4c4c4" stroke-width="2.6" fill="none"/>
<path d="M2379 1136 L2596 1136 L2596 1118" stroke="#3c3c3c" stroke-width="6" fill="none"/><path d="M2379 1136 L2596 1136 L2596 1118" stroke="#c4c4c4" stroke-width="2.6" fill="none"/>
<path d="M2272 802 L2272 1136" stroke="#3c3c3c" stroke-width="6" fill="none"/><path d="M2272 802 L2272 1136" stroke="#c4c4c4" stroke-width="2.6" fill="none"/>
<line x1="2258" y1="830" x2="2258" y2="1130" stroke="#999" stroke-width="1"/>
<text x="2252" y="830" font-size="8" text-anchor="middle" fill="#333" transform="rotate(-90 2252 830)">8' - 9 5/8"</text>
<text x="2252" y="939" font-size="8" text-anchor="middle" fill="#333" transform="rotate(-90 2252 939)">19' - 0 3/8"</text>
<text x="2252" y="1077" font-size="8" text-anchor="middle" fill="#333" transform="rotate(-90 2252 1077)">14' - 2"</text>
<text x="2224" y="1051" font-size="8" text-anchor="middle" fill="#333">10' - 8"</text>
<line x1="2178" y1="1058" x2="2270" y2="1058" stroke="#999" stroke-width="0.8"/>
<text x="2210" y="1105" font-size="8" text-anchor="middle" fill="#333">M08</text>
<text x="2213" y="1139" font-size="7" text-anchor="middle" fill="#333">114B</text>
<path d="M2274 856 L2395 856 L2395 830" stroke="#3c3c3c" stroke-width="6" fill="none"/><path d="M2274 856 L2395 856 L2395 830" stroke="#c4c4c4" stroke-width="2.6" fill="none"/>
<line x1="2355" y1="846" x2="2355" y2="856" stroke="#333" stroke-width="3"/>
<text x="2355" y="825" font-size="7" text-anchor="middle" fill="#333">M08</text>
<text x="2395" y="824" font-size="7" text-anchor="middle" fill="#333">112B</text>
<path d="M2277 862 L2277 1012 L2393 1012 L2393 990" stroke="#3c3c3c" stroke-width="5" fill="none"/><path d="M2277 862 L2277 1012 L2393 1012 L2393 990" stroke="#c4c4c4" stroke-width="1.6" fill="none"/>
<path d="M2280 865 H2296 V1010 H2280" stroke="#999" stroke-width="1" fill="none"/>
<path d="M2283 870 V1005" stroke="#bbb" stroke-width="1" fill="none" stroke-dasharray="6 3"/>
<path d="M2318 990 h22 v22 h-22z" stroke="#888" stroke-width="1" fill="none"/>
<path d="M2342 990 h22 v22 h-22z" stroke="#888" stroke-width="1" fill="none"/>
<path d="M2366 990 h22 v22 h-22z" stroke="#888" stroke-width="1" fill="none"/>
<path d="M2330 868 Q2362 878 2390 868" stroke="#bbb" stroke-width="1" fill="none" stroke-dasharray="3 3"/>
<line x1="2277" y1="902" x2="2290" y2="902" stroke="#333" stroke-width="3"/>
<text x="2310" y="905" font-size="8" text-anchor="middle" fill="#333">S38</text>
<path d="M2272 1018 L2391 1018 L2391 1136" stroke="#3c3c3c" stroke-width="6" fill="none"/><path d="M2272 1018 L2391 1018 L2391 1136" stroke="#c4c4c4" stroke-width="2.6" fill="none"/>
<line x1="2310" y1="1018" x2="2310" y2="1030" stroke="#333" stroke-width="3"/>
<text x="2310" y="1052" font-size="8" text-anchor="middle" fill="#333">M08</text>
<text x="2360" y="1075" font-size="8" text-anchor="middle" fill="#333">M08</text>
<text x="2305" y="1117" font-size="8" text-anchor="middle" fill="#333">M08</text>
<text x="2366" y="1138" font-size="7" text-anchor="middle" fill="#333">113</text>
<path d="M2379 1136 V1118 a20 20 0 0 0 -20 18" stroke="#777" stroke-width="1" fill="none"/>
<path d="M2594 1092 L2594 838" stroke="#3c3c3c" stroke-width="6" fill="none"/><path d="M2594 1092 L2594 838" stroke="#c4c4c4" stroke-width="2.6" fill="none"/>
<path d="M2594 802 L2594 815 L2620 815" stroke="#3c3c3c" stroke-width="5" fill="none"/><path d="M2594 802 L2594 815 L2620 815" stroke="#c4c4c4" stroke-width="1.6" fill="none"/>
<path d="M2620 815 a24 24 0 0 1 -24 24" stroke="#777" stroke-width="1" fill="none"/>
<text x="2615" y="838" font-size="8" text-anchor="middle" fill="#333">115A</text>
<path d="M2596 1118 H2620 a24 24 0 0 0 -24 -24" stroke="#777" stroke-width="1" fill="none"/>
<text x="2612" y="1108" font-size="8" text-anchor="middle" fill="#333">115B</text>
<circle cx="2457" cy="871" r="26" fill="none" stroke="#bbb" stroke-width="1.4" stroke-dasharray="4 3"/>
<circle cx="2542" cy="919" r="26" fill="none" stroke="#bbb" stroke-width="1.4" stroke-dasharray="4 3"/>
<circle cx="2457" cy="975" r="26" fill="none" stroke="#bbb" stroke-width="1.4" stroke-dasharray="4 3"/>
<circle cx="2542" cy="1041" r="26" fill="none" stroke="#bbb" stroke-width="1.4" stroke-dasharray="4 3"/>
<circle cx="2469" cy="1083" r="26" fill="none" stroke="#bbb" stroke-width="1.4" stroke-dasharray="4 3"/>
<text x="2531" y="969" font-size="8" text-anchor="middle" fill="#333" transform="rotate(-90 2531 969)">47' - 0"</text>
<text x="2580" y="925" font-size="8" text-anchor="middle" fill="#333">M08</text>
<line x1="2539" y1="838" x2="2539" y2="1135" stroke="#aaa" stroke-width="0.8"/>
<text x="2606" y="885" font-size="7.5" text-anchor="start" fill="#333">DRINKING FOUNTAINS</text>
<text x="2612" y="896" font-size="7.5" text-anchor="start" fill="#333">(1 HIGH-FLOW)</text>
<text x="2602" y="976" font-size="8" text-anchor="start" fill="#333">1' - 10"</text>
<text x="2642" y="976" font-size="8" text-anchor="start" fill="#333">9' - 0"</text>
<text x="2606" y="1016" font-size="8" text-anchor="start" fill="#333">8' - 4 3/8"</text>
<text x="2632" y="1032" font-size="8" text-anchor="start" fill="#333">F.E.C.</text>
<path d="M2658 795 Q2658 777 2676 777 H3005 Q3023 777 3023 795 V1134 Q3023 1152 3005 1152 H2676 Q2658 1152 2658 1134Z" stroke="#222" stroke-width="2.6" fill="none" stroke-dasharray="10 6"/>
<path d="M2668 802 L2668 866" stroke="#3c3c3c" stroke-width="5" fill="none"/><path d="M2668 802 L2668 866" stroke="#c4c4c4" stroke-width="1.6" fill="none"/>
<path d="M2668 952 L2668 1080 L2840 1080 L2850 1076" stroke="#3c3c3c" stroke-width="5" fill="none"/><path d="M2668 952 L2668 1080 L2840 1080 L2850 1076" stroke="#c4c4c4" stroke-width="1.6" fill="none"/>
<path d="M2698 863 L2716 863 L2716 968 L2698 968" stroke="#3c3c3c" stroke-width="5" fill="none"/><path d="M2698 863 L2716 863 L2716 968 L2698 968" stroke="#c4c4c4" stroke-width="1.6" fill="none"/>
<path d="M2670 866 a24 24 0 0 1 24 24" stroke="#777" stroke-width="1" fill="none"/>
<path d="M2670 952 a24 24 0 0 0 24 -24" stroke="#777" stroke-width="1" fill="none"/>
<text x="2690" y="865" font-size="7" text-anchor="middle" fill="#333">107</text>
<text x="2690" y="970" font-size="7" text-anchor="middle" fill="#333">106</text>
<text x="2650" y="848" font-size="7" text-anchor="middle" fill="#333">M08</text>
<text x="2650" y="998" font-size="7" text-anchor="middle" fill="#333">M08</text>
<path d="M2668 1036 L2788 1036" stroke="#3c3c3c" stroke-width="4" fill="none"/><path d="M2668 1036 L2788 1036" stroke="#c4c4c4" stroke-width="1" fill="none"/>
<path d="M2788 1013 L2788 1080" stroke="#3c3c3c" stroke-width="5" fill="none"/><path d="M2788 1013 L2788 1080" stroke="#c4c4c4" stroke-width="1.6" fill="none"/>
<path d="M2788 1013 L2839 1013 L2839 840" stroke="#3c3c3c" stroke-width="5" fill="none"/><path d="M2788 1013 L2839 1013 L2839 840" stroke="#c4c4c4" stroke-width="1.6" fill="none"/>
<path d="M2718 908 L2839 908" stroke="#3c3c3c" stroke-width="12" fill="none"/><path d="M2718 908 L2839 908" stroke="#c4c4c4" stroke-width="8.6" fill="none"/>
<path d="M2902 802 L2902 978" stroke="#3c3c3c" stroke-width="5" fill="none"/><path d="M2902 802 L2902 978" stroke="#c4c4c4" stroke-width="1.6" fill="none"/>
<path d="M2841 978 L2902 978" stroke="#3c3c3c" stroke-width="5" fill="none"/><path d="M2841 978 L2902 978" stroke="#c4c4c4" stroke-width="1.6" fill="none"/>
<line x1="2744" y1="916" x2="2744" y2="976" stroke="#888" stroke-width="2"/>
<line x1="2785" y1="916" x2="2785" y2="976" stroke="#333" stroke-width="4"/>
<line x1="2793" y1="840" x2="2793" y2="900" stroke="#888" stroke-width="2"/>
<path d="M2830 856 V882 M2842 946 H2880 V972" stroke="#444" stroke-width="3" fill="none"/>
<path d="M2872 830 V880 M2872 920 V960" stroke="#aaa" stroke-width="1.6" fill="none" stroke-dasharray="8 5"/>
<line x1="2884" y1="802" x2="2884" y2="975" stroke="#ddd" stroke-width="5"/>
<line x1="2884" y1="802" x2="2884" y2="975" stroke="#999" stroke-width="1" stroke-dasharray="2 2"/>
<path d="M2844 950 H2898 V976 H2844Z M2844 950 L2898 976 M2898 950 L2844 976" stroke="#aaa" stroke-width="1" fill="none"/>
<path d="M2784 918 H2836 V940 H2784Z M2784 918 L2836 940 M2836 918 L2784 940" stroke="#bbb" stroke-width="1" fill="none"/>
<path d="M2702 838 H2770 V846 H2702Z" stroke="#aaa" stroke-width="1" fill="none"/>
<path d="M2705 1028 H2765 V1034 H2705Z" stroke="#aaa" stroke-width="1" fill="none"/>
<ellipse cx="2727" cy="893" rx="5" ry="7" fill="none" stroke="#777" stroke-width="1"/>
<ellipse cx="2756" cy="893" rx="5" ry="7" fill="none" stroke="#777" stroke-width="1"/>
<ellipse cx="2780" cy="890" rx="5" ry="7" fill="none" stroke="#777" stroke-width="1"/>
<ellipse cx="2743" cy="927" rx="5" ry="7" fill="none" stroke="#777" stroke-width="1"/>
<ellipse cx="2781" cy="927" rx="5" ry="7" fill="none" stroke="#777" stroke-width="1"/>
<path d="M2862 990 L2925 974 L2944 1046 L2879 1063Z" stroke="#2a2a2a" stroke-width="6" fill="none"/>
<path d="M2870 996 L2920 982 L2936 1040 L2884 1054Z" stroke="#444" stroke-width="2" fill="none"/>
<text x="2905" y="1020" font-size="9" text-anchor="middle" fill="#555">ELEV.</text>
<path d="M2884 1063 L2938 1137" stroke="#333" stroke-width="5" fill="none"/>
<path d="M2898 1060 L2945 1120" stroke="#777" stroke-width="1.5" fill="none"/>
<path d="M2940 1090 a22 22 0 0 1 -20 22" stroke="#777" stroke-width="1" fill="none"/>
<text x="2915" y="1098" font-size="7" text-anchor="middle" fill="#333">102</text>
<path d="M2840 1080 Q2856 1076 2864 1070" stroke="#333" stroke-width="5" fill="none"/>
<text x="2855" y="1070" font-size="7" text-anchor="middle" fill="#333">104</text>
<text x="2735" y="1082" font-size="7" text-anchor="middle" fill="#333">105</text>
<rect x="2983" y="794" width="16" height="49" fill="#888" stroke="#222" stroke-width="2"/>
<line x1="2999" y1="840" x2="3048" y2="847" stroke="#444" stroke-width="1.5"/>
<path d="M3045 848 L3198 811 L3201 822 L3048 863Z" stroke="#222" stroke-width="3" fill="#cfcfcf"/>
<line x1="3060" y1="855" x2="3060" y2="845" stroke="#333" stroke-width="2"/>
<line x1="3085" y1="849" x2="3085" y2="839" stroke="#333" stroke-width="2"/>
<line x1="3110" y1="843" x2="3110" y2="833" stroke="#333" stroke-width="2"/>
<line x1="3135" y1="837" x2="3135" y2="827" stroke="#333" stroke-width="2"/>
<line x1="3160" y1="831" x2="3160" y2="821" stroke="#333" stroke-width="2"/>
<line x1="3185" y1="825" x2="3185" y2="815" stroke="#333" stroke-width="2"/>
<path d="M3110 915 L3203 895 L3279 874 L3406 890" stroke="#333" stroke-width="3.5" fill="none"/>
<path d="M3110 910 L3203 890" stroke="#666" stroke-width="1" fill="none"/>
<circle cx="3204" cy="895" r="4" fill="#fafafa" stroke="#222" stroke-width="2.5"/>
<circle cx="3279" cy="874" r="3" fill="#222"/>
<line x1="3188" y1="826" x2="3203" y2="895" stroke="#555" stroke-width="1.5" stroke-dasharray="4 3"/>
<path d="M3093 852 L3120 845 M3200 832 L3215 830" stroke="#444" stroke-width="2" fill="none"/>
<path d="M3120 845 a22 22 0 0 1 -6 22 M3215 830 a20 20 0 0 1 6 22" stroke="#888" stroke-width="1" fill="none"/>
<text x="3104" y="888" font-size="7" text-anchor="middle" fill="#333">101B</text>
<text x="3187" y="862" font-size="7" text-anchor="middle" fill="#333">101A</text>
<text x="2990" y="888" font-size="8" text-anchor="start" fill="#333">1' - 6"</text>
<text x="3002" y="933" font-size="7.5" text-anchor="start" fill="#333">FLOOR ABOVE</text>
<path d="M3083 968 L3162 947 M3083 968 L3125 1129" stroke="#888" stroke-width="1.5" fill="none" stroke-dasharray="6 4"/>
<path d="M3109 1000 Q3109 994 3115 994 H3245 Q3251 994 3251 1000 V1141 Q3251 1147 3245 1147 H3115 Q3109 1147 3109 1141Z" stroke="#222" stroke-width="2.6" fill="none" stroke-dasharray="10 6"/>
<line x1="3115" y1="1033" x2="3170" y2="1129" stroke="#444" stroke-width="2"/>
<line x1="3162" y1="1002" x2="3196" y2="1095" stroke="#444" stroke-width="2"/>
<line x1="3115.0" y1="1033.0" x2="3162.0" y2="994.0" stroke="#777" stroke-width="1"/>
<line x1="3120.5" y1="1042.6" x2="3165.4" y2="1003.3" stroke="#777" stroke-width="1"/>
<line x1="3126.0" y1="1052.2" x2="3168.8" y2="1012.6" stroke="#777" stroke-width="1"/>
<line x1="3131.5" y1="1061.8" x2="3172.2" y2="1021.9000000000001" stroke="#777" stroke-width="1"/>
<line x1="3137.0" y1="1071.4" x2="3175.6" y2="1031.2" stroke="#777" stroke-width="1"/>
<line x1="3142.5" y1="1081.0" x2="3179.0" y2="1040.5" stroke="#777" stroke-width="1"/>
<line x1="3148.0" y1="1090.6" x2="3182.4" y2="1049.8" stroke="#777" stroke-width="1"/>
<line x1="3153.5" y1="1100.2" x2="3185.8" y2="1059.1" stroke="#777" stroke-width="1"/>
<line x1="3159.0" y1="1109.8" x2="3189.2" y2="1068.4" stroke="#777" stroke-width="1"/>
<line x1="3164.5" y1="1119.4" x2="3192.6" y2="1077.7" stroke="#777" stroke-width="1"/>
<line x1="3170.0" y1="1129.0" x2="3196.0" y2="1087.0" stroke="#777" stroke-width="1"/>
<line x1="3177" y1="1012" x2="3233" y2="1012" stroke="#bbb" stroke-width="1" stroke-dasharray="3 3"/>
<line x1="3177" y1="1025" x2="3233" y2="1025" stroke="#bbb" stroke-width="1" stroke-dasharray="3 3"/>
<line x1="3177" y1="1038" x2="3233" y2="1038" stroke="#bbb" stroke-width="1" stroke-dasharray="3 3"/>
<line x1="3177" y1="1051" x2="3233" y2="1051" stroke="#bbb" stroke-width="1" stroke-dasharray="3 3"/>
<line x1="3177" y1="1064" x2="3233" y2="1064" stroke="#bbb" stroke-width="1" stroke-dasharray="3 3"/>
<line x1="3177" y1="1077" x2="3233" y2="1077" stroke="#bbb" stroke-width="1" stroke-dasharray="3 3"/>
<line x1="3177" y1="1090" x2="3233" y2="1090" stroke="#bbb" stroke-width="1" stroke-dasharray="3 3"/>
<path d="M3235 1008 L3235 1136" stroke="#3c3c3c" stroke-width="4" fill="none"/><path d="M3235 1008 L3235 1136" stroke="#c4c4c4" stroke-width="1" fill="none"/>
<line x1="3209" y1="916" x2="3233" y2="1008" stroke="#333" stroke-width="3"/>
<line x1="3285" y1="1007" x2="3285" y2="1129" stroke="#999" stroke-width="0.8"/>
<text x="3277" y="1069" font-size="8" text-anchor="middle" fill="#333" transform="rotate(-90 3277 1069)">14' - 10 7/8"</text>
<text x="3256" y="1072" font-size="7" text-anchor="middle" fill="#333">M08</text>
<text x="3262" y="1114" font-size="8" text-anchor="middle" fill="#333">C10</text>
<path d="M3290 1115 H3320 V1100" stroke="#888" stroke-width="1" fill="none"/>
<text x="3305" y="1112" font-size="7" text-anchor="middle" fill="#333">F-02</text>
<line x1="3332" y1="1085" x2="3340" y2="1060" stroke="#333" stroke-width="2"/>
<line x1="3022" y1="800" x2="3022" y2="1150" stroke="#222" stroke-width="2.4" stroke-dasharray="10 6"/>
<path d="M2938 1137 L3402 1137" stroke="#3c3c3c" stroke-width="6" fill="none"/><path d="M2938 1137 L3402 1137" stroke="#c4c4c4" stroke-width="2.6" fill="none"/>
<text x="3031" y="828" font-size="8" text-anchor="middle" fill="#333">E1</text>
<text x="3101" y="905" font-size="8" text-anchor="middle" fill="#333">E2</text>
<text x="3219" y="860" font-size="8" text-anchor="middle" fill="#333">E3</text>
<text x="3251" y="880" font-size="8" text-anchor="middle" fill="#333">E4</text>
<text x="3345" y="874" font-size="8" text-anchor="middle" fill="#333">E5</text>
<text x="3164" y="925" font-size="8" text-anchor="middle" fill="#333">D1</text>
<text x="3200" y="948" font-size="8" text-anchor="middle" fill="#333">D2</text>
<text x="3049" y="1060" font-size="8" text-anchor="middle" fill="#333">A5</text>
<text x="3082" y="935" font-size="8" text-anchor="middle" fill="#333">C18</text>
<text x="3129" y="810" font-size="8" text-anchor="middle" fill="#333">C18</text>
<circle cx="3396" cy="804" r="4" fill="none" stroke="#333" stroke-width="2"/>
<circle cx="3396" cy="915" r="4" fill="none" stroke="#333" stroke-width="2"/>
<circle cx="3396" cy="1004" r="4" fill="none" stroke="#333" stroke-width="2"/>
<line x1="1041" y1="674" x2="1041" y2="1299" stroke="#555" stroke-width="1.8"/>
<path d="M1041 1299 H1172 V2094 H1332" stroke="#555" stroke-width="1.8" fill="none"/>
<path d="M1197 692 V1037 H1310 V796 H1322" stroke="#666" stroke-width="2" fill="none"/>
<line x1="1203" y1="692" x2="1203" y2="1037" stroke="#c0c0c0" stroke-width="5"/>
<path d="M1225 850 H1290 V1015 H1225Z" stroke="#555" stroke-width="1.6" fill="none" stroke-dasharray="6 4"/>
<text x="1258" y="895" font-size="7" text-anchor="middle" fill="#333">30 YD</text>
<text x="1258" y="905" font-size="7" text-anchor="middle" fill="#333">TRASH</text>
<text x="1258" y="915" font-size="7" text-anchor="middle" fill="#333">CONTAINER</text>
<text x="1258" y="925" font-size="7" text-anchor="middle" fill="#333">N.I.C.</text>
<text x="1234" y="800" font-size="7" text-anchor="middle" fill="#333" transform="rotate(-90 1234 800)">RAMP DOWN</text>
<line x1="1010" y1="722" x2="1045" y2="694" stroke="#cfcfcf" stroke-width="1.2"/>
<line x1="1010" y1="750" x2="1045" y2="722" stroke="#cfcfcf" stroke-width="1.2"/>
<line x1="1010" y1="778" x2="1045" y2="750" stroke="#cfcfcf" stroke-width="1.2"/>
<line x1="1010" y1="806" x2="1045" y2="778" stroke="#cfcfcf" stroke-width="1.2"/>
<line x1="1010" y1="834" x2="1045" y2="806" stroke="#cfcfcf" stroke-width="1.2"/>
<line x1="1010" y1="862" x2="1045" y2="834" stroke="#cfcfcf" stroke-width="1.2"/>
<line x1="1010" y1="890" x2="1045" y2="862" stroke="#cfcfcf" stroke-width="1.2"/>
<line x1="1010" y1="918" x2="1045" y2="890" stroke="#cfcfcf" stroke-width="1.2"/>
<line x1="1010" y1="946" x2="1045" y2="918" stroke="#cfcfcf" stroke-width="1.2"/>
<line x1="1010" y1="974" x2="1045" y2="946" stroke="#cfcfcf" stroke-width="1.2"/>
<line x1="1010" y1="1002" x2="1045" y2="974" stroke="#cfcfcf" stroke-width="1.2"/>
<line x1="1010" y1="1030" x2="1045" y2="1002" stroke="#cfcfcf" stroke-width="1.2"/>
<line x1="1010" y1="1058" x2="1045" y2="1030" stroke="#cfcfcf" stroke-width="1.2"/>
<line x1="1010" y1="1086" x2="1045" y2="1058" stroke="#cfcfcf" stroke-width="1.2"/>
<line x1="1010" y1="1114" x2="1045" y2="1086" stroke="#cfcfcf" stroke-width="1.2"/>
<line x1="1010" y1="1142" x2="1045" y2="1114" stroke="#cfcfcf" stroke-width="1.2"/>
<line x1="1010" y1="1170" x2="1045" y2="1142" stroke="#cfcfcf" stroke-width="1.2"/>
<line x1="1010" y1="1198" x2="1045" y2="1170" stroke="#cfcfcf" stroke-width="1.2"/>
<line x1="1010" y1="1226" x2="1045" y2="1198" stroke="#cfcfcf" stroke-width="1.2"/>
<line x1="1010" y1="1254" x2="1045" y2="1226" stroke="#cfcfcf" stroke-width="1.2"/>
<line x1="1010" y1="1282" x2="1045" y2="1254" stroke="#cfcfcf" stroke-width="1.2"/>
<line x1="1010" y1="1310" x2="1045" y2="1282" stroke="#cfcfcf" stroke-width="1.2"/>
<line x1="1010" y1="1338" x2="1045" y2="1310" stroke="#cfcfcf" stroke-width="1.2"/>
<line x1="1010" y1="1366" x2="1045" y2="1338" stroke="#cfcfcf" stroke-width="1.2"/>
<line x1="1010" y1="1394" x2="1045" y2="1366" stroke="#cfcfcf" stroke-width="1.2"/>
<line x1="1010" y1="1422" x2="1045" y2="1394" stroke="#cfcfcf" stroke-width="1.2"/>
<line x1="1010" y1="1450" x2="1045" y2="1422" stroke="#cfcfcf" stroke-width="1.2"/>
<line x1="1010" y1="1478" x2="1045" y2="1450" stroke="#cfcfcf" stroke-width="1.2"/>
<line x1="1010" y1="1506" x2="1045" y2="1478" stroke="#cfcfcf" stroke-width="1.2"/>
<line x1="1010" y1="1534" x2="1045" y2="1506" stroke="#cfcfcf" stroke-width="1.2"/>
<line x1="1010" y1="1562" x2="1045" y2="1534" stroke="#cfcfcf" stroke-width="1.2"/>
<line x1="1010" y1="1590" x2="1045" y2="1562" stroke="#cfcfcf" stroke-width="1.2"/>
<line x1="1010" y1="1618" x2="1045" y2="1590" stroke="#cfcfcf" stroke-width="1.2"/>
<line x1="1010" y1="1646" x2="1045" y2="1618" stroke="#cfcfcf" stroke-width="1.2"/>
<line x1="1010" y1="1674" x2="1045" y2="1646" stroke="#cfcfcf" stroke-width="1.2"/>
<line x1="1010" y1="1702" x2="1045" y2="1674" stroke="#cfcfcf" stroke-width="1.2"/>
<line x1="1010" y1="1730" x2="1045" y2="1702" stroke="#cfcfcf" stroke-width="1.2"/>
<line x1="1010" y1="1758" x2="1045" y2="1730" stroke="#cfcfcf" stroke-width="1.2"/>
<line x1="1010" y1="1786" x2="1045" y2="1758" stroke="#cfcfcf" stroke-width="1.2"/>
<line x1="1010" y1="1814" x2="1045" y2="1786" stroke="#cfcfcf" stroke-width="1.2"/>
<path d="M1450 674 L1483 747" stroke="#555" stroke-width="1.6" fill="none"/>
<path d="M1456 674 L1489 747" stroke="#555" stroke-width="1.6" fill="none"/>
<path d="M1507 674 V757 M1511 674 V757 M1649 674 V757 M1653 674 V757 M1510 758 H1649 M1653 758 H1760" stroke="#666" stroke-width="1.4" fill="none"/>
<path d="M1300 768 H1335 L1468 720" stroke="#555" stroke-width="1.4" fill="none"/>
<line x1="1041" y1="739" x2="3440" y2="739" stroke="#777" stroke-width="1"/>
<line x1="1060" y1="756" x2="3440" y2="756" stroke="#777" stroke-width="1"/>
<line x1="1504.0" y1="762" x2="1516.0" y2="750" stroke="#333" stroke-width="1.5"/>
<text x="1551.0" y="751" font-size="8" text-anchor="middle" fill="#333">10'-0"</text>
<line x1="1586.5" y1="762" x2="1598.5" y2="750" stroke="#333" stroke-width="1.5"/>
<text x="1633.5" y="751" font-size="8" text-anchor="middle" fill="#333">10'-0"</text>
<line x1="1669.0" y1="762" x2="1681.0" y2="750" stroke="#333" stroke-width="1.5"/>
<text x="1716.0" y="751" font-size="8" text-anchor="middle" fill="#333">10'-0"</text>
<line x1="1751.5" y1="762" x2="1763.5" y2="750" stroke="#333" stroke-width="1.5"/>
<text x="1798.5" y="751" font-size="8" text-anchor="middle" fill="#333">10'-0"</text>
<line x1="1834.0" y1="762" x2="1846.0" y2="750" stroke="#333" stroke-width="1.5"/>
<text x="1881.0" y="751" font-size="8" text-anchor="middle" fill="#333">10'-0"</text>
<line x1="1916.5" y1="762" x2="1928.5" y2="750" stroke="#333" stroke-width="1.5"/>
<text x="1963.5" y="751" font-size="8" text-anchor="middle" fill="#333">10'-0"</text>
<line x1="1999.0" y1="762" x2="2011.0" y2="750" stroke="#333" stroke-width="1.5"/>
<text x="2046.0" y="751" font-size="8" text-anchor="middle" fill="#333">10'-0"</text>
<line x1="2081.5" y1="762" x2="2093.5" y2="750" stroke="#333" stroke-width="1.5"/>
<text x="2128.5" y="751" font-size="8" text-anchor="middle" fill="#333">10'-0"</text>
<line x1="2164.0" y1="762" x2="2176.0" y2="750" stroke="#333" stroke-width="1.5"/>
<text x="2211.0" y="751" font-size="8" text-anchor="middle" fill="#333">10'-0"</text>
<line x1="2246.5" y1="762" x2="2258.5" y2="750" stroke="#333" stroke-width="1.5"/>
<text x="2293.5" y="751" font-size="8" text-anchor="middle" fill="#333">10'-0"</text>
<line x1="2329.0" y1="762" x2="2341.0" y2="750" stroke="#333" stroke-width="1.5"/>
<text x="2376.0" y="751" font-size="8" text-anchor="middle" fill="#333">10'-0"</text>
<line x1="2411.5" y1="762" x2="2423.5" y2="750" stroke="#333" stroke-width="1.5"/>
<text x="2458.5" y="751" font-size="8" text-anchor="middle" fill="#333">10'-0"</text>
<line x1="2494.0" y1="762" x2="2506.0" y2="750" stroke="#333" stroke-width="1.5"/>
<text x="2541.0" y="751" font-size="8" text-anchor="middle" fill="#333">10'-0"</text>
<line x1="2576.5" y1="762" x2="2588.5" y2="750" stroke="#333" stroke-width="1.5"/>
<text x="2623.5" y="751" font-size="8" text-anchor="middle" fill="#333">10'-0"</text>
<line x1="2659.0" y1="762" x2="2671.0" y2="750" stroke="#333" stroke-width="1.5"/>
<text x="2706.0" y="751" font-size="8" text-anchor="middle" fill="#333">10'-0"</text>
<line x1="2741.5" y1="762" x2="2753.5" y2="750" stroke="#333" stroke-width="1.5"/>
<text x="2788.5" y="751" font-size="8" text-anchor="middle" fill="#333">10'-0"</text>
<line x1="2824.0" y1="762" x2="2836.0" y2="750" stroke="#333" stroke-width="1.5"/>
<text x="2871.0" y="751" font-size="8" text-anchor="middle" fill="#333">10'-0"</text>
<line x1="2906.5" y1="762" x2="2918.5" y2="750" stroke="#333" stroke-width="1.5"/>
<text x="2953.5" y="751" font-size="8" text-anchor="middle" fill="#333">10'-0"</text>
<line x1="2989.0" y1="762" x2="3001.0" y2="750" stroke="#333" stroke-width="1.5"/>
<line x1="1052" y1="762" x2="1064" y2="750" stroke="#333" stroke-width="1.5"/>
<line x1="1191" y1="762" x2="1203" y2="750" stroke="#333" stroke-width="1.5"/>
<line x1="1315" y1="762" x2="1327" y2="750" stroke="#333" stroke-width="1.5"/>
<line x1="1340" y1="762" x2="1352" y2="750" stroke="#333" stroke-width="1.5"/>
<line x1="1422" y1="762" x2="1434" y2="750" stroke="#333" stroke-width="1.5"/>
<line x1="2999" y1="762" x2="3011" y2="750" stroke="#333" stroke-width="1.5"/>
<line x1="3187" y1="762" x2="3199" y2="750" stroke="#333" stroke-width="1.5"/>
<line x1="3398" y1="762" x2="3410" y2="750" stroke="#333" stroke-width="1.5"/>
<line x1="1035" y1="745" x2="1047" y2="733" stroke="#333" stroke-width="1.5"/>
<line x1="1191" y1="745" x2="1203" y2="733" stroke="#333" stroke-width="1.5"/>
<line x1="1315" y1="745" x2="1327" y2="733" stroke="#333" stroke-width="1.5"/>
<line x1="1340" y1="745" x2="1352" y2="733" stroke="#333" stroke-width="1.5"/>
<line x1="1749" y1="745" x2="1761" y2="733" stroke="#333" stroke-width="1.5"/>
<line x1="2159" y1="745" x2="2171" y2="733" stroke="#333" stroke-width="1.5"/>
<line x1="2569" y1="745" x2="2581" y2="733" stroke="#333" stroke-width="1.5"/>
<line x1="2979" y1="745" x2="2991" y2="733" stroke="#333" stroke-width="1.5"/>
<line x1="3390" y1="745" x2="3402" y2="733" stroke="#333" stroke-width="1.5"/>
<text x="1129" y="733" font-size="9" text-anchor="middle" fill="#333">16'-8"</text>
<text x="1259" y="733" font-size="9" text-anchor="middle" fill="#333">14'-10"</text>
<text x="1331" y="733" font-size="9" text-anchor="middle" fill="#333">3'-0"</text>
<text x="1551" y="733" font-size="9" text-anchor="middle" fill="#333">49'-0"</text>
<text x="1961" y="733" font-size="9" text-anchor="middle" fill="#333">49'-0"</text>
<text x="1338" y="750" font-size="8" text-anchor="middle" fill="#333">1'-9"</text>
<text x="1428" y="750" font-size="8" text-anchor="middle" fill="#333">20'-0"</text>
<text x="1160" y="716" font-size="9" text-anchor="middle" fill="#333">35'-4"</text>
<line x1="1248" y1="769" x2="1322" y2="769" stroke="#888" stroke-width="1"/>
<path d="M2928 760 H3293 V783 H3360 V760 H3435 V783 H3472" stroke="#555" stroke-width="1.4" fill="none"/>
<text x="3190" y="733" font-size="9" text-anchor="middle" fill="#333">49' - 0"</text>
<text x="3097" y="750" font-size="9" text-anchor="middle" fill="#333">22' - 4"</text>
<text x="3399" y="733" font-size="9" text-anchor="middle" fill="#333">1' - 5"</text>
<text x="3030" y="770" font-size="8" text-anchor="middle" fill="#333">8' - 1 3/16"</text>
<rect x="2103" y="717" width="822" height="46" fill="#fafafa" stroke="#111" stroke-width="3"/>
<line x1="1332" y1="2190" x2="3440" y2="2190" stroke="#777" stroke-width="1"/>
<line x1="1332" y1="2150" x2="1332" y2="2200" stroke="#777" stroke-width="1"/>
<line x1="1339.0" y1="2196" x2="1351.0" y2="2184" stroke="#333" stroke-width="1.6"/>
<line x1="1345.0" y1="2150" x2="1345.0" y2="2198" stroke="#aaa" stroke-width="0.8"/>
<text x="1386.0" y="2186" font-size="8" text-anchor="middle" fill="#333">10'-0"</text>
<line x1="1421.9" y1="2196" x2="1433.9" y2="2184" stroke="#333" stroke-width="1.6"/>
<line x1="1427.9" y1="2150" x2="1427.9" y2="2198" stroke="#aaa" stroke-width="0.8"/>
<text x="1468.9" y="2186" font-size="8" text-anchor="middle" fill="#333">10'-0"</text>
<line x1="1504.8" y1="2196" x2="1516.8" y2="2184" stroke="#333" stroke-width="1.6"/>
<line x1="1510.8" y1="2150" x2="1510.8" y2="2198" stroke="#aaa" stroke-width="0.8"/>
<text x="1551.8" y="2186" font-size="8" text-anchor="middle" fill="#333">10'-0"</text>
<line x1="1587.7" y1="2196" x2="1599.7" y2="2184" stroke="#333" stroke-width="1.6"/>
<line x1="1593.7" y1="2150" x2="1593.7" y2="2198" stroke="#aaa" stroke-width="0.8"/>
<text x="1634.7" y="2186" font-size="8" text-anchor="middle" fill="#333">10'-0"</text>
<line x1="1670.6" y1="2196" x2="1682.6" y2="2184" stroke="#333" stroke-width="1.6"/>
<line x1="1676.6" y1="2150" x2="1676.6" y2="2198" stroke="#aaa" stroke-width="0.8"/>
<text x="1717.6" y="2186" font-size="8" text-anchor="middle" fill="#333">10'-0"</text>
<line x1="1753.5" y1="2196" x2="1765.5" y2="2184" stroke="#333" stroke-width="1.6"/>
<line x1="1759.5" y1="2150" x2="1759.5" y2="2198" stroke="#aaa" stroke-width="0.8"/>
<text x="1800.5" y="2186" font-size="8" text-anchor="middle" fill="#333">10'-0"</text>
<line x1="1836.4" y1="2196" x2="1848.4" y2="2184" stroke="#333" stroke-width="1.6"/>
<line x1="1842.4" y1="2150" x2="1842.4" y2="2198" stroke="#aaa" stroke-width="0.8"/>
<text x="1883.4" y="2186" font-size="8" text-anchor="middle" fill="#333">10'-0"</text>
<line x1="1919.3000000000002" y1="2196" x2="1931.3000000000002" y2="2184" stroke="#333" stroke-width="1.6"/>
<line x1="1925.3000000000002" y1="2150" x2="1925.3000000000002" y2="2198" stroke="#aaa" stroke-width="0.8"/>
<text x="1966.3000000000002" y="2186" font-size="8" text-anchor="middle" fill="#333">10'-0"</text>
<line x1="2002.2" y1="2196" x2="2014.2" y2="2184" stroke="#333" stroke-width="1.6"/>
<line x1="2008.2" y1="2150" x2="2008.2" y2="2198" stroke="#aaa" stroke-width="0.8"/>
<text x="2049.2" y="2186" font-size="8" text-anchor="middle" fill="#333">10'-0"</text>
<line x1="2085.1" y1="2196" x2="2097.1" y2="2184" stroke="#333" stroke-width="1.6"/>
<line x1="2091.1" y1="2150" x2="2091.1" y2="2198" stroke="#aaa" stroke-width="0.8"/>
<text x="2132.1" y="2186" font-size="8" text-anchor="middle" fill="#333">10'-0"</text>
<line x1="2168.0" y1="2196" x2="2180.0" y2="2184" stroke="#333" stroke-width="1.6"/>
<line x1="2174.0" y1="2150" x2="2174.0" y2="2198" stroke="#aaa" stroke-width="0.8"/>
<text x="2215.0" y="2186" font-size="8" text-anchor="middle" fill="#333">10'-0"</text>
<line x1="2250.9" y1="2196" x2="2262.9" y2="2184" stroke="#333" stroke-width="1.6"/>
<line x1="2256.9" y1="2150" x2="2256.9" y2="2198" stroke="#aaa" stroke-width="0.8"/>
<text x="2297.9" y="2186" font-size="8" text-anchor="middle" fill="#333">10'-0"</text>
<line x1="2333.8" y1="2196" x2="2345.8" y2="2184" stroke="#333" stroke-width="1.6"/>
<line x1="2339.8" y1="2150" x2="2339.8" y2="2198" stroke="#aaa" stroke-width="0.8"/>
<text x="2380.8" y="2186" font-size="8" text-anchor="middle" fill="#333">10'-0"</text>
<line x1="2416.7" y1="2196" x2="2428.7" y2="2184" stroke="#333" stroke-width="1.6"/>
<line x1="2422.7" y1="2150" x2="2422.7" y2="2198" stroke="#aaa" stroke-width="0.8"/>
<text x="2463.7" y="2186" font-size="8" text-anchor="middle" fill="#333">10'-0"</text>
<line x1="2499.6000000000004" y1="2196" x2="2511.6000000000004" y2="2184" stroke="#333" stroke-width="1.6"/>
<line x1="2505.6000000000004" y1="2150" x2="2505.6000000000004" y2="2198" stroke="#aaa" stroke-width="0.8"/>
<text x="2546.6000000000004" y="2186" font-size="8" text-anchor="middle" fill="#333">10'-0"</text>
<line x1="2582.5" y1="2196" x2="2594.5" y2="2184" stroke="#333" stroke-width="1.6"/>
<line x1="2588.5" y1="2150" x2="2588.5" y2="2198" stroke="#aaa" stroke-width="0.8"/>
<text x="2629.5" y="2186" font-size="8" text-anchor="middle" fill="#333">10'-0"</text>
<line x1="2665.4" y1="2196" x2="2677.4" y2="2184" stroke="#333" stroke-width="1.6"/>
<line x1="2671.4" y1="2150" x2="2671.4" y2="2198" stroke="#aaa" stroke-width="0.8"/>
<text x="2712.4" y="2186" font-size="8" text-anchor="middle" fill="#333">10'-0"</text>
<line x1="2748.3" y1="2196" x2="2760.3" y2="2184" stroke="#333" stroke-width="1.6"/>
<line x1="2754.3" y1="2150" x2="2754.3" y2="2198" stroke="#aaa" stroke-width="0.8"/>
<text x="2795.3" y="2186" font-size="8" text-anchor="middle" fill="#333">10'-0"</text>
<line x1="2831.2" y1="2196" x2="2843.2" y2="2184" stroke="#333" stroke-width="1.6"/>
<line x1="2837.2" y1="2150" x2="2837.2" y2="2198" stroke="#aaa" stroke-width="0.8"/>
<text x="2878.2" y="2186" font-size="8" text-anchor="middle" fill="#333">10'-0"</text>
<line x1="2914.1000000000004" y1="2196" x2="2926.1000000000004" y2="2184" stroke="#333" stroke-width="1.6"/>
<line x1="2920.1000000000004" y1="2150" x2="2920.1000000000004" y2="2198" stroke="#aaa" stroke-width="0.8"/>
<text x="2961.1000000000004" y="2186" font-size="8" text-anchor="middle" fill="#333">10'-0"</text>
<line x1="2997.0" y1="2196" x2="3009.0" y2="2184" stroke="#333" stroke-width="1.6"/>
<line x1="3003.0" y1="2150" x2="3003.0" y2="2198" stroke="#aaa" stroke-width="0.8"/>
<text x="3044.0" y="2186" font-size="8" text-anchor="middle" fill="#333">10'-0"</text>
<line x1="3079.9" y1="2196" x2="3091.9" y2="2184" stroke="#333" stroke-width="1.6"/>
<line x1="3085.9" y1="2150" x2="3085.9" y2="2198" stroke="#aaa" stroke-width="0.8"/>
<text x="3126.9" y="2186" font-size="8" text-anchor="middle" fill="#333">10'-0"</text>
<line x1="3162.8" y1="2196" x2="3174.8" y2="2184" stroke="#333" stroke-width="1.6"/>
<line x1="3168.8" y1="2150" x2="3168.8" y2="2198" stroke="#aaa" stroke-width="0.8"/>
<text x="3209.8" y="2186" font-size="8" text-anchor="middle" fill="#333">10'-0"</text>
<line x1="3245.7" y1="2196" x2="3257.7" y2="2184" stroke="#333" stroke-width="1.6"/>
<line x1="3251.7" y1="2150" x2="3251.7" y2="2198" stroke="#aaa" stroke-width="0.8"/>
<text x="3292.7" y="2186" font-size="8" text-anchor="middle" fill="#333">10'-0"</text>
<line x1="3328.6000000000004" y1="2196" x2="3340.6000000000004" y2="2184" stroke="#333" stroke-width="1.6"/>
<line x1="3334.6000000000004" y1="2150" x2="3334.6000000000004" y2="2198" stroke="#aaa" stroke-width="0.8"/>
<line x1="3390" y1="2196" x2="3402" y2="2184" stroke="#333" stroke-width="1.6"/>
<line x1="3398" y1="2196" x2="3410" y2="2184" stroke="#333" stroke-width="1.6"/>
<text x="3365" y="2186" font-size="8" text-anchor="middle" fill="#333">7'-6"</text>
<text x="3402" y="2178" font-size="7" text-anchor="middle" fill="#333">1'-6"</text>
<line x1="1293" y1="800" x2="1293" y2="2160" stroke="#777" stroke-width="1"/>
<line x1="1287" y1="798" x2="1299" y2="810" stroke="#333" stroke-width="1.6"/>
<line x1="1250" y1="804" x2="1330" y2="804" stroke="#aaa" stroke-width="0.8"/>
<text x="1285" y="845" font-size="8" text-anchor="middle" fill="#333" transform="rotate(-90 1285 845)">10'-0"</text>
<line x1="1287" y1="880" x2="1299" y2="892" stroke="#333" stroke-width="1.6"/>
<line x1="1250" y1="886" x2="1330" y2="886" stroke="#aaa" stroke-width="0.8"/>
<text x="1285" y="927" font-size="8" text-anchor="middle" fill="#333" transform="rotate(-90 1285 927)">10'-0"</text>
<line x1="1287" y1="962" x2="1299" y2="974" stroke="#333" stroke-width="1.6"/>
<line x1="1250" y1="968" x2="1330" y2="968" stroke="#aaa" stroke-width="0.8"/>
<text x="1285" y="1009" font-size="8" text-anchor="middle" fill="#333" transform="rotate(-90 1285 1009)">10'-0"</text>
<line x1="1287" y1="1044" x2="1299" y2="1056" stroke="#333" stroke-width="1.6"/>
<line x1="1250" y1="1050" x2="1330" y2="1050" stroke="#aaa" stroke-width="0.8"/>
<text x="1285" y="1091" font-size="8" text-anchor="middle" fill="#333" transform="rotate(-90 1285 1091)">10'-0"</text>
<line x1="1287" y1="1126" x2="1299" y2="1138" stroke="#333" stroke-width="1.6"/>
<line x1="1250" y1="1132" x2="1330" y2="1132" stroke="#aaa" stroke-width="0.8"/>
<text x="1285" y="1173" font-size="8" text-anchor="middle" fill="#333" transform="rotate(-90 1285 1173)">10'-0"</text>
<line x1="1287" y1="1208" x2="1299" y2="1220" stroke="#333" stroke-width="1.6"/>
<line x1="1250" y1="1214" x2="1330" y2="1214" stroke="#aaa" stroke-width="0.8"/>
<text x="1285" y="1255" font-size="8" text-anchor="middle" fill="#333" transform="rotate(-90 1285 1255)">10'-0"</text>
<line x1="1287" y1="1290" x2="1299" y2="1302" stroke="#333" stroke-width="1.6"/>
<line x1="1250" y1="1296" x2="1330" y2="1296" stroke="#aaa" stroke-width="0.8"/>
<text x="1285" y="1337" font-size="8" text-anchor="middle" fill="#333" transform="rotate(-90 1285 1337)">10'-0"</text>
<line x1="1287" y1="1372" x2="1299" y2="1384" stroke="#333" stroke-width="1.6"/>
<line x1="1250" y1="1378" x2="1330" y2="1378" stroke="#aaa" stroke-width="0.8"/>
<text x="1285" y="1419" font-size="8" text-anchor="middle" fill="#333" transform="rotate(-90 1285 1419)">10'-0"</text>
<line x1="1287" y1="1454" x2="1299" y2="1466" stroke="#333" stroke-width="1.6"/>
<line x1="1250" y1="1460" x2="1330" y2="1460" stroke="#aaa" stroke-width="0.8"/>
<text x="1285" y="1501" font-size="8" text-anchor="middle" fill="#333" transform="rotate(-90 1285 1501)">10'-0"</text>
<line x1="1287" y1="1536" x2="1299" y2="1548" stroke="#333" stroke-width="1.6"/>
<line x1="1250" y1="1542" x2="1330" y2="1542" stroke="#aaa" stroke-width="0.8"/>
<text x="1285" y="1583" font-size="8" text-anchor="middle" fill="#333" transform="rotate(-90 1285 1583)">10'-0"</text>
<line x1="1287" y1="1618" x2="1299" y2="1630" stroke="#333" stroke-width="1.6"/>
<line x1="1250" y1="1624" x2="1330" y2="1624" stroke="#aaa" stroke-width="0.8"/>
<text x="1285" y="1665" font-size="8" text-anchor="middle" fill="#333" transform="rotate(-90 1285 1665)">10'-0"</text>
<line x1="1287" y1="1700" x2="1299" y2="1712" stroke="#333" stroke-width="1.6"/>
<line x1="1250" y1="1706" x2="1330" y2="1706" stroke="#aaa" stroke-width="0.8"/>
<text x="1285" y="1747" font-size="8" text-anchor="middle" fill="#333" transform="rotate(-90 1285 1747)">10'-0"</text>
<line x1="1287" y1="1782" x2="1299" y2="1794" stroke="#333" stroke-width="1.6"/>
<line x1="1250" y1="1788" x2="1330" y2="1788" stroke="#aaa" stroke-width="0.8"/>
<text x="1285" y="1829" font-size="8" text-anchor="middle" fill="#333" transform="rotate(-90 1285 1829)">10'-0"</text>
<line x1="1287" y1="1864" x2="1299" y2="1876" stroke="#333" stroke-width="1.6"/>
<line x1="1250" y1="1870" x2="1330" y2="1870" stroke="#aaa" stroke-width="0.8"/>
<text x="1285" y="1911" font-size="8" text-anchor="middle" fill="#333" transform="rotate(-90 1285 1911)">10'-0"</text>
<line x1="1287" y1="1946" x2="1299" y2="1958" stroke="#333" stroke-width="1.6"/>
<line x1="1250" y1="1952" x2="1330" y2="1952" stroke="#aaa" stroke-width="0.8"/>
<text x="1285" y="1993" font-size="8" text-anchor="middle" fill="#333" transform="rotate(-90 1285 1993)">10'-0"</text>
<line x1="1287" y1="2028" x2="1299" y2="2040" stroke="#333" stroke-width="1.6"/>
<line x1="1250" y1="2034" x2="1330" y2="2034" stroke="#aaa" stroke-width="0.8"/>
<text x="1285" y="2075" font-size="8" text-anchor="middle" fill="#333" transform="rotate(-90 1285 2075)">10'-0"</text>
<line x1="1287" y1="2110" x2="1299" y2="2122" stroke="#333" stroke-width="1.6"/>
<line x1="1250" y1="2116" x2="1330" y2="2116" stroke="#aaa" stroke-width="0.8"/>
<line x1="3441" y1="887" x2="3441" y2="2180" stroke="#999" stroke-width="1.2"/>
<line x1="3459" y1="880" x2="3459" y2="2150" stroke="#888" stroke-width="1"/>
<line x1="3454" y1="877" x2="3466" y2="889" stroke="#333" stroke-width="1.6"/>
<line x1="3406" y1="883" x2="3466" y2="883" stroke="#aaa" stroke-width="0.8"/>
<text x="3451" y="924" font-size="8" text-anchor="middle" fill="#333" transform="rotate(-90 3451 924)">10'-0"</text>
<line x1="3454" y1="959" x2="3466" y2="971" stroke="#333" stroke-width="1.6"/>
<line x1="3406" y1="965" x2="3466" y2="965" stroke="#aaa" stroke-width="0.8"/>
<text x="3451" y="1006" font-size="8" text-anchor="middle" fill="#333" transform="rotate(-90 3451 1006)">10'-0"</text>
<line x1="3454" y1="1041" x2="3466" y2="1053" stroke="#333" stroke-width="1.6"/>
<line x1="3406" y1="1047" x2="3466" y2="1047" stroke="#aaa" stroke-width="0.8"/>
<text x="3451" y="1088" font-size="8" text-anchor="middle" fill="#333" transform="rotate(-90 3451 1088)">10'-0"</text>
<line x1="3454" y1="1123" x2="3466" y2="1135" stroke="#333" stroke-width="1.6"/>
<line x1="3406" y1="1129" x2="3466" y2="1129" stroke="#aaa" stroke-width="0.8"/>
<text x="3451" y="1170" font-size="8" text-anchor="middle" fill="#333" transform="rotate(-90 3451 1170)">10'-0"</text>
<line x1="3454" y1="1205" x2="3466" y2="1217" stroke="#333" stroke-width="1.6"/>
<line x1="3406" y1="1211" x2="3466" y2="1211" stroke="#aaa" stroke-width="0.8"/>
<text x="3451" y="1252" font-size="8" text-anchor="middle" fill="#333" transform="rotate(-90 3451 1252)">10'-0"</text>
<line x1="3454" y1="1287" x2="3466" y2="1299" stroke="#333" stroke-width="1.6"/>
<line x1="3406" y1="1293" x2="3466" y2="1293" stroke="#aaa" stroke-width="0.8"/>
<text x="3451" y="1334" font-size="8" text-anchor="middle" fill="#333" transform="rotate(-90 3451 1334)">10'-0"</text>
<line x1="3454" y1="1369" x2="3466" y2="1381" stroke="#333" stroke-width="1.6"/>
<line x1="3406" y1="1375" x2="3466" y2="1375" stroke="#aaa" stroke-width="0.8"/>
<text x="3451" y="1416" font-size="8" text-anchor="middle" fill="#333" transform="rotate(-90 3451 1416)">10'-0"</text>
<line x1="3454" y1="1451" x2="3466" y2="1463" stroke="#333" stroke-width="1.6"/>
<line x1="3406" y1="1457" x2="3466" y2="1457" stroke="#aaa" stroke-width="0.8"/>
<text x="3451" y="1498" font-size="8" text-anchor="middle" fill="#333" transform="rotate(-90 3451 1498)">10'-0"</text>
<line x1="3454" y1="1533" x2="3466" y2="1545" stroke="#333" stroke-width="1.6"/>
<line x1="3406" y1="1539" x2="3466" y2="1539" stroke="#aaa" stroke-width="0.8"/>
<text x="3451" y="1580" font-size="8" text-anchor="middle" fill="#333" transform="rotate(-90 3451 1580)">10'-0"</text>
<line x1="3454" y1="1615" x2="3466" y2="1627" stroke="#333" stroke-width="1.6"/>
<line x1="3406" y1="1621" x2="3466" y2="1621" stroke="#aaa" stroke-width="0.8"/>
<text x="3451" y="1662" font-size="8" text-anchor="middle" fill="#333" transform="rotate(-90 3451 1662)">10'-0"</text>
<line x1="3454" y1="1697" x2="3466" y2="1709" stroke="#333" stroke-width="1.6"/>
<line x1="3406" y1="1703" x2="3466" y2="1703" stroke="#aaa" stroke-width="0.8"/>
<text x="3451" y="1744" font-size="8" text-anchor="middle" fill="#333" transform="rotate(-90 3451 1744)">10'-0"</text>
<line x1="3454" y1="1779" x2="3466" y2="1791" stroke="#333" stroke-width="1.6"/>
<line x1="3406" y1="1785" x2="3466" y2="1785" stroke="#aaa" stroke-width="0.8"/>
<text x="3451" y="1826" font-size="8" text-anchor="middle" fill="#333" transform="rotate(-90 3451 1826)">10'-0"</text>
<line x1="3454" y1="1861" x2="3466" y2="1873" stroke="#333" stroke-width="1.6"/>
<line x1="3406" y1="1867" x2="3466" y2="1867" stroke="#aaa" stroke-width="0.8"/>
<text x="3451" y="1908" font-size="8" text-anchor="middle" fill="#333" transform="rotate(-90 3451 1908)">10'-0"</text>
<line x1="3454" y1="1943" x2="3466" y2="1955" stroke="#333" stroke-width="1.6"/>
<line x1="3406" y1="1949" x2="3466" y2="1949" stroke="#aaa" stroke-width="0.8"/>
<text x="3451" y="1990" font-size="8" text-anchor="middle" fill="#333" transform="rotate(-90 3451 1990)">10'-0"</text>
<line x1="3454" y1="2025" x2="3466" y2="2037" stroke="#333" stroke-width="1.6"/>
<line x1="3406" y1="2031" x2="3466" y2="2031" stroke="#aaa" stroke-width="0.8"/>
<text x="3451" y="2072" font-size="8" text-anchor="middle" fill="#333" transform="rotate(-90 3451 2072)">10'-0"</text>
<line x1="3454" y1="2107" x2="3466" y2="2119" stroke="#333" stroke-width="1.6"/>
<line x1="3406" y1="2113" x2="3466" y2="2113" stroke="#aaa" stroke-width="0.8"/>
<path d="M3441 887 H3470" stroke="#888" stroke-width="1" fill="none"/>
<path d="M1245 2045 V2129" stroke="#e03a2a" stroke-width="5" fill="none"/>
<line x1="1239" y1="2045" x2="1251" y2="2045" stroke="#e03a2a" stroke-width="2"/>
<line x1="1239" y1="2129" x2="1251" y2="2129" stroke="#e03a2a" stroke-width="2"/>
<path d="M1345 2161 H1428" stroke="#e03a2a" stroke-width="4" fill="none"/>
<line x1="1345" y1="2153" x2="1345" y2="2169" stroke="#e03a2a" stroke-width="2"/>
<line x1="1428" y1="2153" x2="1428" y2="2169" stroke="#e03a2a" stroke-width="2"/>
<text x="1385" y="2150" font-size="7" text-anchor="middle" fill="#4455cc">10'-0"</text>
<circle cx="1197" cy="1467" r="4" fill="none" stroke="#333" stroke-width="2"/>
<circle cx="1197" cy="1672" r="4" fill="none" stroke="#333" stroke-width="2"/>
<circle cx="1197" cy="1880" r="4" fill="none" stroke="#333" stroke-width="2"/>
<circle cx="1197" cy="2086" r="4" fill="none" stroke="#333" stroke-width="2"/>
<path d="M1129 1840 H1178 V1874 H1129Z" stroke="#999" stroke-width="1" fill="none" stroke-dasharray="3 2"/>
<text x="1140" y="1853" font-size="8" text-anchor="start" fill="#333">AC</text>
<text x="1140" y="1864" font-size="8" text-anchor="start" fill="#333">UNIT</text>
<path d="M1040 1807 H1098 V1900 H1085 V2053 H1040" stroke="#bbb" stroke-width="1" fill="none"/>
<path d="M1050 1820 H1085 V2040 H1050Z" stroke="#ccc" stroke-width="1" fill="none"/>
<line x1="1052" y1="1940" x2="1083" y2="1940" stroke="#ccc" stroke-width="1"/>
<line x1="1052" y1="1948" x2="1083" y2="1948" stroke="#ccc" stroke-width="1"/>
<line x1="1052" y1="1956" x2="1083" y2="1956" stroke="#ccc" stroke-width="1"/>
<line x1="1052" y1="1964" x2="1083" y2="1964" stroke="#ccc" stroke-width="1"/>
<line x1="1052" y1="1972" x2="1083" y2="1972" stroke="#ccc" stroke-width="1"/>
<line x1="1052" y1="1980" x2="1083" y2="1980" stroke="#ccc" stroke-width="1"/>
<line x1="1052" y1="1988" x2="1083" y2="1988" stroke="#ccc" stroke-width="1"/>
<line x1="1052" y1="1996" x2="1083" y2="1996" stroke="#ccc" stroke-width="1"/>
<line x1="1052" y1="2004" x2="1083" y2="2004" stroke="#ccc" stroke-width="1"/>
<line x1="1052" y1="2012" x2="1083" y2="2012" stroke="#ccc" stroke-width="1"/>
<circle cx="1229" cy="1427" r="14" fill="#fafafa" stroke="#333" stroke-width="1.5"/><path d="M1243 1413 L1254 1427 L1243 1441" stroke="#222" stroke-width="2" fill="none"/><text x="1229" y="1424" font-size="7" text-anchor="middle" fill="#333">2</text><text x="1229" y="1434" font-size="6" text-anchor="middle" fill="#333">A302</text>
<text x="1385" y="1218" font-size="8" text-anchor="middle" fill="#333">108C</text>
<text x="1385" y="1930" font-size="8" text-anchor="middle" fill="#333">108D</text>
<text x="1385" y="2005" font-size="8" text-anchor="middle" fill="#333">108E</text>
<path d="M1345 1930 a25 25 0 0 0 -25 25" stroke="#666" stroke-width="1" fill="none"/>
<path d="M1345 2000 a25 25 0 0 1 -25 -25" stroke="#666" stroke-width="1" fill="none"/>
<text x="1400" y="1278" font-size="7.5" text-anchor="start" fill="#333">EYEWASH</text>
<text x="1400" y="1312" font-size="7.5" text-anchor="start" fill="#333">DRINKING FOUNTAINS</text>
<text x="1400" y="1323" font-size="7.5" text-anchor="start" fill="#333">(1 HIGH-FLOW)</text>
<text x="1390" y="1398" font-size="7.5" text-anchor="start" fill="#333">HANDWASH SINK</text>
<text x="1390" y="1422" font-size="7.5" text-anchor="start" fill="#333">F.E.C.</text>
<text x="2010" y="1198" font-size="7.5" text-anchor="start" fill="#333">MIN. SLOPE</text>
<text x="2010" y="1209" font-size="7.5" text-anchor="start" fill="#333">REQUIRED TO</text>
<text x="2010" y="1220" font-size="7.5" text-anchor="start" fill="#333">DRAIN, TYP.</text>
<text x="1985" y="1343" font-size="7.5" text-anchor="start" fill="#333">FLOOR DRAIN,</text>
<text x="1985" y="1354" font-size="7.5" text-anchor="start" fill="#333">TYP. EA. BAY</text>
<text x="2082" y="1412" font-size="7.5" text-anchor="start" fill="#333">FIRE</text>
<text x="2082" y="1425" font-size="7.5" text-anchor="start" fill="#333">EXTINGUISHE</text>
<text x="2082" y="1438" font-size="7.5" text-anchor="start" fill="#333">R CABINET</text>
<text x="2060" y="2112" font-size="7.5" text-anchor="start" fill="#333">F.E.C.</text>
<text x="2402" y="1168" font-size="7.5" text-anchor="start" fill="#333">EYEWASH</text>
<text x="2540" y="1168" font-size="7.5" text-anchor="start" fill="#333">HANDWASH SINK</text>
<text x="1936" y="1172" font-size="7.5" text-anchor="start" fill="#333">M08</text>
<text x="1445" y="1000" font-size="7.5" text-anchor="start" fill="#333">M08</text>
<text x="1400" y="1130" font-size="7.5" text-anchor="start" fill="#333">M08</text>
<text x="2200" y="1170" font-size="7.5" text-anchor="start" fill="#333">M08</text>
<text x="2965" y="1172" font-size="7.5" text-anchor="start" fill="#333">C10</text>
<text x="3352" y="1195" font-size="7.5" text-anchor="start" fill="#333">XC12.10</text>
<text x="2224" y="1347" font-size="8.5" text-anchor="middle" fill="#333" font-weight="700">MANUFACTURING</text>
<text x="2224" y="1360" font-size="8.5" text-anchor="middle" fill="#333" font-weight="700">FLOOR AREA</text>
<text x="2224" y="1372" font-size="7" text-anchor="middle" fill="#333">108</text>
<text x="2224" y="1384" font-size="7.5" text-anchor="middle" fill="#333">30889 SF</text>
<line x1="1325" y1="1274" x2="1392" y2="1274" stroke="#777" stroke-width="0.8"/>
<line x1="1325" y1="1400" x2="1385" y2="1400" stroke="#777" stroke-width="0.8"/>
<text x="1825" y="936" font-size="8" text-anchor="middle" fill="#333" font-weight="700">SHIPPING</text>
<text x="1825" y="948" font-size="7" text-anchor="middle" fill="#333">110</text>
<text x="1825" y="960" font-size="7" text-anchor="middle" fill="#333">3358 SF</text>
<text x="1700" y="900" font-size="8" text-anchor="middle" fill="#333">87' - 3 3/8" CLR.</text>
<text x="1650" y="960" font-size="8" text-anchor="middle" fill="#333" transform="rotate(-90 1650 960)">49' - 2 3/16" CLR.</text>
<line x1="1657" y1="800" x2="1657" y2="1135" stroke="#999" stroke-width="0.8"/>
<line x1="1342" y1="907" x2="2062" y2="907" stroke="#aaa" stroke-width="0.8"/>
<text x="1391" y="1027" font-size="8" text-anchor="middle" fill="#333">12' - 0"</text>
<text x="1461" y="1082" font-size="8" text-anchor="middle" fill="#333" transform="rotate(-90 1461 1082)">12' - 0"</text>
<text x="1515" y="1184" font-size="8.5" text-anchor="middle" fill="#333">16' - 0"</text>
<path d="M1437 1150 V1190 M1591 1150 V1190 M1437 1188 H1591" stroke="#666" stroke-width="1" fill="none"/>
<line x1="1431" y1="1194" x2="1443" y2="1182" stroke="#333" stroke-width="1.6"/>
<line x1="1585" y1="1194" x2="1597" y2="1182" stroke="#333" stroke-width="1.6"/>
<text x="1577" y="1139" font-size="8" text-anchor="middle" fill="#333">110A</text>
<text x="2138" y="917" font-size="8" text-anchor="middle" fill="#333" font-weight="700">STAIR</text>
<text x="2138" y="928" font-size="7" text-anchor="middle" fill="#333">108</text>
<text x="2217" y="974" font-size="8" text-anchor="middle" fill="#333" font-weight="700">ELECTRICAL</text>
<text x="2217" y="985" font-size="7" text-anchor="middle" fill="#333">114</text>
<text x="2217" y="996" font-size="7" text-anchor="middle" fill="#333">429 SF</text>
<text x="2329" y="821" font-size="8" text-anchor="middle" fill="#333" font-weight="700">FIRE RISER ROOM</text>
<text x="2329" y="832" font-size="7" text-anchor="middle" fill="#333">112</text>
<text x="2329" y="843" font-size="7" text-anchor="middle" fill="#333">94 SF</text>
<text x="2323" y="934" font-size="8" text-anchor="middle" fill="#333" font-weight="700">KITCHEN</text>
<text x="2323" y="945" font-size="7" text-anchor="middle" fill="#333">111</text>
<text x="2323" y="956" font-size="7" text-anchor="middle" fill="#333">246 SF</text>
<text x="2495" y="953" font-size="8" text-anchor="middle" fill="#333" font-weight="700">BREAK ROOM</text>
<text x="2495" y="964" font-size="7" text-anchor="middle" fill="#333">115</text>
<text x="2495" y="975" font-size="7" text-anchor="middle" fill="#333">905 SF</text>
<text x="2329" y="1069" font-size="8" text-anchor="middle" fill="#333" font-weight="700">DATA</text>
<text x="2329" y="1080" font-size="7" text-anchor="middle" fill="#333">113</text>
<text x="2329" y="1091" font-size="7" text-anchor="middle" fill="#333">194 SF</text>
<text x="2774" y="827" font-size="8" text-anchor="middle" fill="#333" font-weight="700">MEN</text>
<text x="2774" y="838" font-size="7" text-anchor="middle" fill="#333">107</text>
<text x="2774" y="849" font-size="7" text-anchor="middle" fill="#333">350 SF</text>
<text x="2716" y="982" font-size="8" text-anchor="middle" fill="#333" font-weight="700">WOMEN</text>
<text x="2716" y="993" font-size="7" text-anchor="middle" fill="#333">106</text>
<text x="2716" y="1004" font-size="7" text-anchor="middle" fill="#333">227 SF</text>
<text x="2730" y="1044" font-size="8" text-anchor="middle" fill="#333" font-weight="700">JANITOR</text>
<text x="2730" y="1055" font-size="7" text-anchor="middle" fill="#333">105</text>
<text x="2730" y="1066" font-size="7" text-anchor="middle" fill="#333">64 SF</text>
<text x="2817" y="1031" font-size="8" text-anchor="middle" fill="#333" font-weight="700">ELEV. EQUIP.</text>
<text x="2817" y="1042" font-size="7" text-anchor="middle" fill="#333">104</text>
<text x="2817" y="1053" font-size="7" text-anchor="middle" fill="#333">68 SF</text>
<text x="3112" y="1003" font-size="8" text-anchor="middle" fill="#333" font-weight="700">LOBBY</text>
<text x="3112" y="1014" font-size="7" text-anchor="middle" fill="#333">102</text>
<text x="3112" y="1025" font-size="7" text-anchor="middle" fill="#333">1204 SF</text>
<text x="3163" y="857" font-size="8" text-anchor="middle" fill="#333" font-weight="700">ENTRY</text>
<text x="3163" y="868" font-size="7" text-anchor="middle" fill="#333">101</text>
<text x="3163" y="879" font-size="7" text-anchor="middle" fill="#333">101 SF</text>
<text x="3315" y="987" font-size="8" text-anchor="middle" fill="#333" font-weight="700">CONFERENCE</text>
<text x="3315" y="998" font-size="7" text-anchor="middle" fill="#333">103</text>
<text x="3315" y="1009" font-size="7" text-anchor="middle" fill="#333">626 SF</text>
<path d="M2363 929 L2379 912 L2395 929 L2379 946Z" stroke="#222" stroke-width="3" fill="#fafafa"/>
<text x="2379" y="932" font-size="6" text-anchor="middle" fill="#333">A251</text>
<circle cx="2423" cy="798" r="10" fill="none" stroke="#222" stroke-width="3"/>
<circle cx="2456" cy="774" r="14" fill="#fafafa" stroke="#555" stroke-width="1.2"/><text x="2456" y="771" font-size="7" text-anchor="middle" fill="#333">A2</text><text x="2456" y="781" font-size="6" text-anchor="middle" fill="#333">A501</text>
<circle cx="2022" cy="857" r="14" fill="#fafafa" stroke="#555" stroke-width="1.2"/><text x="2022" y="854" font-size="7" text-anchor="middle" fill="#333">A1</text><text x="2022" y="864" font-size="6" text-anchor="middle" fill="#333">A451</text>
<circle cx="2813" cy="1192" r="15" fill="#fafafa" stroke="#555" stroke-width="1.2"/><text x="2813" y="1190" font-size="7" text-anchor="middle" fill="#333">2</text><text x="2813" y="1200" font-size="6" text-anchor="middle" fill="#333">A401</text>
<circle cx="3276" cy="1172" r="15" fill="#fafafa" stroke="#555" stroke-width="1.2"/><text x="3276" y="1170" font-size="7" text-anchor="middle" fill="#333">A2</text><text x="3276" y="1180" font-size="6" text-anchor="middle" fill="#333">A401</text>
<circle cx="3288" cy="965" r="15" fill="#fafafa" stroke="#555" stroke-width="1.2"/><text x="3288" y="962" font-size="7" text-anchor="middle" fill="#333">D2</text><text x="3288" y="972" font-size="6" text-anchor="middle" fill="#333">A451</text>
<path d="M3432 930 L3444 922 L3444 938Z" stroke="#222" stroke-width="1" fill="#222"/>
<path d="M3432 1075 L3444 1067 L3444 1083Z" stroke="#222" stroke-width="1" fill="#222"/>
<text x="3425" y="934" font-size="8" text-anchor="middle" fill="#333">D3</text>
<text x="3425" y="1079" font-size="8" text-anchor="middle" fill="#333">D4</text>
<circle cx="3040" cy="802" r="11" fill="#fafafa" stroke="#444" stroke-width="1.2"/><text x="3040" y="805" font-size="5" text-anchor="middle" fill="#333">A603</text>
<circle cx="3244" cy="848" r="11" fill="#fafafa" stroke="#444" stroke-width="1.2"/><text x="3244" y="851" font-size="5" text-anchor="middle" fill="#333">A603</text>
<circle cx="3345" cy="846" r="11" fill="#fafafa" stroke="#444" stroke-width="1.2"/><text x="3345" y="849" font-size="5" text-anchor="middle" fill="#333">A603</text>
<circle cx="3070" cy="907" r="11" fill="#fafafa" stroke="#444" stroke-width="1.2"/><text x="3070" y="910" font-size="5" text-anchor="middle" fill="#333">A603</text>
<circle cx="3169" cy="950" r="11" fill="#fafafa" stroke="#444" stroke-width="1.2"/><text x="3169" y="953" font-size="5" text-anchor="middle" fill="#333">A603</text>
<circle cx="3055" cy="1030" r="11" fill="#fafafa" stroke="#444" stroke-width="1.2"/><text x="3055" y="1033" font-size="5" text-anchor="middle" fill="#333">A603</text>
<circle cx="3450" cy="930" r="11" fill="#fafafa" stroke="#444" stroke-width="1.2"/><text x="3450" y="933" font-size="5" text-anchor="middle" fill="#333">A603</text>
<circle cx="3450" cy="1075" r="11" fill="#fafafa" stroke="#444" stroke-width="1.2"/><text x="3450" y="1078" font-size="5" text-anchor="middle" fill="#333">A603</text>
<text x="3259" y="686" font-size="8" text-anchor="start" fill="#333">EXTENT OF 2ND FLOOR</text>
<text x="3259" y="699" font-size="8" text-anchor="start" fill="#333">OVERHANG</text>
<text x="3237" y="796" font-size="8" text-anchor="start" fill="#333">BOARD FORMED CONCRETE,</text>
<text x="3237" y="809" font-size="8" text-anchor="start" fill="#333">BOTH SIDES, UP TO BOTTOM</text>
<text x="3237" y="822" font-size="8" text-anchor="start" fill="#333">OF MEZZANINE</text>
<text x="2962" y="1079" font-size="8" text-anchor="start" fill="#333">BOARD FORMED CONCRETE,</text>
<text x="2962" y="1092" font-size="8" text-anchor="start" fill="#333">UP TO BOTTOM OF</text>
<text x="2962" y="1105" font-size="8" text-anchor="start" fill="#333">MEZZANINE</text>
<line x1="3205" y1="687" x2="3177" y2="715" stroke="#777" stroke-width="1"/>
<line x1="3205" y1="687" x2="3255" y2="687" stroke="#777" stroke-width="1"/>
<circle cx="1173" cy="2236" r="18" fill="none" stroke="#888" stroke-width="1.2"/><line x1="1155" y1="2236" x2="1191" y2="2236" stroke="#888" stroke-width="1"/><line x1="1173" y1="2218" x2="1173" y2="2254" stroke="#888" stroke-width="1"/><line x1="1168" y1="2236" x2="1190" y2="2236" stroke="#222" stroke-width="3"/>
<text x="1205" y="2244" font-size="17" text-anchor="middle" fill="#222" transform="rotate(-90 1205 2244)">N</text>
<circle cx="1253" cy="2238" r="20" fill="#fafafa" stroke="#333" stroke-width="1.8"/><line x1="1233" y1="2238" x2="1273" y2="2238" stroke="#333" stroke-width="1.2"/><text x="1253" y="2234" font-size="12" text-anchor="middle" fill="#222" font-weight="700">1</text><text x="1253" y="2250" font-size="7" text-anchor="middle" fill="#333">A101</text>
<text x="1278" y="2232" font-size="13" text-anchor="start" fill="#222" font-weight="700">LEVEL 01</text>
<line x1="1274" y1="2237" x2="3444" y2="2237" stroke="#555" stroke-width="1.6"/>
<rect x="1276" y="2238" width="72" height="14" fill="#ea6a5e"/>
<text x="1312" y="2249" font-size="8" text-anchor="middle" fill="#b33">1/8" = 1'-0"</text>
<text x="976" y="2175" font-size="9" text-anchor="start" fill="#666" transform="rotate(90 976 2175)">1/10/2020 10:47:53 AM</text>
<text x="1000" y="2268" font-size="8" text-anchor="middle" fill="#777">A</text>
<text x="1001" y="781" font-size="9" text-anchor="middle" fill="#888">E</text>
<line x1="992" y1="786" x2="1010" y2="786" stroke="#bbb" stroke-width="0.8"/>
<text x="1001" y="1522" font-size="9" text-anchor="middle" fill="#888">C</text>
<line x1="992" y1="1527" x2="1010" y2="1527" stroke="#bbb" stroke-width="0.8"/>
<text x="1001" y="1892" font-size="9" text-anchor="middle" fill="#888">B</text>
<line x1="992" y1="1897" x2="1010" y2="1897" stroke="#bbb" stroke-width="0.8"/>
<text x="1358" y="414" font-size="8" text-anchor="middle" fill="#999">1</text>
<text x="1722" y="414" font-size="8" text-anchor="middle" fill="#999">2</text>
<text x="2086" y="414" font-size="8" text-anchor="middle" fill="#999">3</text>
<text x="2450" y="414" font-size="8" text-anchor="middle" fill="#999">4</text>
<text x="2815" y="414" font-size="8" text-anchor="middle" fill="#999">5</text>
<text x="3180" y="414" font-size="8" text-anchor="middle" fill="#999">6</text>
<line x1="3617" y1="355" x2="3617" y2="2300" stroke="#151515" stroke-width="2.4"/>
<text x="3264" y="444" font-size="14.3" text-anchor="middle" fill="#222" font-weight="700">GENERAL NOTE - FLOOR PLAN</text>
<line x1="3147" y1="449" x2="3380" y2="449" stroke="#444" stroke-width="1.2"/>
<text x="3105" y="467.0" font-size="8.7" text-anchor="start" fill="#1e1e1e">A.</text>
<text x="3120" y="467.0" font-size="8.7" text-anchor="start" fill="#1e1e1e">PLAN WALL DIMENSIONS ARE TO GRID LINE OR FACE OF WALL</text>
<text x="3120" y="480.4" font-size="8.7" text-anchor="start" fill="#1e1e1e">STRUCTURE. "CLEAR" DIMENSIONS ARE TO FACE OF WALL FINISH.</text>
<text x="3105" y="493.8" font-size="8.7" text-anchor="start" fill="#1e1e1e">B.</text>
<text x="3120" y="493.8" font-size="8.7" text-anchor="start" fill="#1e1e1e">FIELD VERIFY ALL EXISTING CONDITIONS AND THEIR COMPATIBILITY WITH</text>
<text x="3120" y="507.2" font-size="8.7" text-anchor="start" fill="#1e1e1e">NEW CONSTRUCTION PRIOR TO THE COMMENCEMENT OF WORK.</text>
<text x="3120" y="520.6" font-size="8.7" text-anchor="start" fill="#1e1e1e">COORDINATE DISCREPANCIES WITH ARCHITECT.</text>
<text x="3105" y="534.0" font-size="8.7" text-anchor="start" fill="#1e1e1e">C.</text>
<text x="3120" y="534.0" font-size="8.7" text-anchor="start" fill="#1e1e1e">DO NOT SCALE DRAWINGS.</text>
<text x="3105" y="547.4" font-size="8.7" text-anchor="start" fill="#1e1e1e">D.</text>
<text x="3120" y="547.4" font-size="8.7" text-anchor="start" fill="#1e1e1e">SEE CIVIL, STRUCTURAL, MECHANICAL AND ELECTRICAL DRAWINGS FOR</text>
<text x="3120" y="560.8" font-size="8.7" text-anchor="start" fill="#1e1e1e">MORE INFORMATION.</text>
<text x="3105" y="574.2" font-size="8.7" text-anchor="start" fill="#1e1e1e">E.</text>
<text x="3120" y="574.2" font-size="8.7" text-anchor="start" fill="#1e1e1e">SEE G SERIES SHEETS FOR WALL TYPES AND TYPICAL ACCESSIBILITY</text>
<text x="3120" y="587.6" font-size="8.7" text-anchor="start" fill="#1e1e1e">CLEARANCE AND COMPLIANCE REQUIREMENTS.</text>
<text x="3105" y="601.0" font-size="8.7" text-anchor="start" fill="#1e1e1e">F.</text>
<text x="3120" y="601.0" font-size="8.7" text-anchor="start" fill="#1e1e1e">PROVIDE BACKING BEHIND ALL SURFACE MOUNTED EQUIPMENT AND/OR</text>
<text x="3120" y="614.4" font-size="8.7" text-anchor="start" fill="#1e1e1e">FIXTURES.</text>
<text x="3181" y="412" font-size="8" text-anchor="middle" fill="#999">6</text>
<g transform="translate(3515 415)"><path d="M2 48 Q-6 20 30 8 Q62 0 70 20 Q74 40 40 58 Q10 70 2 48Z" fill="none" stroke="#2c6da0" stroke-width="6"/><rect x="22" y="26" width="10" height="30" fill="#2b4d6e"/><rect x="38" y="14" width="10" height="42" fill="#3a78b0"/><rect x="54" y="4" width="10" height="46" fill="#2b4d6e"/></g>
<text x="3465" y="510" font-size="44" fill="#3f5a6c" font-family="Liberation Sans" textLength="166" lengthAdjust="spacingAndGlyphs">construct</text>
<text x="3465" y="544" font-size="44" font-weight="700" fill="#2b4a5e" font-family="Liberation Sans" textLength="166" lengthAdjust="spacingAndGlyphs">connect</text>
<text x="3539" y="1510" font-size="54" font-weight="700" fill="#111" transform="rotate(-90 3539 1510)" textLength="618" lengthAdjust="spacingAndGlyphs">FLEX OFFICE/WAREHOUSE</text>
<text x="3497" y="1159" font-size="40" fill="#222" transform="rotate(-90 3497 1159)" textLength="267" lengthAdjust="spacingAndGlyphs">construct<tspan font-weight="700">connect</tspan></text>
<g transform="translate(3481 1179) rotate(-90)"><ellipse cx="0" cy="0" rx="16" ry="13" fill="none" stroke="#222" stroke-width="3.5"/><rect x="-7" y="-6" width="4" height="12" fill="#222"/><rect x="0" y="-11" width="4" height="17" fill="#222"/><rect x="7" y="-14" width="3" height="16" fill="#222"/></g>
<text x="3614" y="1403" font-size="21" font-weight="700" fill="#111" transform="rotate(-90 3614 1403)" textLength="511" lengthAdjust="spacingAndGlyphs">NOT FOR CONSTRUCTION, FOR TRAINING PURPOSES ONLY</text>
<text x="3478" y="1805" font-size="8" text-anchor="middle" fill="#777">#</text>
<text x="3518" y="1805" font-size="8" text-anchor="middle" fill="#777">Date</text>
<text x="3582" y="1805" font-size="8" text-anchor="middle" fill="#777">Revision</text>
<text x="3468" y="2015" font-size="23" font-weight="700" fill="#111">NOT FOR</text>
<text x="3468" y="2042" font-size="23" font-weight="700" fill="#111">CONSTRUCTION</text>
<text x="3468" y="2145" font-size="23" font-weight="700" fill="#111">LEVEL 01</text>
<text x="3468" y="2171" font-size="23" font-weight="700" fill="#111">FLOOR</text>
<text x="3468" y="2197" font-size="23" font-weight="700" fill="#111">PLAN</text>
<text x="3467" y="2294" font-size="50" font-weight="700" fill="#111" textLength="107" lengthAdjust="spacingAndGlyphs">A101</text>
</svg>
<div class="a" style="left:894px;top:376px;width:446px;height:60px;background:#000;color:#fff;font-size:35px;line-height:60px;padding-left:10px;white-space:nowrap">Return to Introduction Page</div>
<div class="a" style="left:2101px;top:2349px;font-size:25px;color:#222;white-space:nowrap">Measurement Type : Imperial</div>
<div class="a" style="left:3459px;top:2355px;font-size:38px;letter-spacing:1.1px;color:#b9b9b9;white-space:nowrap">Activate Windows</div>
<div class="a" style="left:3459px;top:2407px;font-size:29px;letter-spacing:0.4px;color:#b9b9b9;white-space:nowrap">Go to Settings to activate Windows.</div>
<div class="a" style="left:894px;top:2450px;width:34px;height:33px;background:#f4f4f4;border:1px solid #bbb"></div>
<svg class="a" style="left:898px;top:2454px" width="26" height="26"><path d="M4 22 L21 5 M9 5 H21 V17" fill="none" stroke="#222" stroke-width="3"/></svg>
<div class="a" style="left:4048px;top:355px;width:18px;height:2163px;background:linear-gradient(90deg,#e8e8e8,#a8a8a8)"></div>
<div class="a" style="left:4064px;top:355px;width:48px;height:2163px;background:#eef0f5;border-left:2px solid #555"></div>
<div class="a" style="left:4066px;top:357px;width:44px;height:54px;background:linear-gradient(#f5f5f5,#dcdcdc);border-bottom:2px solid #888"></div>
<svg class="a" style="left:4078px;top:376px" width="22" height="16"><path d="M9 1 L2 8 L9 15 M18 1 L11 8 L18 15" fill="none" stroke="#222" stroke-width="2.6"/></svg>
<div class="a" style="left:4071px;top:1632px;transform-origin:0 0;transform:rotate(-90deg);font-size:29.5px;letter-spacing:0.7px;line-height:34px;font-weight:700;color:#111;white-space:nowrap">Templates, Parts, Inputs</div>
<div class="a" style="left:4053px;top:1395px;width:5px;height:80px;background:repeating-linear-gradient(#fff 0 3px,#666 3px 7px)"></div>
<div class="a" style="left:0;top:2518px;width:4112px;height:46px;background:linear-gradient(#e3ecf8,#d3e1f3 50%,#c5d7ef);border-top:2px solid #a9bedc"></div>
<div class="a" style="left:0;top:2515px;width:878px;height:3px;background:#3c3c3c"></div>
<div class="a" style="left:1293px;top:2520px;width:73px;height:44px;background:linear-gradient(#c3d5ee,#9fbbe3)"></div>
<div class="a" style="left:3625px;top:2520px;width:129px;height:44px;background:linear-gradient(#c3d5ee,#9fbbe3)"></div>
<div class="a" style="left:407px;top:2520px;width:2px;height:44px;background:#a3b6d2"></div>
<div class="a" style="left:667px;top:2520px;width:2px;height:44px;background:#a3b6d2"></div>
<div class="a" style="left:1036px;top:2520px;width:2px;height:44px;background:#a3b6d2"></div>
<div class="a" style="left:1227px;top:2520px;width:2px;height:44px;background:#a3b6d2"></div>
<div class="a" style="left:1293px;top:2520px;width:2px;height:44px;background:#a3b6d2"></div>
<div class="a" style="left:1366px;top:2520px;width:2px;height:44px;background:#a3b6d2"></div>
<div class="a" style="left:1479px;top:2520px;width:2px;height:44px;background:#a3b6d2"></div>
<div class="a" style="left:1617px;top:2520px;width:2px;height:44px;background:#a3b6d2"></div>
<div class="a" style="left:1907px;top:2520px;width:2px;height:44px;background:#a3b6d2"></div>
<div class="a" style="left:3625px;top:2520px;width:2px;height:44px;background:#a3b6d2"></div>
<div class="a" style="left:3754px;top:2520px;width:2px;height:44px;background:#a3b6d2"></div>
<div class="a" style="left:10px;top:2528px;font-size:22px;color:#34518a;white-space:nowrap">Scale: 1/8" = 1' 0"</div>
<div class="a" style="left:673px;top:2528px;font-size:22px;color:#34518a;white-space:nowrap">6215.8, 4486.4</div>
<div class="a" style="left:1236px;top:2528px;font-size:22px;color:#34518a;white-space:nowrap">Snap</div>
<div class="a" style="left:1302px;top:2528px;font-size:22px;color:#34518a;white-space:nowrap">Ortho</div>
<div class="a" style="left:1377px;top:2528px;font-size:22px;color:#34518a;white-space:nowrap">FreeHand</div>
<div class="a" style="left:1487px;top:2528px;font-size:22px;color:#34518a;white-space:nowrap">Verify Points</div>
<div class="a" style="left:1912px;top:2528px;font-size:22px;color:#34518a;white-space:nowrap"><span style="letter-spacing:-0.28px">\Storages\Local\Jobs\Sample Project - Copy\Pages\Commerical Plan Set\Architectural\Level 01 Floor Plan - A101</span></div>
<div class="a" style="left:3641px;top:2528px;font-size:22px;color:#34518a;white-space:nowrap">AutoScroll</div>
<div class="a" style="left:3700px;top:2528px;width:408px;text-align:right;font-size:22px;color:#34518a;white-space:nowrap">Network Status: Connected</div>
<div class="a" style="left:0;top:2564px;width:4112px;height:94px;background:linear-gradient(90deg,#2b1e2b,#2c1e26 35%,#2e1c1c 55%,#361b15)"></div>
<svg class="a" style="left:1628px;top:2589px" width="48" height="48"><defs><linearGradient id="wl" x1="0" y1="0" x2="1" y2="1"><stop offset="0" stop-color="#7fd3ff"/><stop offset="1" stop-color="#1b8be0"/></linearGradient></defs><rect x="0" y="0" width="22.5" height="22.5" fill="url(#wl)"/><rect x="25.5" y="0" width="22.5" height="22.5" fill="url(#wl)"/><rect x="0" y="25.5" width="22.5" height="22.5" fill="url(#wl)"/><rect x="25.5" y="25.5" width="22.5" height="22.5" fill="url(#wl)"/></svg>
<div class="a" style="left:1703px;top:2580px;width:442px;height:64px;border-radius:32px;background:#4a3d36"></div>
<svg class="a" style="left:1724px;top:2597px" width="32" height="34"><circle cx="13" cy="13" r="10" fill="none" stroke="#eee" stroke-width="3"/><path d="M20 21 L29 31" stroke="#eee" stroke-width="3.5"/></svg>
<div class="a" style="left:1776px;top:2597px;font-size:28px;color:#e8e0dc">Search</div>
<svg class="a" style="left:2038px;top:2593px" width="50" height="46"><circle cx="16" cy="18" r="10" fill="none" stroke="#b8a6d8" stroke-width="4"/><circle cx="34" cy="30" r="10" fill="none" stroke="#b8a6d8" stroke-width="4"/></svg>
<svg class="a" style="left:2085px;top:2586px" width="52" height="56"><rect x="6" y="34" width="40" height="22" fill="#5a7a55"/><circle cx="26" cy="22" r="16" fill="#e8c09a"/><path d="M10 18 Q26 2 42 18 Q40 6 26 4 Q12 6 10 18Z" fill="#8a5a2a"/><path d="M20 50 L26 38 L32 50Z" fill="#fff"/></svg>
<svg class="a" style="left:2171px;top:2589px" width="48" height="46"><rect x="0" y="16" width="32" height="30" fill="#6a6a6a"/><rect x="14" y="0" width="34" height="32" fill="#f0f0f0"/><rect x="14" y="16" width="18" height="16" fill="#bdbdbd"/></svg>
<svg class="a" style="left:2259px;top:2590px" width="50" height="46"><path d="M0 2 H18 L22 8 H50 V46 H0Z" fill="#e8a93a"/><rect x="0" y="12" width="50" height="34" fill="#f7d15a"/><rect x="10" y="30" width="30" height="16" rx="2" fill="#1f74c9"/></svg>
<svg class="a" style="left:2351px;top:2590px" width="44" height="46"><path d="M8 10 Q22 -2 36 10 V34 Q22 46 8 34Z" fill="#7b5cd6"/><path d="M14 16 Q22 8 30 16 V30 Q22 38 14 30Z" fill="#2b1b19"/><path d="M22 0 L44 14 L30 20Z" fill="#3aa3f0"/><path d="M0 32 L14 26 L22 46Z" fill="#d04fb0"/></svg>
<div class="a" style="left:2425px;top:2572px;width:75px;height:80px;border-radius:6px;background:#3c2c28"></div>
<svg class="a" style="left:2440px;top:2588px" width="44" height="44"><circle cx="22" cy="22" r="21" fill="#dcdcdc"/><path d="M6 30 L18 16 L26 16 L14 30Z" fill="#555"/><path d="M22 24 L30 16 L38 24 L30 30Z" fill="#2f5f90"/></svg>
<div class="a" style="left:2446px;top:2642px;width:32px;height:6px;border-radius:3px;background:#d9a0e0"></div>
<svg class="a" style="left:3543px;top:2602px" width="26" height="16"><path d="M2 14 L13 3 L24 14" fill="none" stroke="#fff" stroke-width="3"/></svg>
<svg class="a" style="left:3602px;top:2598px" width="38" height="26"><path d="M6 24 a6 6 0 0 1 0 -12 a10 10 0 0 1 19 -4 a8 8 0 0 1 7 16Z" fill="#eee"/></svg>
<svg class="a" style="left:3667px;top:2596px" width="36" height="36"><rect x="2" y="4" width="22" height="18" fill="none" stroke="#eee" stroke-width="3"/><path d="M8 30 H20 M14 22 V30" stroke="#eee" stroke-width="3"/><rect x="26" y="2" width="7" height="12" fill="none" stroke="#eee" stroke-width="2"/><path d="M29 14 V32" stroke="#eee" stroke-width="2"/></svg>
<svg class="a" style="left:3716px;top:2598px" width="36" height="32"><path d="M2 10 H9 L18 2 V30 L9 22 H2Z" fill="none" stroke="#eee" stroke-width="3"/><path d="M24 9 a9 9 0 0 1 0 14" fill="none" stroke="#eee" stroke-width="2.5"/></svg>
<svg class="a" style="left:3764px;top:2598px" width="38" height="30"><rect x="2" y="8" width="30" height="18" rx="3" fill="none" stroke="#eee" stroke-width="3"/><rect x="32" y="13" width="4" height="8" fill="#eee"/><path d="M14 2 L8 14 H14 L10 24" fill="none" stroke="#eee" stroke-width="2.5"/></svg>
<div class="a" style="left:3840px;top:2585px;width:108px;text-align:right;font-size:24px;color:#fff;white-space:nowrap">12:45 PM</div>
<div class="a" style="left:3830px;top:2617px;width:118px;text-align:right;font-size:24px;color:#fff;white-space:nowrap">3/24/2024</div>
<svg class="a" style="left:3961px;top:2596px" width="30" height="36"><path d="M15 2 a10 10 0 0 1 10 10 V24 L28 28 H2 L5 24 V12 a10 10 0 0 1 10 -10Z" fill="#d9a0e6"/><circle cx="15" cy="32" r="4" fill="#d9a0e6"/></svg>
<svg class="a" style="left:4025px;top:2590px" width="48" height="48"><path d="M6 14 Q14 2 28 6 L20 30 Q8 34 6 14Z" fill="#33b8e8"/><path d="M28 6 Q44 8 42 26 L26 32Z" fill="#b86ae0"/><path d="M20 30 L42 26 Q38 40 22 40Z" fill="#f2a23a"/><rect x="16" y="32" width="30" height="14" rx="2" fill="#f5c518"/><text x="31" y="43" font-size="10" font-weight="700" text-anchor="middle" fill="#222" font-family="Liberation Sans">PRE</text></svg>
</body></html>
